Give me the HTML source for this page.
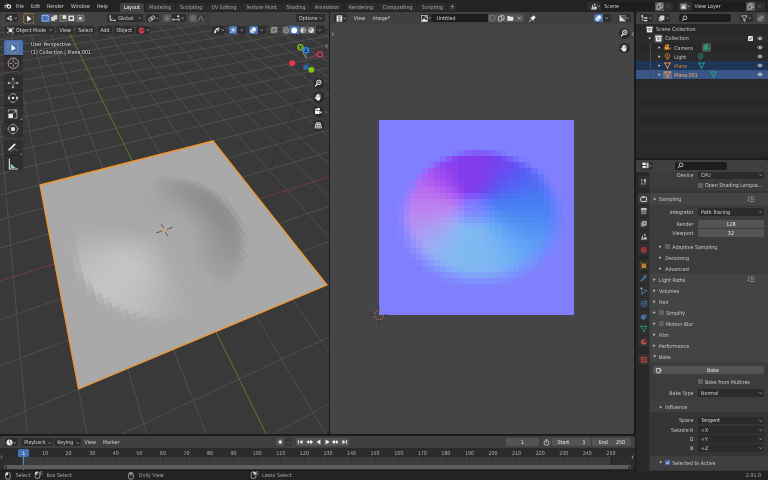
<!DOCTYPE html>
<html><head><meta charset="utf-8"><title>Blender</title>
<style>
html,body{margin:0;padding:0;}
body{width:768px;height:480px;overflow:hidden;background:#1c1c1c;position:relative;font-family:"DejaVu Sans Condensed","DejaVu Sans","Liberation Sans",sans-serif;}
#root{left:0;top:0;width:768px;height:480px;will-change:transform;}
div,span.t,svg{position:absolute;}
div{box-sizing:border-box;}
span.t{line-height:10px;height:10px;white-space:nowrap;}
</style></head><body><div id="root">
<div style="left:0px;top:0px;width:768px;height:12px;background:#232323;"></div>
<div style="left:0;top:12px;width:328.5px;height:422.3px;border-radius:2.5px;overflow:hidden;background:#393939"></div>
<svg style="left:0;top:12px" width="328.5" height="422.3" viewBox="0 12 328.5 422.3"><rect x="0" y="12" width="328.5" height="422.3" fill="#393939"/><path d="M263.3 439.0L333.0 401.9M27.7 439.0L-4.0 79.4M111.3 439.0L333.0 335.1M87.9 439.0L6.6 8.0M-4.0 423.5L333.0 282.5M148.2 439.0L23.5 8.0M-4.0 367.4L333.0 240.0M208.4 439.0L40.3 8.0M-4.0 321.1L333.0 205.0M328.7 439.0L74.0 8.0M-4.0 249.3L333.0 150.7M333.0 358.2L90.9 8.0M-4.0 220.9L333.0 129.2M333.0 292.6L107.7 8.0M-4.0 196.2L333.0 110.5M333.0 241.7L124.5 8.0M-4.0 174.5L333.0 94.1M333.0 201.2L141.3 8.0M-4.0 155.3L333.0 79.5M333.0 168.1L158.1 8.0M-4.0 138.1L333.0 66.6M333.0 140.5L174.9 8.0M-4.0 122.8L333.0 54.9M333.0 117.3L191.7 8.0M-4.0 108.9L333.0 44.5M333.0 97.4L208.5 8.0M-4.0 96.4L333.0 35.0M333.0 80.2L225.3 8.0M-4.0 84.9L333.0 26.3M333.0 65.1L242.0 8.0M-4.0 74.5L333.0 18.4M333.0 51.9L258.8 8.0M-4.0 64.9L333.0 11.1M333.0 40.1L275.5 8.0M-4.0 56.1L309.8 8.0M333.0 29.5L292.2 8.0M-4.0 47.9L266.9 8.0M333.0 20.1L309.0 8.0M-4.0 40.3L223.9 8.0M333.0 11.5L325.7 8.0M-4.0 33.3L180.8 8.0M-4.0 26.7L137.7 8.0M-4.0 20.6L94.5 8.0M-4.0 14.8L51.3 8.0M-4.0 9.4L8.0 8.0" stroke="#575757" stroke-width="0.7" fill="none"/><path d="M-4.0 282.3L333.0 175.7" stroke="#8a3c46" stroke-width="0.7" fill="none"/><path d="M268.6 439.0L57.2 8.0" stroke="#689a2a" stroke-width="0.7" fill="none"/><path d="M310.5 72L269 169.5" stroke="#2a2a2a" stroke-width="0.5"/><polygon points="213.0,141.0 40.0,185.0 78.5,389.0 327.0,285.0" fill="#a9a9a9"/><g shape-rendering="crispEdges"><polygon points="154.6,326.1 161.5,323.4 158.9,316.7 152.1,319.4" fill="#aaaaaa"/><polygon points="161.0,323.6 167.8,321.0 165.1,314.3 158.4,316.9" fill="#acacac"/><polygon points="167.3,321.2 180.2,316.1 177.4,309.6 164.6,314.5" fill="#adadad"/><polygon points="179.7,316.3 186.3,313.7 183.4,307.3 176.9,309.8" fill="#acacac"/><polygon points="185.8,313.9 192.3,311.3 189.4,304.9 182.9,307.4" fill="#aaaaaa"/><polygon points="139.5,324.8 146.4,322.1 144.1,315.5 137.2,318.1" fill="#aaaaaa"/><polygon points="145.9,322.3 152.8,319.7 150.3,313.1 143.6,315.7" fill="#afafaf"/><polygon points="152.3,319.9 159.1,317.2 156.6,310.7 149.8,313.3" fill="#b2b2b2"/><polygon points="158.6,317.4 165.3,314.8 162.7,308.3 156.1,310.9" fill="#b3b3b3"/><polygon points="164.8,315.0 171.5,312.4 168.8,306.0 162.2,308.5" fill="#b2b2b2"/><polygon points="171.0,312.6 177.6,310.1 174.8,303.7 168.3,306.2" fill="#b0b0b0"/><polygon points="177.1,310.3 183.6,307.7 180.8,301.5 174.4,303.9" fill="#adadad"/><polygon points="183.1,307.9 189.6,305.4 186.7,299.2 180.3,301.6" fill="#ababab"/><polygon points="218.2,294.3 224.2,292.0 221.0,286.1 215.0,288.4" fill="#a8a8a8"/><polygon points="223.8,292.2 235.4,287.7 232.0,281.9 220.6,286.3" fill="#a7a7a7"/><polygon points="234.9,287.9 240.8,285.6 237.4,279.9 231.6,282.1" fill="#a8a8a8"/><polygon points="131.0,321.0 137.9,318.4 135.7,311.8 128.8,314.4" fill="#adadad"/><polygon points="137.4,318.6 144.2,315.9 141.9,309.5 135.2,312.0" fill="#b4b4b4"/><polygon points="143.7,316.1 150.5,313.5 148.1,307.1 141.4,309.6" fill="#b8b8b8"/><polygon points="150.0,313.7 156.7,311.2 154.3,304.8 147.6,307.3" fill="#b7b7b7"/><polygon points="156.3,311.4 162.9,308.8 160.4,302.5 153.8,305.0" fill="#b5b5b5"/><polygon points="162.4,309.0 169.0,306.5 166.4,300.3 159.9,302.7" fill="#b3b3b3"/><polygon points="168.5,306.7 175.0,304.2 172.4,298.0 165.9,300.4" fill="#b0b0b0"/><polygon points="174.6,304.4 181.0,301.9 178.3,295.8 171.9,298.2" fill="#aeaeae"/><polygon points="180.5,302.1 186.9,299.7 184.1,293.6 177.8,296.0" fill="#ababab"/><polygon points="215.2,288.9 221.2,286.6 218.1,280.8 212.1,283.1" fill="#a6a6a6"/><polygon points="220.8,286.7 226.8,284.4 223.6,278.8 217.6,281.0" fill="#a4a4a4"/><polygon points="226.3,284.6 232.2,282.4 229.0,276.7 223.1,278.9" fill="#a3a3a3"/><polygon points="231.8,282.5 237.7,280.3 234.4,274.7 228.6,276.9" fill="#a4a4a4"/><polygon points="237.2,280.5 243.0,278.2 239.7,272.7 233.9,274.9" fill="#a7a7a7"/><polygon points="122.6,317.3 129.5,314.7 127.4,308.2 120.5,310.7" fill="#b0b0b0"/><polygon points="129.0,314.9 135.8,312.3 133.6,305.9 126.9,308.4" fill="#b9b9b9"/><polygon points="135.3,312.5 142.1,309.9 139.8,303.6 133.1,306.1" fill="#bcbcbc"/><polygon points="141.6,310.1 148.3,307.6 146.0,301.3 139.4,303.8" fill="#bbbbbb"/><polygon points="147.8,307.8 154.5,305.3 152.1,299.1 145.5,301.5" fill="#b9b9b9"/><polygon points="154.0,305.5 160.6,303.0 158.1,296.8 151.6,299.2" fill="#b7b7b7"/><polygon points="160.1,303.2 166.6,300.7 164.1,294.6 157.6,297.0" fill="#b4b4b4"/><polygon points="166.1,300.9 172.6,298.5 170.0,292.4 163.6,294.8" fill="#b1b1b1"/><polygon points="172.1,298.6 178.5,296.2 175.8,290.3 169.5,292.6" fill="#afafaf"/><polygon points="178.0,296.4 184.3,294.0 181.6,288.1 175.4,290.4" fill="#acacac"/><polygon points="212.3,283.5 218.3,281.3 215.2,275.7 209.3,277.9" fill="#a5a5a5"/><polygon points="217.9,281.4 223.8,279.2 220.7,273.7 214.8,275.8" fill="#a3a3a3"/><polygon points="223.4,279.4 234.6,275.1 231.4,269.7 220.2,273.8" fill="#a0a0a0"/><polygon points="234.2,275.3 239.9,273.1 236.6,267.7 230.9,269.9" fill="#a1a1a1"/><polygon points="239.5,273.3 245.2,271.1 241.9,265.8 236.2,267.9" fill="#a5a5a5"/><polygon points="114.3,313.6 121.2,311.0 119.2,304.7 112.4,307.2" fill="#b1b1b1"/><polygon points="120.7,311.2 127.5,308.7 125.5,302.4 118.7,304.9" fill="#bcbcbc"/><polygon points="127.0,308.9 133.8,306.4 131.7,300.1 125.0,302.6" fill="#bfbfbf"/><polygon points="133.3,306.5 140.0,304.1 137.8,297.9 131.2,300.3" fill="#bebebe"/><polygon points="139.5,304.2 146.2,301.8 143.9,295.7 137.3,298.1" fill="#bcbcbc"/><polygon points="145.7,302.0 152.2,299.5 149.9,293.5 143.4,295.8" fill="#bababa"/><polygon points="151.8,299.7 158.3,297.3 155.9,291.3 149.4,293.6" fill="#b8b8b8"/><polygon points="157.8,297.5 164.2,295.1 161.8,289.1 155.4,291.5" fill="#b5b5b5"/><polygon points="163.8,295.2 170.2,292.9 167.6,287.0 161.3,289.3" fill="#b3b3b3"/><polygon points="169.7,293.1 176.0,290.7 173.4,284.9 167.2,287.2" fill="#afafaf"/><polygon points="175.5,290.9 181.8,288.6 179.1,282.8 173.0,285.0" fill="#acacac"/><polygon points="181.4,288.7 187.6,286.4 184.8,280.7 178.7,283.0" fill="#aaaaaa"/><polygon points="204.0,280.3 210.0,278.1 207.0,272.6 201.1,274.8" fill="#a8a8a8"/><polygon points="209.5,278.3 215.5,276.1 212.5,270.6 206.6,272.8" fill="#a4a4a4"/><polygon points="215.0,276.2 220.9,274.1 217.8,268.7 212.0,270.8" fill="#a1a1a1"/><polygon points="220.5,274.2 226.3,272.1 223.1,266.7 217.4,268.8" fill="#9f9f9f"/><polygon points="225.8,272.2 231.6,270.1 228.4,264.8 222.7,266.9" fill="#9d9d9d"/><polygon points="231.2,270.3 236.9,268.1 233.6,262.9 228.0,264.9" fill="#9c9c9c"/><polygon points="236.4,268.3 242.1,266.2 238.8,261.0 233.2,263.0" fill="#9f9f9f"/><polygon points="241.7,266.4 247.3,264.3 244.0,259.1 238.4,261.1" fill="#a4a4a4"/><polygon points="106.1,310.0 113.0,307.4 111.2,301.2 104.4,303.6" fill="#b0b0b0"/><polygon points="112.5,307.6 119.4,305.1 117.4,298.9 110.7,301.4" fill="#bdbdbd"/><polygon points="118.9,305.3 125.6,302.8 123.6,296.7 116.9,299.1" fill="#c1c1c1"/><polygon points="125.1,303.0 131.8,300.6 129.8,294.5 123.1,296.9" fill="#c0c0c0"/><polygon points="131.3,300.8 138.0,298.3 135.8,292.3 129.3,294.7" fill="#bfbfbf"/><polygon points="137.5,298.5 144.1,296.1 141.8,290.1 135.3,292.5" fill="#bebebe"/><polygon points="143.6,296.3 150.1,293.9 147.8,288.0 141.4,290.3" fill="#bcbcbc"/><polygon points="149.6,294.1 156.0,291.7 153.7,285.9 147.3,288.2" fill="#bababa"/><polygon points="155.6,291.9 162.0,289.6 159.5,283.8 153.2,286.0" fill="#b7b7b7"/><polygon points="161.5,289.7 167.8,287.4 165.3,281.7 159.1,283.9" fill="#b4b4b4"/><polygon points="167.3,287.6 173.6,285.3 171.1,279.6 164.9,281.8" fill="#b0b0b0"/><polygon points="173.1,285.5 179.3,283.2 176.7,277.6 170.6,279.8" fill="#adadad"/><polygon points="178.9,283.4 185.0,281.1 182.4,275.5 176.3,277.7" fill="#aaaaaa"/><polygon points="201.3,275.2 207.2,273.0 204.4,267.6 198.5,269.7" fill="#a7a7a7"/><polygon points="206.8,273.2 212.7,271.0 209.7,265.7 203.9,267.8" fill="#a3a3a3"/><polygon points="212.2,271.2 218.0,269.1 215.1,263.8 209.3,265.8" fill="#a1a1a1"/><polygon points="217.6,269.2 223.4,267.1 220.3,261.9 214.6,263.9" fill="#9e9e9e"/><polygon points="223.0,267.3 228.7,265.2 225.6,260.0 219.9,262.0" fill="#9c9c9c"/><polygon points="228.2,265.3 233.9,263.3 230.7,258.1 225.1,260.1" fill="#9a9a9a"/><polygon points="233.5,263.4 239.1,261.4 235.9,256.3 230.3,258.3" fill="#999999"/><polygon points="238.7,261.5 244.2,259.5 241.0,254.4 235.5,256.4" fill="#9d9d9d"/><polygon points="243.8,259.6 249.3,257.6 246.0,252.6 240.6,254.6" fill="#a4a4a4"/><polygon points="98.1,306.4 105.0,303.9 103.3,297.7 96.4,300.2" fill="#adadad"/><polygon points="104.5,304.1 111.3,301.6 109.5,295.5 102.8,297.9" fill="#bbbbbb"/><polygon points="110.8,301.8 123.8,297.1 121.8,291.2 109.0,295.7" fill="#c2c2c2"/><polygon points="123.3,297.3 129.9,294.9 127.9,289.0 121.3,291.3" fill="#c1c1c1"/><polygon points="129.4,295.1 136.0,292.7 133.9,286.9 127.4,289.2" fill="#c0c0c0"/><polygon points="135.5,292.9 142.0,290.6 139.8,284.7 133.4,287.0" fill="#bfbfbf"/><polygon points="141.5,290.7 148.0,288.4 145.7,282.7 139.4,284.9" fill="#bebebe"/><polygon points="147.5,288.6 153.9,286.3 151.6,280.6 145.3,282.8" fill="#bcbcbc"/><polygon points="153.4,286.5 159.7,284.2 157.4,278.5 151.1,280.7" fill="#b9b9b9"/><polygon points="159.3,284.4 165.5,282.1 163.1,276.5 156.9,278.7" fill="#b6b6b6"/><polygon points="165.1,282.3 171.2,280.0 168.8,274.5 162.6,276.7" fill="#b2b2b2"/><polygon points="170.8,280.2 176.9,278.0 174.4,272.5 168.3,274.6" fill="#aeaeae"/><polygon points="176.5,278.1 182.6,276.0 180.0,270.5 173.9,272.6" fill="#aaaaaa"/><polygon points="198.7,270.1 204.6,268.0 201.7,262.8 195.9,264.8" fill="#a6a6a6"/><polygon points="204.1,268.2 209.9,266.1 207.1,260.9 201.3,262.9" fill="#a3a3a3"/><polygon points="209.5,266.2 215.3,264.2 212.3,259.0 206.6,261.0" fill="#a0a0a0"/><polygon points="214.8,264.3 220.6,262.3 217.6,257.1 211.9,259.1" fill="#9d9d9d"/><polygon points="220.1,262.4 225.8,260.4 222.8,255.3 217.2,257.3" fill="#9b9b9b"/><polygon points="225.4,260.5 231.0,258.5 227.9,253.5 222.3,255.4" fill="#999999"/><polygon points="230.6,258.7 241.2,254.8 238.0,249.9 227.5,253.6" fill="#979797"/><polygon points="240.8,255.0 246.2,253.0 243.0,248.1 237.6,250.0" fill="#9e9e9e"/><polygon points="245.8,253.1 251.2,251.2 248.0,246.3 242.6,248.2" fill="#a6a6a6"/><polygon points="96.6,300.6 103.4,298.2 101.7,292.2 95.0,294.5" fill="#b5b5b5"/><polygon points="102.9,298.4 109.6,296.0 107.9,290.0 101.2,292.3" fill="#c2c2c2"/><polygon points="109.1,296.2 122.0,291.6 120.1,285.7 107.4,290.2" fill="#c3c3c3"/><polygon points="121.5,291.8 134.0,287.3 132.0,281.6 119.6,285.9" fill="#c2c2c2"/><polygon points="133.6,287.5 140.0,285.2 137.9,279.5 131.5,281.7" fill="#c1c1c1"/><polygon points="139.5,285.3 145.9,283.1 143.7,277.4 137.4,279.7" fill="#c0c0c0"/><polygon points="145.4,283.2 151.7,281.0 149.5,275.4 143.3,277.6" fill="#bebebe"/><polygon points="151.3,281.2 157.5,278.9 155.2,273.4 149.0,275.6" fill="#bbbbbb"/><polygon points="157.1,279.1 163.3,276.9 160.9,271.4 154.8,273.6" fill="#b7b7b7"/><polygon points="162.8,277.1 169.0,274.9 166.5,269.5 160.5,271.6" fill="#b3b3b3"/><polygon points="168.5,275.0 174.6,272.9 172.1,267.5 166.1,269.6" fill="#aeaeae"/><polygon points="174.1,273.0 180.2,270.9 177.6,265.6 171.7,267.7" fill="#aaaaaa"/><polygon points="196.1,265.2 202.0,263.1 199.2,258.0 193.4,260.0" fill="#a6a6a6"/><polygon points="201.5,263.3 207.3,261.3 204.5,256.2 198.8,258.2" fill="#a3a3a3"/><polygon points="206.9,261.4 212.6,259.4 209.7,254.3 204.0,256.3" fill="#a0a0a0"/><polygon points="212.1,259.5 217.8,257.5 214.9,252.5 209.3,254.5" fill="#9d9d9d"/><polygon points="217.4,257.7 223.0,255.7 220.0,250.7 214.5,252.7" fill="#9a9a9a"/><polygon points="222.6,255.8 228.1,253.8 225.1,248.9 219.6,250.9" fill="#989898"/><polygon points="227.7,254.0 233.2,252.0 230.2,247.2 224.7,249.1" fill="#969696"/><polygon points="232.8,252.2 238.3,250.2 235.2,245.4 229.7,247.3" fill="#959595"/><polygon points="237.9,250.4 243.3,248.5 240.1,243.7 234.8,245.5" fill="#979797"/><polygon points="242.9,248.6 248.2,246.7 245.0,241.9 239.7,243.8" fill="#a0a0a0"/><polygon points="247.8,246.8 253.1,244.9 249.9,240.2 244.6,242.1" fill="#a8a8a8"/><polygon points="88.8,297.2 95.6,294.8 94.0,288.9 87.3,291.2" fill="#aeaeae"/><polygon points="95.1,295.0 101.8,292.6 100.2,286.7 93.5,289.0" fill="#bebebe"/><polygon points="101.3,292.8 138.0,279.9 136.0,274.4 99.7,286.9" fill="#c3c3c3"/><polygon points="137.6,280.1 143.9,277.9 141.8,272.4 135.5,274.5" fill="#c1c1c1"/><polygon points="143.4,278.0 149.7,275.8 147.5,270.4 141.3,272.5" fill="#bfbfbf"/><polygon points="149.2,276.0 155.4,273.8 153.2,268.4 147.0,270.5" fill="#bcbcbc"/><polygon points="154.9,274.0 161.1,271.8 158.8,266.5 152.7,268.6" fill="#b8b8b8"/><polygon points="160.6,272.0 166.7,269.9 164.3,264.5 158.3,266.6" fill="#b3b3b3"/><polygon points="166.3,270.0 172.3,267.9 169.9,262.6 163.9,264.7" fill="#afafaf"/><polygon points="171.8,268.1 177.8,266.0 175.3,260.8 169.4,262.8" fill="#ababab"/><polygon points="188.3,262.3 194.1,260.3 191.4,255.2 185.7,257.2" fill="#a8a8a8"/><polygon points="193.6,260.4 199.4,258.4 196.7,253.4 191.0,255.3" fill="#a6a6a6"/><polygon points="199.0,258.5 204.7,256.5 201.9,251.6 196.3,253.5" fill="#a3a3a3"/><polygon points="204.3,256.7 209.9,254.7 207.1,249.8 201.5,251.7" fill="#a0a0a0"/><polygon points="209.5,254.8 215.1,252.9 212.2,248.0 206.7,249.9" fill="#9d9d9d"/><polygon points="214.7,253.0 220.2,251.1 217.3,246.2 211.8,248.1" fill="#9a9a9a"/><polygon points="219.8,251.2 225.3,249.3 222.4,244.5 216.9,246.4" fill="#979797"/><polygon points="224.9,249.4 230.4,247.5 227.4,242.8 222.0,244.6" fill="#959595"/><polygon points="230.0,247.7 235.4,245.8 232.3,241.0 227.0,242.9" fill="#949494"/><polygon points="235.0,245.9 240.3,244.0 237.3,239.3 232.0,241.2" fill="#939393"/><polygon points="239.9,244.2 245.3,242.3 242.1,237.7 236.9,239.5" fill="#9a9a9a"/><polygon points="244.9,242.4 250.1,240.6 247.0,236.0 241.8,237.8" fill="#a4a4a4"/><polygon points="87.4,291.6 94.1,289.3 92.6,283.5 85.9,285.8" fill="#b4b4b4"/><polygon points="93.6,289.5 100.3,287.2 98.7,281.4 92.1,283.7" fill="#c2c2c2"/><polygon points="99.8,287.3 112.5,282.9 110.7,277.3 98.2,281.6" fill="#c3c3c3"/><polygon points="112.0,283.1 136.1,274.8 134.1,269.3 110.2,277.5" fill="#c4c4c4"/><polygon points="135.7,274.9 141.9,272.8 139.8,267.4 133.7,269.5" fill="#c2c2c2"/><polygon points="141.5,272.9 147.6,270.8 145.5,265.4 139.4,267.5" fill="#c0c0c0"/><polygon points="147.2,270.9 153.3,268.8 151.1,263.5 145.1,265.6" fill="#bdbdbd"/><polygon points="152.9,269.0 158.9,266.9 156.7,261.6 150.7,263.7" fill="#b8b8b8"/><polygon points="158.5,267.0 164.5,264.9 162.2,259.8 156.2,261.8" fill="#b4b4b4"/><polygon points="164.1,265.1 170.0,263.0 167.7,257.9 161.8,259.9" fill="#afafaf"/><polygon points="169.6,263.2 175.5,261.1 173.1,256.0 167.2,258.0" fill="#ababab"/><polygon points="185.9,257.5 191.6,255.6 189.0,250.6 183.3,252.5" fill="#a8a8a8"/><polygon points="191.2,255.7 196.9,253.7 194.3,248.8 188.6,250.7" fill="#a6a6a6"/><polygon points="196.5,253.9 202.1,251.9 199.4,247.0 193.8,249.0" fill="#a4a4a4"/><polygon points="201.7,252.1 207.3,250.1 204.6,245.3 199.0,247.2" fill="#a1a1a1"/><polygon points="206.9,250.3 212.5,248.3 209.7,243.6 204.2,245.4" fill="#9e9e9e"/><polygon points="212.0,248.5 217.5,246.6 214.7,241.8 209.3,243.7" fill="#9a9a9a"/><polygon points="217.1,246.7 222.6,244.8 219.7,240.1 214.3,242.0" fill="#979797"/><polygon points="222.2,245.0 227.6,243.1 224.7,238.4 219.3,240.3" fill="#949494"/><polygon points="227.2,243.2 237.5,239.7 234.5,235.1 224.3,238.6" fill="#929292"/><polygon points="237.1,239.8 242.4,238.0 239.3,233.4 234.1,235.2" fill="#949494"/><polygon points="242.0,238.1 247.2,236.3 244.1,231.8 238.9,233.6" fill="#9f9f9f"/><polygon points="246.8,236.5 252.0,234.7 248.9,230.2 243.7,231.9" fill="#a8a8a8"/><polygon points="79.8,288.3 86.5,286.0 85.1,280.3 78.4,282.6" fill="#ababab"/><polygon points="86.0,286.2 92.7,283.9 91.2,278.3 84.6,280.5" fill="#bababa"/><polygon points="92.2,284.1 104.8,279.8 103.2,274.2 90.7,278.4" fill="#c2c2c2"/><polygon points="104.4,279.9 110.8,277.7 109.1,272.2 102.7,274.4" fill="#c3c3c3"/><polygon points="110.4,277.9 122.7,273.7 120.8,268.3 108.7,272.4" fill="#c4c4c4"/><polygon points="122.2,273.9 128.5,271.7 126.6,266.4 120.4,268.4" fill="#c5c5c5"/><polygon points="128.0,271.9 134.3,269.7 132.3,264.4 126.1,266.5" fill="#c4c4c4"/><polygon points="133.8,269.9 140.0,267.8 138.0,262.5 131.8,264.6" fill="#c3c3c3"/><polygon points="139.5,267.9 145.7,265.8 143.6,260.6 137.5,262.7" fill="#c0c0c0"/><polygon points="145.2,266.0 151.3,263.9 149.1,258.8 143.1,260.8" fill="#bcbcbc"/><polygon points="150.8,264.1 156.8,262.0 154.6,256.9 148.7,258.9" fill="#b8b8b8"/><polygon points="156.4,262.2 162.4,260.1 160.1,255.1 154.2,257.1" fill="#b4b4b4"/><polygon points="161.9,260.3 167.8,258.3 165.5,253.2 159.7,255.2" fill="#afafaf"/><polygon points="167.4,258.4 173.3,256.4 170.9,251.4 165.1,253.4" fill="#ababab"/><polygon points="183.5,252.9 189.2,251.0 186.7,246.1 181.0,248.0" fill="#a8a8a8"/><polygon points="188.8,251.1 194.5,249.2 191.9,244.4 186.3,246.3" fill="#a7a7a7"/><polygon points="194.0,249.3 199.6,247.4 197.0,242.6 191.5,244.5" fill="#a5a5a5"/><polygon points="199.2,247.5 204.8,245.6 202.1,240.9 196.6,242.8" fill="#a2a2a2"/><polygon points="204.4,245.8 209.9,243.9 207.1,239.2 201.7,241.1" fill="#9f9f9f"/><polygon points="209.5,244.0 214.9,242.2 212.1,237.5 206.7,239.4" fill="#9b9b9b"/><polygon points="214.5,242.3 219.9,240.5 217.1,235.9 211.7,237.7" fill="#979797"/><polygon points="219.5,240.6 224.9,238.8 222.0,234.2 216.7,236.0" fill="#949494"/><polygon points="224.5,238.9 239.5,233.8 236.5,229.3 221.6,234.3" fill="#919191"/><polygon points="239.1,233.9 244.3,232.1 241.3,227.7 236.2,229.5" fill="#9a9a9a"/><polygon points="244.0,232.3 249.1,230.5 246.0,226.1 240.9,227.9" fill="#a6a6a6"/><polygon points="78.5,283.0 85.2,280.7 83.8,275.2 77.2,277.4" fill="#aeaeae"/><polygon points="84.7,280.9 91.3,278.7 89.8,273.2 83.3,275.3" fill="#bdbdbd"/><polygon points="90.8,278.9 103.3,274.6 101.7,269.2 89.4,273.3" fill="#c1c1c1"/><polygon points="102.9,274.8 109.3,272.6 107.6,267.3 101.3,269.4" fill="#c2c2c2"/><polygon points="108.8,272.8 115.1,270.7 113.4,265.3 107.1,267.4" fill="#c3c3c3"/><polygon points="114.7,270.8 132.4,264.8 130.5,259.6 112.9,265.5" fill="#c4c4c4"/><polygon points="132.0,265.0 138.1,262.9 136.1,257.8 130.1,259.8" fill="#c2c2c2"/><polygon points="137.7,263.1 143.7,261.0 141.7,255.9 135.7,257.9" fill="#bfbfbf"/><polygon points="143.3,261.2 149.3,259.1 147.2,254.1 141.2,256.1" fill="#bcbcbc"/><polygon points="148.8,259.3 154.8,257.3 152.6,252.3 146.8,254.2" fill="#b8b8b8"/><polygon points="154.4,257.4 160.3,255.4 158.1,250.5 152.2,252.4" fill="#b3b3b3"/><polygon points="159.8,255.6 165.7,253.6 163.4,248.7 157.6,250.6" fill="#afafaf"/><polygon points="165.3,253.8 171.1,251.8 168.7,246.9 163.0,248.8" fill="#ababab"/><polygon points="181.2,248.4 186.9,246.5 184.4,241.7 178.8,243.6" fill="#a8a8a8"/><polygon points="186.5,246.6 192.1,244.7 189.5,240.0 184.0,241.9" fill="#a7a7a7"/><polygon points="191.6,244.9 197.2,243.0 194.6,238.3 189.1,240.2" fill="#a6a6a6"/><polygon points="196.8,243.1 202.3,241.3 199.7,236.6 194.2,238.5" fill="#a3a3a3"/><polygon points="201.9,241.4 207.3,239.6 204.7,235.0 199.3,236.8" fill="#a0a0a0"/><polygon points="206.9,239.7 212.4,237.9 209.6,233.3 204.3,235.1" fill="#9c9c9c"/><polygon points="212.0,238.0 217.3,236.2 214.6,231.7 209.2,233.5" fill="#989898"/><polygon points="216.9,236.3 222.2,234.5 219.4,230.1 214.2,231.8" fill="#949494"/><polygon points="221.8,234.7 227.1,232.9 224.3,228.5 219.0,230.2" fill="#919191"/><polygon points="226.7,233.0 236.8,229.7 233.8,225.3 223.9,228.6" fill="#8f8f8f"/><polygon points="236.4,229.8 241.5,228.0 238.5,223.7 233.4,225.4" fill="#969696"/><polygon points="241.1,228.2 246.2,226.5 243.2,222.2 238.2,223.8" fill="#a3a3a3"/><polygon points="77.3,277.8 83.9,275.6 82.5,270.1 76.0,272.3" fill="#b0b0b0"/><polygon points="83.4,275.7 89.9,273.6 88.5,268.2 82.1,270.3" fill="#bebebe"/><polygon points="89.5,273.7 95.9,271.6 94.4,266.2 88.0,268.3" fill="#bfbfbf"/><polygon points="95.4,271.7 101.8,269.6 100.3,264.3 93.9,266.4" fill="#c0c0c0"/><polygon points="101.4,269.8 107.7,267.7 106.1,262.4 99.8,264.5" fill="#c1c1c1"/><polygon points="107.2,267.8 113.5,265.7 111.8,260.5 105.6,262.6" fill="#c2c2c2"/><polygon points="113.1,265.9 125.0,261.9 123.2,256.8 111.4,260.7" fill="#c3c3c3"/><polygon points="124.6,262.0 130.7,260.0 128.8,254.9 122.7,256.9" fill="#c2c2c2"/><polygon points="130.2,260.2 136.3,258.1 134.3,253.1 128.3,255.1" fill="#c0c0c0"/><polygon points="135.8,258.3 141.8,256.3 139.8,251.3 133.9,253.3" fill="#bebebe"/><polygon points="141.4,256.4 147.3,254.5 145.3,249.5 139.4,251.5" fill="#bababa"/><polygon points="146.9,254.6 152.8,252.6 150.7,247.8 144.9,249.7" fill="#b7b7b7"/><polygon points="152.4,252.8 158.2,250.8 156.1,246.0 150.3,247.9" fill="#b3b3b3"/><polygon points="157.8,251.0 163.6,249.1 161.4,244.3 155.6,246.1" fill="#afafaf"/><polygon points="163.2,249.2 168.9,247.3 166.6,242.5 160.9,244.4" fill="#ababab"/><polygon points="179.0,243.9 189.7,240.4 187.3,235.8 176.6,239.2" fill="#a8a8a8"/><polygon points="189.3,240.5 194.8,238.7 192.3,234.1 186.8,235.9" fill="#a6a6a6"/><polygon points="194.4,238.8 199.9,237.0 197.3,232.5 191.9,234.2" fill="#a4a4a4"/><polygon points="199.5,237.1 204.9,235.3 202.3,230.8 196.9,232.6" fill="#a0a0a0"/><polygon points="204.5,235.5 209.8,233.7 207.2,229.2 201.9,231.0" fill="#9c9c9c"/><polygon points="209.4,233.8 214.8,232.0 212.1,227.6 206.8,229.3" fill="#989898"/><polygon points="214.4,232.2 219.6,230.4 216.9,226.0 211.7,227.7" fill="#949494"/><polygon points="219.3,230.5 224.5,228.8 221.7,224.5 216.5,226.2" fill="#919191"/><polygon points="224.1,228.9 234.0,225.6 231.2,221.3 221.3,224.6" fill="#8f8f8f"/><polygon points="233.7,225.7 238.8,224.0 235.9,219.8 230.8,221.5" fill="#939393"/><polygon points="238.4,224.2 243.4,222.5 240.5,218.3 235.5,219.9" fill="#a0a0a0"/><polygon points="76.1,272.7 82.6,270.5 81.3,265.2 74.9,267.3" fill="#b2b2b2"/><polygon points="82.2,270.7 88.6,268.6 87.2,263.3 80.8,265.4" fill="#bdbdbd"/><polygon points="88.1,268.7 100.4,264.7 98.9,259.5 86.7,263.4" fill="#bebebe"/><polygon points="99.9,264.8 106.2,262.8 104.6,257.7 98.4,259.7" fill="#bfbfbf"/><polygon points="105.7,262.9 112.0,260.9 110.3,255.8 104.1,257.8" fill="#c0c0c0"/><polygon points="111.5,261.0 123.3,257.2 121.5,252.2 109.8,256.0" fill="#c1c1c1"/><polygon points="122.9,257.3 128.9,255.3 127.1,250.4 121.1,252.3" fill="#c0c0c0"/><polygon points="128.5,255.5 134.5,253.5 132.6,248.6 126.6,250.5" fill="#bebebe"/><polygon points="134.0,253.6 140.0,251.7 138.0,246.8 132.1,248.7" fill="#bbbbbb"/><polygon points="139.5,251.8 145.4,249.9 143.4,245.1 137.6,247.0" fill="#b8b8b8"/><polygon points="145.0,250.0 150.9,248.1 148.8,243.3 143.0,245.2" fill="#b5b5b5"/><polygon points="150.4,248.3 156.2,246.4 154.1,241.6 148.4,243.5" fill="#b1b1b1"/><polygon points="155.8,246.5 161.5,244.6 159.4,239.9 153.7,241.7" fill="#aeaeae"/><polygon points="161.1,244.7 166.8,242.9 164.6,238.2 158.9,240.0" fill="#ababab"/><polygon points="176.8,239.6 187.4,236.1 185.0,231.6 174.5,235.0" fill="#a8a8a8"/><polygon points="187.0,236.2 192.5,234.4 190.0,230.0 184.6,231.7" fill="#a7a7a7"/><polygon points="192.1,234.6 197.5,232.8 195.0,228.4 189.6,230.1" fill="#a5a5a5"/><polygon points="197.1,232.9 202.5,231.2 199.9,226.8 194.6,228.5" fill="#a1a1a1"/><polygon points="202.1,231.3 207.4,229.5 204.8,225.2 199.5,226.9" fill="#9d9d9d"/><polygon points="207.0,229.7 212.3,227.9 209.6,223.6 204.4,225.3" fill="#989898"/><polygon points="211.9,228.1 217.1,226.3 214.4,222.1 209.2,223.7" fill="#949494"/><polygon points="216.7,226.5 221.9,224.8 219.2,220.5 214.0,222.2" fill="#909090"/><polygon points="221.5,224.9 231.4,221.7 228.6,217.5 218.8,220.6" fill="#8e8e8e"/><polygon points="231.0,221.8 236.1,220.1 233.2,216.0 228.2,217.6" fill="#919191"/><polygon points="235.7,220.2 240.7,218.6 237.8,214.5 232.8,216.1" fill="#9e9e9e"/><polygon points="75.0,267.7 81.4,265.6 80.1,260.4 73.7,262.4" fill="#b2b2b2"/><polygon points="80.9,265.7 87.3,263.7 85.9,258.5 79.6,260.5" fill="#bbbbbb"/><polygon points="86.8,263.8 99.0,259.9 97.5,254.8 85.5,258.7" fill="#bcbcbc"/><polygon points="98.5,260.0 110.4,256.2 108.8,251.2 97.0,255.0" fill="#bdbdbd"/><polygon points="110.0,256.3 121.7,252.5 119.9,247.6 108.4,251.3" fill="#bebebe"/><polygon points="121.2,252.7 127.2,250.7 125.4,245.9 119.5,247.8" fill="#bdbdbd"/><polygon points="126.8,250.9 132.7,248.9 130.9,244.1 125.0,246.0" fill="#bbbbbb"/><polygon points="132.3,249.1 138.2,247.2 136.3,242.4 130.4,244.3" fill="#b8b8b8"/><polygon points="137.7,247.3 143.6,245.4 141.6,240.7 135.8,242.5" fill="#b5b5b5"/><polygon points="143.2,245.6 148.9,243.7 146.9,239.0 141.2,240.8" fill="#b2b2b2"/><polygon points="148.5,243.8 154.3,242.0 152.2,237.3 146.5,239.1" fill="#afafaf"/><polygon points="153.8,242.1 159.5,240.2 157.4,235.6 151.8,237.5" fill="#acacac"/><polygon points="159.1,240.4 164.7,238.6 162.6,234.0 157.0,235.8" fill="#aaaaaa"/><polygon points="174.6,235.3 180.1,233.6 177.8,229.1 172.4,230.9" fill="#a8a8a8"/><polygon points="179.7,233.7 190.2,230.3 187.8,225.9 177.4,229.2" fill="#a7a7a7"/><polygon points="189.8,230.4 195.2,228.7 192.7,224.3 187.4,226.0" fill="#a5a5a5"/><polygon points="194.8,228.8 200.1,227.1 197.6,222.8 192.3,224.5" fill="#a1a1a1"/><polygon points="199.7,227.2 205.0,225.5 202.4,221.2 197.2,222.9" fill="#9d9d9d"/><polygon points="204.6,225.6 209.8,223.9 207.2,219.7 202.0,221.4" fill="#989898"/><polygon points="209.4,224.1 214.6,222.4 212.0,218.2 206.8,219.8" fill="#949494"/><polygon points="214.2,222.5 219.4,220.8 216.7,216.7 211.6,218.3" fill="#909090"/><polygon points="219.0,221.0 224.1,219.3 221.4,215.2 216.3,216.8" fill="#8e8e8e"/><polygon points="223.7,219.4 228.8,217.8 226.0,213.7 221.0,215.3" fill="#8d8d8d"/><polygon points="228.4,217.9 233.4,216.3 230.6,212.2 225.6,213.8" fill="#909090"/><polygon points="233.1,216.4 238.0,214.8 235.2,210.7 230.3,212.3" fill="#9d9d9d"/><polygon points="73.8,262.8 80.2,260.8 78.9,255.7 72.6,257.7" fill="#b1b1b1"/><polygon points="79.7,260.9 86.0,258.9 84.7,253.9 78.5,255.8" fill="#b9b9b9"/><polygon points="85.6,259.0 108.9,251.6 107.3,246.7 84.2,254.0" fill="#bababa"/><polygon points="108.5,251.7 114.5,249.8 112.9,245.0 106.9,246.8" fill="#bbbbbb"/><polygon points="114.1,249.9 120.1,248.0 118.4,243.2 112.4,245.1" fill="#bababa"/><polygon points="119.6,248.1 125.6,246.2 123.8,241.5 117.9,243.4" fill="#b9b9b9"/><polygon points="125.1,246.4 131.0,244.5 129.2,239.8 123.4,241.6" fill="#b7b7b7"/><polygon points="130.6,244.6 136.4,242.8 134.5,238.1 128.8,239.9" fill="#b4b4b4"/><polygon points="136.0,242.9 141.8,241.0 139.8,236.4 134.1,238.2" fill="#b2b2b2"/><polygon points="141.3,241.2 147.1,239.3 145.1,234.8 139.4,236.6" fill="#afafaf"/><polygon points="146.6,239.5 152.3,237.7 150.3,233.1 144.7,234.9" fill="#adadad"/><polygon points="151.9,237.8 157.6,236.0 155.5,231.5 149.9,233.2" fill="#ababab"/><polygon points="167.4,232.8 178.0,229.4 175.7,225.1 165.3,228.4" fill="#a8a8a8"/><polygon points="177.6,229.6 188.0,226.2 185.6,222.0 175.3,225.2" fill="#a7a7a7"/><polygon points="187.6,226.4 192.9,224.7 190.5,220.4 185.2,222.1" fill="#a5a5a5"/><polygon points="192.5,224.8 197.8,223.1 195.3,218.9 190.1,220.5" fill="#a1a1a1"/><polygon points="197.4,223.2 202.6,221.5 200.1,217.4 194.9,219.0" fill="#9d9d9d"/><polygon points="202.2,221.7 207.4,220.0 204.9,215.9 199.7,217.5" fill="#989898"/><polygon points="207.0,220.1 212.2,218.5 209.6,214.4 204.5,216.0" fill="#939393"/><polygon points="211.8,218.6 216.9,217.0 214.3,212.9 209.2,214.5" fill="#909090"/><polygon points="216.5,217.1 226.2,214.0 223.5,210.0 213.9,213.0" fill="#8d8d8d"/><polygon points="225.9,214.1 230.8,212.5 228.1,208.5 223.2,210.1" fill="#909090"/><polygon points="230.5,212.6 235.4,211.0 232.6,207.1 227.7,208.6" fill="#9d9d9d"/><polygon points="72.7,258.1 79.0,256.1 77.8,251.1 71.5,253.0" fill="#afafaf"/><polygon points="78.6,256.2 113.0,245.3 111.4,240.6 77.3,251.2" fill="#b7b7b7"/><polygon points="112.6,245.4 118.5,243.6 116.8,238.9 110.9,240.7" fill="#b6b6b6"/><polygon points="118.0,243.7 123.9,241.8 122.2,237.2 116.4,239.0" fill="#b5b5b5"/><polygon points="123.5,242.0 129.3,240.1 127.5,235.5 121.8,237.3" fill="#b3b3b3"/><polygon points="128.9,240.3 134.7,238.4 132.8,233.9 127.1,235.7" fill="#b0b0b0"/><polygon points="134.2,238.6 140.0,236.8 138.1,232.2 132.4,234.0" fill="#aeaeae"/><polygon points="139.6,236.9 145.2,235.1 143.3,230.6 137.7,232.4" fill="#acacac"/><polygon points="144.8,235.2 150.5,233.4 148.5,229.0 142.9,230.7" fill="#aaaaaa"/><polygon points="160.3,230.3 170.9,227.0 168.7,222.7 158.3,225.9" fill="#a8a8a8"/><polygon points="170.5,227.1 180.8,223.8 178.6,219.6 168.3,222.8" fill="#a7a7a7"/><polygon points="180.4,224.0 185.8,222.3 183.4,218.1 178.2,219.7" fill="#a6a6a6"/><polygon points="185.4,222.4 190.6,220.7 188.3,216.6 183.1,218.2" fill="#a4a4a4"/><polygon points="190.3,220.8 195.5,219.2 193.1,215.1 187.9,216.7" fill="#a0a0a0"/><polygon points="195.1,219.3 200.3,217.7 197.8,213.6 192.7,215.2" fill="#9c9c9c"/><polygon points="199.9,217.8 205.0,216.2 202.6,212.1 197.5,213.7" fill="#979797"/><polygon points="204.7,216.3 209.8,214.7 207.2,210.6 202.2,212.2" fill="#939393"/><polygon points="209.4,214.8 214.5,213.2 211.9,209.2 206.9,210.8" fill="#8f8f8f"/><polygon points="214.1,213.3 223.7,210.3 221.1,206.3 211.5,209.3" fill="#8d8d8d"/><polygon points="223.4,210.4 228.3,208.8 225.6,204.9 220.7,206.4" fill="#909090"/><polygon points="227.9,208.9 232.8,207.4 230.1,203.5 225.2,205.0" fill="#9e9e9e"/><polygon points="71.6,253.4 77.9,251.5 76.6,246.6 70.5,248.5" fill="#adadad"/><polygon points="77.4,251.6 83.6,249.7 82.3,244.8 76.2,246.7" fill="#b4b4b4"/><polygon points="83.1,249.8 89.3,247.9 87.9,243.1 81.9,245.0" fill="#b5b5b5"/><polygon points="88.8,248.0 106.0,242.6 104.5,238.0 87.5,243.2" fill="#b4b4b4"/><polygon points="105.6,242.8 111.5,240.9 109.9,236.3 104.1,238.1" fill="#b3b3b3"/><polygon points="111.1,241.1 116.9,239.2 115.3,234.7 109.5,236.4" fill="#b2b2b2"/><polygon points="116.5,239.4 122.3,237.5 120.6,233.0 114.9,234.8" fill="#b0b0b0"/><polygon points="121.9,237.7 127.7,235.9 125.9,231.4 120.2,233.1" fill="#afafaf"/><polygon points="127.3,236.0 133.0,234.2 131.2,229.8 125.5,231.5" fill="#adadad"/><polygon points="132.6,234.3 138.2,232.6 136.4,228.1 130.8,229.9" fill="#aaaaaa"/><polygon points="148.2,229.5 163.9,224.6 161.8,220.3 146.3,225.1" fill="#a8a8a8"/><polygon points="163.5,224.7 178.7,219.9 176.5,215.8 161.4,220.4" fill="#a7a7a7"/><polygon points="178.3,220.0 183.6,218.4 181.3,214.3 176.1,215.9" fill="#a6a6a6"/><polygon points="183.2,218.5 188.5,216.9 186.1,212.8 181.0,214.4" fill="#a3a3a3"/><polygon points="188.1,217.0 193.3,215.4 190.9,211.3 185.8,212.9" fill="#9f9f9f"/><polygon points="192.9,215.5 198.0,213.9 195.6,209.9 190.5,211.4" fill="#9b9b9b"/><polygon points="197.6,214.0 202.7,212.4 200.3,208.4 195.2,210.0" fill="#979797"/><polygon points="202.4,212.5 207.4,210.9 204.9,207.0 199.9,208.5" fill="#929292"/><polygon points="207.1,211.0 212.1,209.5 209.6,205.6 204.6,207.1" fill="#8f8f8f"/><polygon points="211.7,209.6 221.3,206.6 218.7,202.7 209.2,205.7" fill="#8d8d8d"/><polygon points="220.9,206.7 225.8,205.2 223.2,201.4 218.3,202.9" fill="#929292"/><polygon points="225.4,205.3 230.3,203.8 227.6,200.0 222.8,201.5" fill="#a0a0a0"/><polygon points="70.6,248.9 76.7,246.9 75.5,242.2 69.4,244.1" fill="#ababab"/><polygon points="76.3,247.1 82.4,245.2 81.2,240.5 75.1,242.3" fill="#b1b1b1"/><polygon points="82.0,245.3 93.6,241.7 92.2,237.1 80.7,240.6" fill="#b2b2b2"/><polygon points="93.2,241.9 99.1,240.0 97.7,235.4 91.8,237.2" fill="#b1b1b1"/><polygon points="98.7,240.2 104.6,238.3 103.1,233.8 97.3,235.6" fill="#b0b0b0"/><polygon points="104.2,238.5 110.0,236.7 108.5,232.1 102.7,233.9" fill="#afafaf"/><polygon points="109.6,236.8 115.4,235.0 113.8,230.5 108.1,232.3" fill="#aeaeae"/><polygon points="115.0,235.1 120.8,233.3 119.1,228.9 113.4,230.6" fill="#adadad"/><polygon points="120.3,233.5 126.1,231.7 124.4,227.3 118.7,229.0" fill="#ababab"/><polygon points="130.9,230.2 156.9,222.2 154.9,218.0 129.1,225.8" fill="#a8a8a8"/><polygon points="156.5,222.3 171.8,217.6 169.7,213.5 154.5,218.1" fill="#a7a7a7"/><polygon points="171.4,217.7 176.7,216.1 174.5,212.0 169.3,213.6" fill="#a6a6a6"/><polygon points="176.3,216.2 181.5,214.6 179.3,210.5 174.1,212.1" fill="#a4a4a4"/><polygon points="181.1,214.7 186.3,213.1 184.0,209.1 178.9,210.7" fill="#a2a2a2"/><polygon points="185.9,213.2 191.1,211.6 188.8,207.6 183.7,209.2" fill="#9e9e9e"/><polygon points="190.7,211.7 195.8,210.2 193.4,206.2 188.4,207.8" fill="#9a9a9a"/><polygon points="195.4,210.3 200.5,208.7 198.1,204.8 193.1,206.3" fill="#969696"/><polygon points="200.1,208.8 205.1,207.3 202.7,203.4 197.7,204.9" fill="#929292"/><polygon points="204.8,207.4 209.7,205.8 207.3,202.0 202.3,203.5" fill="#8f8f8f"/><polygon points="209.4,206.0 218.9,203.0 216.3,199.2 206.9,202.1" fill="#8e8e8e"/><polygon points="218.5,203.1 223.4,201.6 220.8,197.9 216.0,199.4" fill="#949494"/><polygon points="223.0,201.7 227.8,200.3 225.2,196.5 220.4,198.0" fill="#a3a3a3"/><polygon points="69.5,244.4 75.6,242.5 74.5,237.9 68.4,239.7" fill="#aaaaaa"/><polygon points="75.2,242.7 81.2,240.8 80.0,236.2 74.0,238.0" fill="#aeaeae"/><polygon points="80.8,241.0 86.8,239.1 85.5,234.5 79.6,236.3" fill="#b0b0b0"/><polygon points="86.4,239.3 92.3,237.4 91.0,232.9 85.1,234.7" fill="#afafaf"/><polygon points="91.9,237.6 97.8,235.8 96.4,231.3 90.6,233.0" fill="#aeaeae"/><polygon points="97.4,235.9 103.2,234.1 101.8,229.6 96.0,231.4" fill="#adadad"/><polygon points="102.8,234.2 108.6,232.5 107.1,228.0 101.4,229.8" fill="#acacac"/><polygon points="108.2,232.6 113.9,230.8 112.4,226.4 106.7,228.2" fill="#ababab"/><polygon points="124.1,227.7 145.0,221.3 143.2,217.2 122.4,223.4" fill="#a8a8a8"/><polygon points="144.6,221.5 164.9,215.3 162.9,211.2 142.8,217.3" fill="#a7a7a7"/><polygon points="164.6,215.4 169.8,213.8 167.7,209.8 162.5,211.3" fill="#a6a6a6"/><polygon points="169.4,213.9 174.7,212.3 172.5,208.3 167.3,209.9" fill="#a5a5a5"/><polygon points="174.3,212.4 179.5,210.8 177.3,206.9 172.1,208.4" fill="#a3a3a3"/><polygon points="179.1,210.9 184.2,209.4 182.0,205.5 176.9,207.0" fill="#a0a0a0"/><polygon points="183.8,209.5 188.9,207.9 186.7,204.0 181.6,205.6" fill="#9c9c9c"/><polygon points="188.6,208.1 193.6,206.5 191.3,202.6 186.3,204.2" fill="#999999"/><polygon points="193.2,206.6 198.3,205.1 195.9,201.3 190.9,202.8" fill="#959595"/><polygon points="197.9,205.2 202.9,203.7 200.5,199.9 195.6,201.4" fill="#919191"/><polygon points="202.5,203.8 207.5,202.3 205.0,198.5 200.1,200.0" fill="#8f8f8f"/><polygon points="207.1,202.4 212.0,200.9 209.5,197.2 204.7,198.6" fill="#8e8e8e"/><polygon points="211.6,201.0 216.5,199.5 214.0,195.8 209.2,197.3" fill="#8f8f8f"/><polygon points="216.1,199.6 221.0,198.2 218.4,194.5 213.6,195.9" fill="#999999"/><polygon points="220.6,198.3 225.4,196.8 222.8,193.1 218.1,194.6" fill="#a6a6a6"/><polygon points="74.1,238.4 80.1,236.5 78.9,232.0 73.0,233.8" fill="#ababab"/><polygon points="79.7,236.7 85.6,234.9 84.4,230.4 78.5,232.2" fill="#adadad"/><polygon points="85.2,235.0 91.1,233.2 89.8,228.8 83.9,230.5" fill="#acacac"/><polygon points="90.7,233.4 96.5,231.6 95.1,227.2 89.3,228.9" fill="#ababab"/><polygon points="96.1,231.7 101.9,230.0 100.5,225.6 94.7,227.3" fill="#aaaaaa"/><polygon points="112.1,226.9 138.3,219.0 136.5,214.9 110.6,222.6" fill="#a8a8a8"/><polygon points="137.9,219.1 158.2,213.0 156.2,209.0 136.1,215.0" fill="#a7a7a7"/><polygon points="157.8,213.1 163.0,211.5 161.0,207.5 155.8,209.1" fill="#a6a6a6"/><polygon points="162.7,211.6 167.9,210.1 165.8,206.1 160.6,207.7" fill="#a5a5a5"/><polygon points="167.5,210.2 172.7,208.6 170.6,204.7 165.4,206.2" fill="#a4a4a4"/><polygon points="172.3,208.7 177.4,207.2 175.3,203.3 170.2,204.8" fill="#a1a1a1"/><polygon points="177.1,207.3 182.2,205.7 180.0,201.9 174.9,203.4" fill="#9e9e9e"/><polygon points="181.8,205.9 186.8,204.3 184.6,200.5 179.6,202.0" fill="#9b9b9b"/><polygon points="186.5,204.4 191.5,202.9 189.2,199.1 184.2,200.6" fill="#979797"/><polygon points="191.1,203.0 196.1,201.5 193.8,197.8 188.9,199.3" fill="#949494"/><polygon points="195.7,201.6 200.7,200.2 198.3,196.4 193.4,197.9" fill="#919191"/><polygon points="200.3,200.3 209.7,197.4 207.3,193.8 198.0,196.5" fill="#8f8f8f"/><polygon points="209.4,197.5 214.2,196.1 211.7,192.4 206.9,193.9" fill="#929292"/><polygon points="213.8,196.2 218.6,194.7 216.1,191.1 211.4,192.5" fill="#9e9e9e"/><polygon points="218.3,194.8 223.0,193.4 220.5,189.8 215.8,191.2" fill="#a8a8a8"/><polygon points="73.1,234.1 79.0,232.4 77.8,227.9 71.9,229.7" fill="#aaaaaa"/><polygon points="78.6,232.5 84.5,230.7 83.2,226.3 77.4,228.1" fill="#ababab"/><polygon points="84.0,230.9 89.9,229.1 88.6,224.8 82.8,226.5" fill="#aaaaaa"/><polygon points="105.4,224.5 131.6,216.7 129.9,212.6 104.0,220.2" fill="#a8a8a8"/><polygon points="131.2,216.8 151.5,210.7 149.6,206.8 129.5,212.7" fill="#a7a7a7"/><polygon points="151.1,210.8 161.2,207.8 159.2,203.9 149.2,206.9" fill="#a6a6a6"/><polygon points="160.8,208.0 166.0,206.4 164.0,202.5 158.8,204.1" fill="#a4a4a4"/><polygon points="165.6,206.5 170.7,205.0 168.7,201.2 163.6,202.7" fill="#a2a2a2"/><polygon points="170.4,205.1 175.4,203.6 173.4,199.8 168.3,201.3" fill="#a0a0a0"/><polygon points="175.1,203.7 180.1,202.2 178.0,198.4 173.0,199.9" fill="#9d9d9d"/><polygon points="179.8,202.3 184.8,200.8 182.6,197.1 177.6,198.5" fill="#9a9a9a"/><polygon points="184.4,200.9 189.4,199.4 187.2,195.7 182.2,197.2" fill="#969696"/><polygon points="189.0,199.5 194.0,198.1 191.7,194.4 186.8,195.8" fill="#939393"/><polygon points="193.6,198.2 198.5,196.7 196.2,193.0 191.3,194.5" fill="#919191"/><polygon points="198.1,196.8 207.5,194.0 205.1,190.4 195.8,193.2" fill="#909090"/><polygon points="207.1,194.1 211.9,192.7 209.5,189.1 204.8,190.5" fill="#979797"/><polygon points="211.6,192.8 216.3,191.4 213.9,187.8 209.2,189.2" fill="#a4a4a4"/><polygon points="98.9,222.1 125.0,214.4 123.4,210.3 97.5,217.9" fill="#a8a8a8"/><polygon points="124.6,214.5 144.9,208.5 143.1,204.6 123.0,210.4" fill="#a7a7a7"/><polygon points="144.5,208.6 159.4,204.2 157.4,200.4 142.7,204.7" fill="#a6a6a6"/><polygon points="159.0,204.3 164.1,202.8 162.1,199.0 157.0,200.5" fill="#a4a4a4"/><polygon points="163.7,202.9 168.8,201.4 166.8,197.7 161.8,199.2" fill="#a1a1a1"/><polygon points="168.4,201.5 173.5,200.1 171.4,196.3 166.4,197.8" fill="#9f9f9f"/><polygon points="173.1,200.2 178.2,198.7 176.1,195.0 171.1,196.4" fill="#9c9c9c"/><polygon points="177.8,198.8 182.8,197.3 180.6,193.7 175.7,195.1" fill="#999999"/><polygon points="182.4,197.4 187.3,196.0 185.2,192.3 180.3,193.8" fill="#969696"/><polygon points="187.0,196.1 191.9,194.6 189.7,191.0 184.8,192.4" fill="#939393"/><polygon points="191.5,194.7 196.4,193.3 194.1,189.7 189.3,191.1" fill="#929292"/><polygon points="196.0,193.4 200.8,192.0 198.6,188.4 193.8,189.8" fill="#919191"/><polygon points="200.5,192.1 205.3,190.7 203.0,187.2 198.2,188.5" fill="#949494"/><polygon points="204.9,190.8 209.7,189.4 207.3,185.9 202.6,187.3" fill="#9e9e9e"/><polygon points="209.3,189.5 214.1,188.1 211.7,184.6 207.0,186.0" fill="#a8a8a8"/><polygon points="97.6,218.2 123.5,210.6 121.9,206.7 96.3,214.1" fill="#a8a8a8"/><polygon points="123.1,210.7 143.2,204.9 141.4,201.1 121.5,206.8" fill="#a7a7a7"/><polygon points="142.8,205.0 157.6,200.7 155.7,197.0 141.0,201.2" fill="#a6a6a6"/><polygon points="157.2,200.8 162.3,199.3 160.3,195.6 155.3,197.1" fill="#a3a3a3"/><polygon points="161.9,199.4 167.0,198.0 165.0,194.3 160.0,195.7" fill="#a1a1a1"/><polygon points="166.6,198.1 171.6,196.6 169.6,192.9 164.6,194.4" fill="#9e9e9e"/><polygon points="171.2,196.7 176.2,195.3 174.2,191.6 169.2,193.1" fill="#9b9b9b"/><polygon points="175.8,195.4 180.8,193.9 178.7,190.3 173.8,191.7" fill="#989898"/><polygon points="180.4,194.0 185.3,192.6 183.2,189.0 178.3,190.4" fill="#969696"/><polygon points="185.0,192.7 189.8,191.3 187.6,187.7 182.8,189.1" fill="#949494"/><polygon points="189.5,191.4 194.3,190.0 192.1,186.5 187.3,187.8" fill="#939393"/><polygon points="193.9,190.1 198.7,188.7 196.5,185.2 191.7,186.6" fill="#949494"/><polygon points="198.4,188.8 203.1,187.4 200.8,183.9 196.1,185.3" fill="#9b9b9b"/><polygon points="202.8,187.5 207.5,186.1 205.2,182.7 200.5,184.0" fill="#a5a5a5"/><polygon points="96.4,214.4 122.0,207.0 120.5,203.1 95.0,210.3" fill="#a8a8a8"/><polygon points="121.6,207.1 141.6,201.3 139.8,197.6 120.1,203.2" fill="#a7a7a7"/><polygon points="141.2,201.5 155.8,197.2 153.9,193.6 139.5,197.7" fill="#a6a6a6"/><polygon points="155.4,197.3 160.5,195.9 158.6,192.2 153.6,193.7" fill="#a4a4a4"/><polygon points="160.1,196.0 165.1,194.5 163.2,190.9 158.2,192.3" fill="#a0a0a0"/><polygon points="164.8,194.7 169.7,193.2 167.8,189.6 162.8,191.0" fill="#9e9e9e"/><polygon points="169.4,193.3 174.3,191.9 172.3,188.3 167.4,189.7" fill="#9b9b9b"/><polygon points="173.9,192.0 178.8,190.6 176.8,187.1 171.9,188.4" fill="#989898"/><polygon points="178.5,190.7 183.3,189.3 181.2,185.8 176.4,187.2" fill="#979797"/><polygon points="183.0,189.4 192.2,186.7 190.1,183.3 180.9,185.9" fill="#959595"/><polygon points="191.9,186.8 196.6,185.5 194.4,182.0 189.7,183.4" fill="#9a9a9a"/><polygon points="196.3,185.6 201.0,184.2 198.8,180.8 194.1,182.1" fill="#a3a3a3"/><polygon points="100.2,209.2 120.6,203.4 119.1,199.6 98.9,205.3" fill="#a8a8a8"/><polygon points="120.2,203.5 144.7,196.5 143.0,192.9 118.7,199.7" fill="#a7a7a7"/><polygon points="144.3,196.6 154.1,193.8 152.3,190.2 142.6,193.0" fill="#a6a6a6"/><polygon points="153.7,193.9 158.7,192.5 156.9,188.9 151.9,190.3" fill="#a4a4a4"/><polygon points="158.4,192.6 163.3,191.2 161.4,187.7 156.5,189.0" fill="#a1a1a1"/><polygon points="163.0,191.3 167.9,189.9 166.0,186.4 161.1,187.8" fill="#9e9e9e"/><polygon points="167.5,190.0 172.4,188.6 170.4,185.1 165.6,186.5" fill="#9c9c9c"/><polygon points="172.1,188.7 176.9,187.3 174.9,183.8 170.1,185.2" fill="#9a9a9a"/><polygon points="176.6,187.4 181.4,186.0 179.3,182.6 174.6,183.9" fill="#989898"/><polygon points="181.0,186.1 185.8,184.8 183.7,181.4 179.0,182.7" fill="#979797"/><polygon points="185.5,184.9 190.2,183.5 188.1,180.1 183.4,181.5" fill="#9b9b9b"/><polygon points="189.9,183.6 194.6,182.3 192.4,178.9 187.8,180.2" fill="#a2a2a2"/><polygon points="194.3,182.4 198.9,181.0 196.7,177.7 192.1,179.0" fill="#a8a8a8"/><polygon points="99.0,205.6 124.0,198.5 122.5,194.8 97.7,201.7" fill="#a8a8a8"/><polygon points="123.7,198.6 152.4,190.5 150.6,187.0 122.1,194.9" fill="#a7a7a7"/><polygon points="152.0,190.6 157.0,189.2 155.2,185.7 150.2,187.1" fill="#a5a5a5"/><polygon points="156.6,189.3 161.6,187.9 159.7,184.4 154.8,185.8" fill="#a2a2a2"/><polygon points="161.2,188.0 166.1,186.6 164.2,183.2 159.3,184.5" fill="#9f9f9f"/><polygon points="165.7,186.7 170.6,185.4 168.7,181.9 163.8,183.3" fill="#9d9d9d"/><polygon points="170.2,185.5 179.5,182.9 177.5,179.5 168.3,182.0" fill="#9b9b9b"/><polygon points="179.1,183.0 183.9,181.6 181.8,178.3 177.1,179.6" fill="#9e9e9e"/><polygon points="183.5,181.7 188.3,180.4 186.2,177.0 181.5,178.4" fill="#a3a3a3"/><polygon points="187.9,180.5 192.6,179.2 190.5,175.8 185.8,177.1" fill="#a8a8a8"/><polygon points="102.8,200.6 132.1,192.4 130.5,188.8 101.4,196.9" fill="#a8a8a8"/><polygon points="131.8,192.5 150.7,187.2 149.0,183.8 130.2,188.9" fill="#a7a7a7"/><polygon points="150.4,187.3 155.3,186.0 153.5,182.5 148.6,183.9" fill="#a6a6a6"/><polygon points="154.9,186.1 159.8,184.7 158.0,181.3 153.1,182.6" fill="#a3a3a3"/><polygon points="159.5,184.8 164.3,183.4 162.5,180.0 157.6,181.4" fill="#a0a0a0"/><polygon points="164.0,183.5 173.2,180.9 171.3,177.6 162.1,180.1" fill="#9f9f9f"/><polygon points="172.9,181.0 177.6,179.7 175.6,176.4 170.9,177.7" fill="#a1a1a1"/><polygon points="177.3,179.8 182.0,178.5 180.0,175.2 175.3,176.5" fill="#a5a5a5"/><polygon points="111.3,194.5 149.1,184.0 147.4,180.6 109.9,190.8" fill="#a8a8a8"/><polygon points="148.7,184.1 153.6,182.8 151.9,179.4 147.0,180.7" fill="#a7a7a7"/><polygon points="153.3,182.9 158.1,181.5 156.3,178.2 151.5,179.5" fill="#a4a4a4"/><polygon points="157.8,181.6 167.0,179.1 165.1,175.8 156.0,178.3" fill="#a3a3a3"/><polygon points="166.7,179.2 171.4,177.9 169.5,174.6 164.8,175.9" fill="#a5a5a5"/><polygon points="171.1,177.9 175.8,176.6 173.8,173.4 169.2,174.7" fill="#a8a8a8"/><polygon points="119.5,188.5 152.0,179.6 150.3,176.3 118.0,185.0" fill="#a8a8a8"/><polygon points="151.6,179.7 160.9,177.2 159.1,173.9 149.9,176.4" fill="#a7a7a7"/><polygon points="160.5,177.3 165.3,176.0 163.4,172.8 158.7,174.0" fill="#a8a8a8"/></g><polygon points="213.0,141.0 40.0,185.0 78.5,389.0 327.0,285.0" fill="none" stroke="#f3962c" stroke-width="1.3" stroke-linejoin="round"/></svg>
<div style="left:330.2px;top:12px;width:304.3px;height:422.3px;background:#454545;border-radius:2.5px;"></div>
<div style="left:330.2px;top:12px;width:304.3px;height:11.7px;background:#404040;border-radius:2.5px 2.5px 0 0;"></div>
<svg style="left:0;top:0" width="768" height="480" shape-rendering="crispEdges"><rect x="379.2" y="119.6" width="194.9" height="194.9" fill="#8080ff"/><rect x="452.29" y="150.05" width="6.24" height="6.24" fill="#8079ff"/><rect x="458.38" y="150.05" width="6.24" height="6.24" fill="#806efe"/><rect x="464.47" y="150.05" width="6.24" height="6.24" fill="#8064fc"/><rect x="470.56" y="150.05" width="6.24" height="6.24" fill="#805dfa"/><rect x="476.65" y="150.05" width="6.24" height="6.24" fill="#805bfa"/><rect x="482.74" y="150.05" width="6.24" height="6.24" fill="#7f5efa"/><rect x="488.83" y="150.05" width="6.24" height="6.24" fill="#7e65fc"/><rect x="494.92" y="150.05" width="6.24" height="6.24" fill="#7d6efe"/><rect x="501.01" y="150.05" width="6.24" height="6.24" fill="#7e78ff"/><rect x="507.10" y="150.05" width="6.24" height="6.24" fill="#807fff"/><rect x="434.02" y="156.14" width="6.24" height="6.24" fill="#817eff"/><rect x="440.11" y="156.14" width="6.24" height="6.24" fill="#846efe"/><rect x="446.20" y="156.14" width="6.24" height="6.24" fill="#8658f8"/><rect x="452.29" y="156.14" width="6.24" height="6.24" fill="#8546f1"/><rect x="458.38" y="156.14" width="6.24" height="6.24" fill="#823cec"/><rect x="464.47" y="156.14" width="12.33" height="6.24" fill="#803beb"/><rect x="476.65" y="156.14" width="6.24" height="6.24" fill="#7f3ceb"/><rect x="482.74" y="156.14" width="6.24" height="6.24" fill="#7d3dec"/><rect x="488.83" y="156.14" width="6.24" height="6.24" fill="#7a40ed"/><rect x="494.92" y="156.14" width="6.24" height="6.24" fill="#7544f0"/><rect x="501.01" y="156.14" width="6.24" height="6.24" fill="#734ff4"/><rect x="507.10" y="156.14" width="6.24" height="6.24" fill="#735efa"/><rect x="513.19" y="156.14" width="6.24" height="6.24" fill="#776ffd"/><rect x="519.28" y="156.14" width="6.24" height="6.24" fill="#7d7bff"/><rect x="427.93" y="162.23" width="6.24" height="6.24" fill="#8774fe"/><rect x="434.02" y="162.23" width="6.24" height="6.24" fill="#905cf9"/><rect x="440.11" y="162.23" width="6.24" height="6.24" fill="#9248f0"/><rect x="446.20" y="162.23" width="6.24" height="6.24" fill="#8d41ee"/><rect x="452.29" y="162.23" width="6.24" height="6.24" fill="#873eec"/><rect x="458.38" y="162.23" width="6.24" height="6.24" fill="#833ceb"/><rect x="464.47" y="162.23" width="12.33" height="6.24" fill="#803beb"/><rect x="476.65" y="162.23" width="6.24" height="6.24" fill="#7f3ceb"/><rect x="482.74" y="162.23" width="6.24" height="6.24" fill="#7c3eed"/><rect x="488.83" y="162.23" width="6.24" height="6.24" fill="#7841ee"/><rect x="494.92" y="162.23" width="6.24" height="6.24" fill="#7245ef"/><rect x="501.01" y="162.23" width="6.24" height="6.24" fill="#6d49f1"/><rect x="507.10" y="162.23" width="6.24" height="6.24" fill="#674df2"/><rect x="513.19" y="162.23" width="6.24" height="6.24" fill="#6555f4"/><rect x="519.28" y="162.23" width="6.24" height="6.24" fill="#6a64fa"/><rect x="525.38" y="162.23" width="6.24" height="6.24" fill="#7574fe"/><rect x="531.47" y="162.23" width="6.24" height="6.24" fill="#7e7eff"/><rect x="415.74" y="168.32" width="6.24" height="6.24" fill="#817fff"/><rect x="421.83" y="168.32" width="6.24" height="6.24" fill="#8f70fd"/><rect x="427.93" y="168.32" width="6.24" height="6.24" fill="#9d5af6"/><rect x="434.02" y="168.32" width="6.24" height="6.24" fill="#9e4df0"/><rect x="440.11" y="168.32" width="6.24" height="6.24" fill="#9848f0"/><rect x="446.20" y="168.32" width="6.24" height="6.24" fill="#9144ee"/><rect x="452.29" y="168.32" width="6.24" height="6.24" fill="#8a40ed"/><rect x="458.38" y="168.32" width="6.24" height="6.24" fill="#843dec"/><rect x="464.47" y="168.32" width="6.24" height="6.24" fill="#813beb"/><rect x="470.56" y="168.32" width="6.24" height="6.24" fill="#803beb"/><rect x="476.65" y="168.32" width="6.24" height="6.24" fill="#7f3ceb"/><rect x="482.74" y="168.32" width="6.24" height="6.24" fill="#7b3fed"/><rect x="488.83" y="168.32" width="6.24" height="6.24" fill="#7543ef"/><rect x="494.92" y="168.32" width="6.24" height="6.24" fill="#6e48f0"/><rect x="501.01" y="168.32" width="6.24" height="6.24" fill="#684df2"/><rect x="507.10" y="168.32" width="6.24" height="6.24" fill="#6352f2"/><rect x="513.19" y="168.32" width="6.24" height="6.24" fill="#5e56f3"/><rect x="519.28" y="168.32" width="6.24" height="6.24" fill="#5b5af3"/><rect x="525.38" y="168.32" width="6.24" height="6.24" fill="#5f64f8"/><rect x="531.47" y="168.32" width="6.24" height="6.24" fill="#6d72fd"/><rect x="537.56" y="168.32" width="6.24" height="6.24" fill="#7b7dff"/><rect x="409.65" y="174.42" width="6.24" height="6.24" fill="#817fff"/><rect x="415.74" y="174.42" width="6.24" height="6.24" fill="#9373fd"/><rect x="421.83" y="174.42" width="6.24" height="6.24" fill="#a761f5"/><rect x="427.93" y="174.42" width="6.24" height="6.24" fill="#a958f1"/><rect x="434.02" y="174.42" width="6.24" height="6.24" fill="#a453f1"/><rect x="440.11" y="174.42" width="6.24" height="6.24" fill="#9e4df0"/><rect x="446.20" y="174.42" width="6.24" height="6.24" fill="#9647ef"/><rect x="452.29" y="174.42" width="6.24" height="6.24" fill="#8e42ee"/><rect x="458.38" y="174.42" width="6.24" height="6.24" fill="#863eec"/><rect x="464.47" y="174.42" width="6.24" height="6.24" fill="#813beb"/><rect x="470.56" y="174.42" width="6.24" height="6.24" fill="#803beb"/><rect x="476.65" y="174.42" width="6.24" height="6.24" fill="#7e3dec"/><rect x="482.74" y="174.42" width="6.24" height="6.24" fill="#7841ee"/><rect x="488.83" y="174.42" width="6.24" height="6.24" fill="#7046f0"/><rect x="494.92" y="174.42" width="6.24" height="6.24" fill="#694cf1"/><rect x="501.01" y="174.42" width="6.24" height="6.24" fill="#6252f3"/><rect x="507.10" y="174.42" width="6.24" height="6.24" fill="#5d57f3"/><rect x="513.19" y="174.42" width="6.24" height="6.24" fill="#595cf3"/><rect x="519.28" y="174.42" width="6.24" height="6.24" fill="#5660f4"/><rect x="525.38" y="174.42" width="6.24" height="6.24" fill="#5464f4"/><rect x="531.47" y="174.42" width="6.24" height="6.24" fill="#596bf7"/><rect x="537.56" y="174.42" width="6.24" height="6.24" fill="#6a75fd"/><rect x="543.65" y="174.42" width="6.24" height="6.24" fill="#7b7eff"/><rect x="409.65" y="180.51" width="6.24" height="6.24" fill="#9179fe"/><rect x="415.74" y="180.51" width="6.24" height="6.24" fill="#aa6cf6"/><rect x="421.83" y="180.51" width="6.24" height="6.24" fill="#b264f1"/><rect x="427.93" y="180.51" width="6.24" height="6.24" fill="#af60f1"/><rect x="434.02" y="180.51" width="6.24" height="6.24" fill="#ab5bf1"/><rect x="440.11" y="180.51" width="6.24" height="6.24" fill="#a655f1"/><rect x="446.20" y="180.51" width="6.24" height="6.24" fill="#9e4df1"/><rect x="452.29" y="180.51" width="6.24" height="6.24" fill="#9446ef"/><rect x="458.38" y="180.51" width="6.24" height="6.24" fill="#8a3fed"/><rect x="464.47" y="180.51" width="6.24" height="6.24" fill="#823ceb"/><rect x="470.56" y="180.51" width="6.24" height="6.24" fill="#803beb"/><rect x="476.65" y="180.51" width="6.24" height="6.24" fill="#7c3eec"/><rect x="482.74" y="180.51" width="6.24" height="6.24" fill="#7444ef"/><rect x="488.83" y="180.51" width="6.24" height="6.24" fill="#6a4bf1"/><rect x="494.92" y="180.51" width="6.24" height="6.24" fill="#6253f3"/><rect x="501.01" y="180.51" width="6.24" height="6.24" fill="#5b59f3"/><rect x="507.10" y="180.51" width="6.24" height="6.24" fill="#575ff4"/><rect x="513.19" y="180.51" width="6.24" height="6.24" fill="#5463f4"/><rect x="519.28" y="180.51" width="6.24" height="6.24" fill="#5167f3"/><rect x="525.38" y="180.51" width="6.24" height="6.24" fill="#506af3"/><rect x="531.47" y="180.51" width="6.24" height="6.24" fill="#4f6cf3"/><rect x="537.56" y="180.51" width="6.24" height="6.24" fill="#5872f8"/><rect x="543.65" y="180.51" width="6.24" height="6.24" fill="#6c7afd"/><rect x="549.74" y="180.51" width="6.24" height="6.24" fill="#7d7fff"/><rect x="403.56" y="186.60" width="6.24" height="6.24" fill="#897eff"/><rect x="409.65" y="186.60" width="6.24" height="6.24" fill="#a476f9"/><rect x="415.74" y="186.60" width="6.24" height="6.24" fill="#b76ff1"/><rect x="421.83" y="186.60" width="6.24" height="6.24" fill="#b76cf1"/><rect x="427.93" y="186.60" width="6.24" height="6.24" fill="#b569f1"/><rect x="434.02" y="186.60" width="6.24" height="6.24" fill="#b264f1"/><rect x="440.11" y="186.60" width="6.24" height="6.24" fill="#ae5ff1"/><rect x="446.20" y="186.60" width="6.24" height="6.24" fill="#a857f1"/><rect x="452.29" y="186.60" width="6.24" height="6.24" fill="#9f4ef1"/><rect x="458.38" y="186.60" width="6.24" height="6.24" fill="#9144ee"/><rect x="464.47" y="186.60" width="6.24" height="6.24" fill="#843dec"/><rect x="470.56" y="186.60" width="6.24" height="6.24" fill="#803dec"/><rect x="476.65" y="186.60" width="6.24" height="6.24" fill="#7941ee"/><rect x="482.74" y="186.60" width="6.24" height="6.24" fill="#6c49f1"/><rect x="488.83" y="186.60" width="6.24" height="6.24" fill="#6154f3"/><rect x="494.92" y="186.60" width="6.24" height="6.24" fill="#595cf3"/><rect x="501.01" y="186.60" width="6.24" height="6.24" fill="#5463f4"/><rect x="507.10" y="186.60" width="6.24" height="6.24" fill="#5168f3"/><rect x="513.19" y="186.60" width="6.24" height="6.24" fill="#4f6bf3"/><rect x="519.28" y="186.60" width="6.24" height="6.24" fill="#4e6ef3"/><rect x="525.38" y="186.60" width="6.24" height="6.24" fill="#4d70f3"/><rect x="531.47" y="186.60" width="6.24" height="6.24" fill="#4c72f3"/><rect x="537.56" y="186.60" width="6.24" height="6.24" fill="#4d74f4"/><rect x="543.65" y="186.60" width="6.24" height="6.24" fill="#5d79fa"/><rect x="549.74" y="186.60" width="6.24" height="6.24" fill="#737dfe"/><rect x="397.47" y="192.69" width="6.24" height="6.24" fill="#8180ff"/><rect x="403.56" y="192.69" width="6.24" height="6.24" fill="#967dfd"/><rect x="409.65" y="192.69" width="6.24" height="6.24" fill="#b278f4"/><rect x="415.74" y="192.69" width="6.24" height="6.24" fill="#bb75f0"/><rect x="421.83" y="192.69" width="6.24" height="6.24" fill="#ba74f0"/><rect x="427.93" y="192.69" width="6.24" height="6.24" fill="#ba72f0"/><rect x="434.02" y="192.69" width="6.24" height="6.24" fill="#b86ff1"/><rect x="440.11" y="192.69" width="6.24" height="6.24" fill="#b66bf1"/><rect x="446.20" y="192.69" width="6.24" height="6.24" fill="#b365f1"/><rect x="452.29" y="192.69" width="6.24" height="6.24" fill="#ac5cf2"/><rect x="458.38" y="192.69" width="6.24" height="6.24" fill="#9b55f4"/><rect x="464.47" y="192.69" width="6.24" height="6.24" fill="#8753f7"/><rect x="470.56" y="192.69" width="6.24" height="6.24" fill="#8057f8"/><rect x="476.65" y="192.69" width="6.24" height="6.24" fill="#765af9"/><rect x="482.74" y="192.69" width="6.24" height="6.24" fill="#655ef7"/><rect x="488.83" y="192.69" width="6.24" height="6.24" fill="#5763f5"/><rect x="494.92" y="192.69" width="6.24" height="6.24" fill="#5069f3"/><rect x="501.01" y="192.69" width="6.24" height="6.24" fill="#4e6ef3"/><rect x="507.10" y="192.69" width="6.24" height="6.24" fill="#4c71f3"/><rect x="513.19" y="192.69" width="6.24" height="6.24" fill="#4b74f3"/><rect x="519.28" y="192.69" width="6.24" height="6.24" fill="#4b75f3"/><rect x="525.38" y="192.69" width="6.24" height="6.24" fill="#4a77f3"/><rect x="531.47" y="192.69" width="6.24" height="6.24" fill="#4a78f3"/><rect x="537.56" y="192.69" width="6.24" height="6.24" fill="#4a79f3"/><rect x="543.65" y="192.69" width="6.24" height="6.24" fill="#537af7"/><rect x="549.74" y="192.69" width="6.24" height="6.24" fill="#687dfd"/><rect x="555.83" y="192.69" width="6.24" height="6.24" fill="#7b80ff"/><rect x="397.47" y="198.78" width="6.24" height="6.24" fill="#8680ff"/><rect x="403.56" y="198.78" width="6.24" height="6.24" fill="#a17efb"/><rect x="409.65" y="198.78" width="6.24" height="6.24" fill="#b97df1"/><rect x="415.74" y="198.78" width="6.24" height="6.24" fill="#bc7cf0"/><rect x="421.83" y="198.78" width="12.33" height="6.24" fill="#bc7bf0"/><rect x="434.02" y="198.78" width="6.24" height="6.24" fill="#bc7af0"/><rect x="440.11" y="198.78" width="6.24" height="6.24" fill="#bc78f0"/><rect x="446.20" y="198.78" width="6.24" height="6.24" fill="#bb76f0"/><rect x="452.29" y="198.78" width="6.24" height="6.24" fill="#b273f4"/><rect x="458.38" y="198.78" width="6.24" height="6.24" fill="#9e73fb"/><rect x="464.47" y="198.78" width="6.24" height="6.24" fill="#8973fe"/><rect x="470.56" y="198.78" width="6.24" height="6.24" fill="#8076ff"/><rect x="476.65" y="198.78" width="6.24" height="6.24" fill="#7577fe"/><rect x="482.74" y="198.78" width="6.24" height="6.24" fill="#6677fc"/><rect x="488.83" y="198.78" width="6.24" height="6.24" fill="#5677f8"/><rect x="494.92" y="198.78" width="6.24" height="6.24" fill="#4c78f3"/><rect x="501.01" y="198.78" width="6.24" height="6.24" fill="#4a79f3"/><rect x="507.10" y="198.78" width="6.24" height="6.24" fill="#4a7bf3"/><rect x="513.19" y="198.78" width="6.24" height="6.24" fill="#497bf3"/><rect x="519.28" y="198.78" width="6.24" height="6.24" fill="#497cf3"/><rect x="525.38" y="198.78" width="18.42" height="6.24" fill="#497df3"/><rect x="543.65" y="198.78" width="6.24" height="6.24" fill="#4d7ef4"/><rect x="549.74" y="198.78" width="6.24" height="6.24" fill="#607ffb"/><rect x="555.83" y="198.78" width="6.24" height="6.24" fill="#7680ff"/><rect x="397.47" y="204.87" width="6.24" height="6.24" fill="#8b80ff"/><rect x="403.56" y="204.87" width="6.24" height="6.24" fill="#a781f9"/><rect x="409.65" y="204.87" width="6.24" height="6.24" fill="#bb81f0"/><rect x="415.74" y="204.87" width="12.33" height="6.24" fill="#bc81f0"/><rect x="427.93" y="204.87" width="18.42" height="6.24" fill="#bc82f0"/><rect x="446.20" y="204.87" width="6.24" height="6.24" fill="#bb83f1"/><rect x="452.29" y="204.87" width="6.24" height="6.24" fill="#ae83f6"/><rect x="458.38" y="204.87" width="6.24" height="6.24" fill="#9983fd"/><rect x="464.47" y="204.87" width="6.24" height="6.24" fill="#8682ff"/><rect x="470.56" y="204.87" width="6.24" height="6.24" fill="#8081ff"/><rect x="476.65" y="204.87" width="6.24" height="6.24" fill="#7981ff"/><rect x="482.74" y="204.87" width="6.24" height="6.24" fill="#6b82fd"/><rect x="488.83" y="204.87" width="6.24" height="6.24" fill="#5b82f9"/><rect x="494.92" y="204.87" width="6.24" height="6.24" fill="#4e82f5"/><rect x="501.01" y="204.87" width="12.33" height="6.24" fill="#4a82f3"/><rect x="513.19" y="204.87" width="30.60" height="6.24" fill="#4a81f3"/><rect x="543.65" y="204.87" width="6.24" height="6.24" fill="#4c81f4"/><rect x="549.74" y="204.87" width="6.24" height="6.24" fill="#5c80fa"/><rect x="555.83" y="204.87" width="6.24" height="6.24" fill="#7180fe"/><rect x="561.92" y="204.87" width="6.24" height="6.24" fill="#7f80ff"/><rect x="397.47" y="210.96" width="6.24" height="6.24" fill="#8d81fe"/><rect x="403.56" y="210.96" width="6.24" height="6.24" fill="#a884f8"/><rect x="409.65" y="210.96" width="6.24" height="6.24" fill="#ba86f1"/><rect x="415.74" y="210.96" width="6.24" height="6.24" fill="#ba87f1"/><rect x="421.83" y="210.96" width="6.24" height="6.24" fill="#b988f1"/><rect x="427.93" y="210.96" width="6.24" height="6.24" fill="#b989f1"/><rect x="434.02" y="210.96" width="6.24" height="6.24" fill="#b88bf2"/><rect x="440.11" y="210.96" width="6.24" height="6.24" fill="#b68ef2"/><rect x="446.20" y="210.96" width="6.24" height="6.24" fill="#b391f3"/><rect x="452.29" y="210.96" width="6.24" height="6.24" fill="#a693f7"/><rect x="458.38" y="210.96" width="6.24" height="6.24" fill="#9392fc"/><rect x="464.47" y="210.96" width="6.24" height="6.24" fill="#848efe"/><rect x="470.56" y="210.96" width="6.24" height="6.24" fill="#808bff"/><rect x="476.65" y="210.96" width="6.24" height="6.24" fill="#7a8cfe"/><rect x="482.74" y="210.96" width="6.24" height="6.24" fill="#6e8efd"/><rect x="488.83" y="210.96" width="6.24" height="6.24" fill="#5f8ffa"/><rect x="494.92" y="210.96" width="6.24" height="6.24" fill="#538ef6"/><rect x="501.01" y="210.96" width="6.24" height="6.24" fill="#4e8cf4"/><rect x="507.10" y="210.96" width="6.24" height="6.24" fill="#4d8af4"/><rect x="513.19" y="210.96" width="6.24" height="6.24" fill="#4c88f4"/><rect x="519.28" y="210.96" width="6.24" height="6.24" fill="#4c87f4"/><rect x="525.38" y="210.96" width="12.33" height="6.24" fill="#4b86f3"/><rect x="537.56" y="210.96" width="6.24" height="6.24" fill="#4b85f3"/><rect x="543.65" y="210.96" width="6.24" height="6.24" fill="#4c84f4"/><rect x="549.74" y="210.96" width="6.24" height="6.24" fill="#5b83f9"/><rect x="555.83" y="210.96" width="6.24" height="6.24" fill="#6f81fe"/><rect x="561.92" y="210.96" width="6.24" height="6.24" fill="#7e80ff"/><rect x="397.47" y="217.05" width="6.24" height="6.24" fill="#8d82fe"/><rect x="403.56" y="217.05" width="6.24" height="6.24" fill="#a587f9"/><rect x="409.65" y="217.05" width="6.24" height="6.24" fill="#b68cf2"/><rect x="415.74" y="217.05" width="6.24" height="6.24" fill="#b68df2"/><rect x="421.83" y="217.05" width="6.24" height="6.24" fill="#b58ff2"/><rect x="427.93" y="217.05" width="6.24" height="6.24" fill="#b492f3"/><rect x="434.02" y="217.05" width="6.24" height="6.24" fill="#b195f3"/><rect x="440.11" y="217.05" width="6.24" height="6.24" fill="#ae99f4"/><rect x="446.20" y="217.05" width="6.24" height="6.24" fill="#a99ff4"/><rect x="452.29" y="217.05" width="6.24" height="6.24" fill="#9ea4f6"/><rect x="458.38" y="217.05" width="6.24" height="6.24" fill="#8fa4f9"/><rect x="464.47" y="217.05" width="6.24" height="6.24" fill="#83a0fb"/><rect x="470.56" y="217.05" width="6.24" height="6.24" fill="#809dfc"/><rect x="476.65" y="217.05" width="6.24" height="6.24" fill="#7b9dfc"/><rect x="482.74" y="217.05" width="6.24" height="6.24" fill="#719efa"/><rect x="488.83" y="217.05" width="6.24" height="6.24" fill="#649df8"/><rect x="494.92" y="217.05" width="6.24" height="6.24" fill="#599bf6"/><rect x="501.01" y="217.05" width="6.24" height="6.24" fill="#5596f5"/><rect x="507.10" y="217.05" width="6.24" height="6.24" fill="#5292f5"/><rect x="513.19" y="217.05" width="6.24" height="6.24" fill="#5090f5"/><rect x="519.28" y="217.05" width="6.24" height="6.24" fill="#4f8df4"/><rect x="525.38" y="217.05" width="6.24" height="6.24" fill="#4e8cf4"/><rect x="531.47" y="217.05" width="6.24" height="6.24" fill="#4d8bf4"/><rect x="537.56" y="217.05" width="6.24" height="6.24" fill="#4d8af4"/><rect x="543.65" y="217.05" width="6.24" height="6.24" fill="#4f88f5"/><rect x="549.74" y="217.05" width="6.24" height="6.24" fill="#5d85fa"/><rect x="555.83" y="217.05" width="6.24" height="6.24" fill="#7082fe"/><rect x="561.92" y="217.05" width="6.24" height="6.24" fill="#7e80ff"/><rect x="397.47" y="223.14" width="6.24" height="6.24" fill="#8a83ff"/><rect x="403.56" y="223.14" width="6.24" height="6.24" fill="#a08afb"/><rect x="409.65" y="223.14" width="6.24" height="6.24" fill="#b091f4"/><rect x="415.74" y="223.14" width="6.24" height="6.24" fill="#b294f3"/><rect x="421.83" y="223.14" width="6.24" height="6.24" fill="#b096f3"/><rect x="427.93" y="223.14" width="6.24" height="6.24" fill="#ae9af4"/><rect x="434.02" y="223.14" width="6.24" height="6.24" fill="#aa9ef4"/><rect x="440.11" y="223.14" width="6.24" height="6.24" fill="#a5a3f4"/><rect x="446.20" y="223.14" width="6.24" height="6.24" fill="#9ea9f4"/><rect x="452.29" y="223.14" width="6.24" height="6.24" fill="#95aff4"/><rect x="458.38" y="223.14" width="6.24" height="6.24" fill="#8ab2f4"/><rect x="464.47" y="223.14" width="6.24" height="6.24" fill="#82b1f5"/><rect x="470.56" y="223.14" width="6.24" height="6.24" fill="#80aff6"/><rect x="476.65" y="223.14" width="6.24" height="6.24" fill="#7daef6"/><rect x="482.74" y="223.14" width="6.24" height="6.24" fill="#74adf6"/><rect x="488.83" y="223.14" width="6.24" height="6.24" fill="#6aaaf6"/><rect x="494.92" y="223.14" width="6.24" height="6.24" fill="#62a4f6"/><rect x="501.01" y="223.14" width="6.24" height="6.24" fill="#5c9ff6"/><rect x="507.10" y="223.14" width="6.24" height="6.24" fill="#589af6"/><rect x="513.19" y="223.14" width="6.24" height="6.24" fill="#5597f5"/><rect x="519.28" y="223.14" width="6.24" height="6.24" fill="#5394f5"/><rect x="525.38" y="223.14" width="6.24" height="6.24" fill="#5292f5"/><rect x="531.47" y="223.14" width="6.24" height="6.24" fill="#5190f5"/><rect x="537.56" y="223.14" width="6.24" height="6.24" fill="#508ef5"/><rect x="543.65" y="223.14" width="6.24" height="6.24" fill="#538cf6"/><rect x="549.74" y="223.14" width="6.24" height="6.24" fill="#6187fb"/><rect x="555.83" y="223.14" width="6.24" height="6.24" fill="#7283fe"/><rect x="561.92" y="223.14" width="6.24" height="6.24" fill="#7f80ff"/><rect x="397.47" y="229.23" width="6.24" height="6.24" fill="#8682ff"/><rect x="403.56" y="229.23" width="6.24" height="6.24" fill="#988afc"/><rect x="409.65" y="229.23" width="6.24" height="6.24" fill="#a894f7"/><rect x="415.74" y="229.23" width="6.24" height="6.24" fill="#ad9af4"/><rect x="421.83" y="229.23" width="6.24" height="6.24" fill="#ab9df4"/><rect x="427.93" y="229.23" width="6.24" height="6.24" fill="#a7a1f4"/><rect x="434.02" y="229.23" width="6.24" height="6.24" fill="#a3a5f4"/><rect x="440.11" y="229.23" width="6.24" height="6.24" fill="#9daaf4"/><rect x="446.20" y="229.23" width="6.24" height="6.24" fill="#96aff4"/><rect x="452.29" y="229.23" width="6.24" height="6.24" fill="#8eb3f3"/><rect x="458.38" y="229.23" width="6.24" height="6.24" fill="#86b7f2"/><rect x="464.47" y="229.23" width="6.24" height="6.24" fill="#81b9f1"/><rect x="470.56" y="229.23" width="6.24" height="6.24" fill="#80b9f2"/><rect x="476.65" y="229.23" width="6.24" height="6.24" fill="#7eb7f2"/><rect x="482.74" y="229.23" width="6.24" height="6.24" fill="#78b4f3"/><rect x="488.83" y="229.23" width="6.24" height="6.24" fill="#70b0f5"/><rect x="494.92" y="229.23" width="6.24" height="6.24" fill="#69abf5"/><rect x="501.01" y="229.23" width="6.24" height="6.24" fill="#63a6f6"/><rect x="507.10" y="229.23" width="6.24" height="6.24" fill="#5ea1f6"/><rect x="513.19" y="229.23" width="6.24" height="6.24" fill="#5b9df6"/><rect x="519.28" y="229.23" width="6.24" height="6.24" fill="#589af6"/><rect x="525.38" y="229.23" width="6.24" height="6.24" fill="#5697f6"/><rect x="531.47" y="229.23" width="6.24" height="6.24" fill="#5495f5"/><rect x="537.56" y="229.23" width="6.24" height="6.24" fill="#5393f5"/><rect x="543.65" y="229.23" width="6.24" height="6.24" fill="#598ef8"/><rect x="549.74" y="229.23" width="6.24" height="6.24" fill="#6788fc"/><rect x="555.83" y="229.23" width="6.24" height="6.24" fill="#7683ff"/><rect x="397.47" y="235.32" width="6.24" height="6.24" fill="#8281ff"/><rect x="403.56" y="235.32" width="6.24" height="6.24" fill="#8f89fe"/><rect x="409.65" y="235.32" width="6.24" height="6.24" fill="#9e94fa"/><rect x="415.74" y="235.32" width="6.24" height="6.24" fill="#a79ef5"/><rect x="421.83" y="235.32" width="6.24" height="6.24" fill="#a5a3f4"/><rect x="427.93" y="235.32" width="6.24" height="6.24" fill="#a1a6f4"/><rect x="434.02" y="235.32" width="6.24" height="6.24" fill="#9caaf4"/><rect x="440.11" y="235.32" width="6.24" height="6.24" fill="#97aef4"/><rect x="446.20" y="235.32" width="6.24" height="6.24" fill="#90b2f4"/><rect x="452.29" y="235.32" width="6.24" height="6.24" fill="#8ab6f3"/><rect x="458.38" y="235.32" width="6.24" height="6.24" fill="#84b8f2"/><rect x="464.47" y="235.32" width="6.24" height="6.24" fill="#81b9f1"/><rect x="470.56" y="235.32" width="6.24" height="6.24" fill="#80b9f1"/><rect x="476.65" y="235.32" width="6.24" height="6.24" fill="#7fb8f2"/><rect x="482.74" y="235.32" width="6.24" height="6.24" fill="#7bb6f3"/><rect x="488.83" y="235.32" width="6.24" height="6.24" fill="#75b3f4"/><rect x="494.92" y="235.32" width="6.24" height="6.24" fill="#6faff5"/><rect x="501.01" y="235.32" width="6.24" height="6.24" fill="#69aaf5"/><rect x="507.10" y="235.32" width="6.24" height="6.24" fill="#64a6f6"/><rect x="513.19" y="235.32" width="6.24" height="6.24" fill="#60a3f6"/><rect x="519.28" y="235.32" width="6.24" height="6.24" fill="#5d9ff6"/><rect x="525.38" y="235.32" width="6.24" height="6.24" fill="#5a9cf6"/><rect x="531.47" y="235.32" width="6.24" height="6.24" fill="#589af6"/><rect x="537.56" y="235.32" width="6.24" height="6.24" fill="#5996f7"/><rect x="543.65" y="235.32" width="6.24" height="6.24" fill="#618ffa"/><rect x="549.74" y="235.32" width="6.24" height="6.24" fill="#6e88fe"/><rect x="555.83" y="235.32" width="6.24" height="6.24" fill="#7b82ff"/><rect x="403.56" y="241.41" width="6.24" height="6.24" fill="#8886ff"/><rect x="409.65" y="241.41" width="6.24" height="6.24" fill="#9491fc"/><rect x="415.74" y="241.41" width="6.24" height="6.24" fill="#9d9df8"/><rect x="421.83" y="241.41" width="6.24" height="6.24" fill="#a0a7f5"/><rect x="427.93" y="241.41" width="6.24" height="6.24" fill="#9cabf4"/><rect x="434.02" y="241.41" width="6.24" height="6.24" fill="#97aef4"/><rect x="440.11" y="241.41" width="6.24" height="6.24" fill="#92b1f4"/><rect x="446.20" y="241.41" width="6.24" height="6.24" fill="#8cb4f3"/><rect x="452.29" y="241.41" width="6.24" height="6.24" fill="#87b7f2"/><rect x="458.38" y="241.41" width="6.24" height="6.24" fill="#83b9f2"/><rect x="464.47" y="241.41" width="12.33" height="6.24" fill="#80b9f1"/><rect x="476.65" y="241.41" width="6.24" height="6.24" fill="#7fb8f2"/><rect x="482.74" y="241.41" width="6.24" height="6.24" fill="#7cb7f3"/><rect x="488.83" y="241.41" width="6.24" height="6.24" fill="#78b4f3"/><rect x="494.92" y="241.41" width="6.24" height="6.24" fill="#73b1f4"/><rect x="501.01" y="241.41" width="6.24" height="6.24" fill="#6eaef5"/><rect x="507.10" y="241.41" width="6.24" height="6.24" fill="#69aaf5"/><rect x="513.19" y="241.41" width="6.24" height="6.24" fill="#65a7f6"/><rect x="519.28" y="241.41" width="6.24" height="6.24" fill="#61a4f6"/><rect x="525.38" y="241.41" width="6.24" height="6.24" fill="#5ea1f6"/><rect x="531.47" y="241.41" width="6.24" height="6.24" fill="#5d9df6"/><rect x="537.56" y="241.41" width="6.24" height="6.24" fill="#6196f9"/><rect x="543.65" y="241.41" width="6.24" height="6.24" fill="#6a8efc"/><rect x="549.74" y="241.41" width="6.24" height="6.24" fill="#7686fe"/><rect x="555.83" y="241.41" width="6.24" height="6.24" fill="#7e81ff"/><rect x="403.56" y="247.50" width="6.24" height="6.24" fill="#8282ff"/><rect x="409.65" y="247.50" width="6.24" height="6.24" fill="#8a8bfe"/><rect x="415.74" y="247.50" width="6.24" height="6.24" fill="#9297fb"/><rect x="421.83" y="247.50" width="6.24" height="6.24" fill="#97a4f8"/><rect x="427.93" y="247.50" width="6.24" height="6.24" fill="#97adf5"/><rect x="434.02" y="247.50" width="6.24" height="6.24" fill="#93b1f4"/><rect x="440.11" y="247.50" width="6.24" height="6.24" fill="#8eb3f3"/><rect x="446.20" y="247.50" width="6.24" height="6.24" fill="#89b6f3"/><rect x="452.29" y="247.50" width="6.24" height="6.24" fill="#85b8f2"/><rect x="458.38" y="247.50" width="6.24" height="6.24" fill="#82b9f2"/><rect x="464.47" y="247.50" width="12.33" height="6.24" fill="#80b9f1"/><rect x="476.65" y="247.50" width="6.24" height="6.24" fill="#7fb9f2"/><rect x="482.74" y="247.50" width="6.24" height="6.24" fill="#7db7f2"/><rect x="488.83" y="247.50" width="6.24" height="6.24" fill="#7ab5f3"/><rect x="494.92" y="247.50" width="6.24" height="6.24" fill="#76b3f4"/><rect x="501.01" y="247.50" width="6.24" height="6.24" fill="#71b0f5"/><rect x="507.10" y="247.50" width="6.24" height="6.24" fill="#6dadf5"/><rect x="513.19" y="247.50" width="6.24" height="6.24" fill="#69aaf5"/><rect x="519.28" y="247.50" width="6.24" height="6.24" fill="#65a7f6"/><rect x="525.38" y="247.50" width="6.24" height="6.24" fill="#63a3f6"/><rect x="531.47" y="247.50" width="6.24" height="6.24" fill="#659cf9"/><rect x="537.56" y="247.50" width="6.24" height="6.24" fill="#6b93fc"/><rect x="543.65" y="247.50" width="6.24" height="6.24" fill="#738afe"/><rect x="549.74" y="247.50" width="6.24" height="6.24" fill="#7c83ff"/><rect x="409.65" y="253.59" width="6.24" height="6.24" fill="#8384ff"/><rect x="415.74" y="253.59" width="6.24" height="6.24" fill="#898efe"/><rect x="421.83" y="253.59" width="6.24" height="6.24" fill="#8e9bfb"/><rect x="427.93" y="253.59" width="6.24" height="6.24" fill="#90a7f8"/><rect x="434.02" y="253.59" width="6.24" height="6.24" fill="#8fb0f5"/><rect x="440.11" y="253.59" width="6.24" height="6.24" fill="#8bb5f3"/><rect x="446.20" y="253.59" width="6.24" height="6.24" fill="#87b7f2"/><rect x="452.29" y="253.59" width="6.24" height="6.24" fill="#84b8f2"/><rect x="458.38" y="253.59" width="6.24" height="6.24" fill="#82b9f1"/><rect x="464.47" y="253.59" width="12.33" height="6.24" fill="#80b9f1"/><rect x="476.65" y="253.59" width="6.24" height="6.24" fill="#80b9f2"/><rect x="482.74" y="253.59" width="6.24" height="6.24" fill="#7eb8f2"/><rect x="488.83" y="253.59" width="6.24" height="6.24" fill="#7bb6f3"/><rect x="494.92" y="253.59" width="6.24" height="6.24" fill="#78b4f3"/><rect x="501.01" y="253.59" width="6.24" height="6.24" fill="#74b2f4"/><rect x="507.10" y="253.59" width="6.24" height="6.24" fill="#70b0f5"/><rect x="513.19" y="253.59" width="6.24" height="6.24" fill="#6cadf5"/><rect x="519.28" y="253.59" width="6.24" height="6.24" fill="#6aa8f7"/><rect x="525.38" y="253.59" width="6.24" height="6.24" fill="#6ba0f9"/><rect x="531.47" y="253.59" width="6.24" height="6.24" fill="#6e97fc"/><rect x="537.56" y="253.59" width="6.24" height="6.24" fill="#748dfe"/><rect x="543.65" y="253.59" width="6.24" height="6.24" fill="#7b85ff"/><rect x="549.74" y="253.59" width="6.24" height="6.24" fill="#7f80ff"/><rect x="415.74" y="259.68" width="6.24" height="6.24" fill="#8385ff"/><rect x="421.83" y="259.68" width="6.24" height="6.24" fill="#868ffe"/><rect x="427.93" y="259.68" width="6.24" height="6.24" fill="#899afc"/><rect x="434.02" y="259.68" width="6.24" height="6.24" fill="#89a6f9"/><rect x="440.11" y="259.68" width="6.24" height="6.24" fill="#88aff6"/><rect x="446.20" y="259.68" width="6.24" height="6.24" fill="#86b5f3"/><rect x="452.29" y="259.68" width="6.24" height="6.24" fill="#83b8f2"/><rect x="458.38" y="259.68" width="6.24" height="6.24" fill="#81b9f1"/><rect x="464.47" y="259.68" width="12.33" height="6.24" fill="#80b9f1"/><rect x="476.65" y="259.68" width="6.24" height="6.24" fill="#80b9f2"/><rect x="482.74" y="259.68" width="6.24" height="6.24" fill="#7eb8f2"/><rect x="488.83" y="259.68" width="6.24" height="6.24" fill="#7cb7f3"/><rect x="494.92" y="259.68" width="6.24" height="6.24" fill="#79b5f3"/><rect x="501.01" y="259.68" width="6.24" height="6.24" fill="#76b3f4"/><rect x="507.10" y="259.68" width="6.24" height="6.24" fill="#73aff5"/><rect x="513.19" y="259.68" width="6.24" height="6.24" fill="#72a8f8"/><rect x="519.28" y="259.68" width="6.24" height="6.24" fill="#71a0fa"/><rect x="525.38" y="259.68" width="6.24" height="6.24" fill="#7397fc"/><rect x="531.47" y="259.68" width="6.24" height="6.24" fill="#778efe"/><rect x="537.56" y="259.68" width="6.24" height="6.24" fill="#7b86ff"/><rect x="543.65" y="259.68" width="6.24" height="6.24" fill="#7f81ff"/><rect x="421.83" y="265.77" width="6.24" height="6.24" fill="#8184ff"/><rect x="427.93" y="265.77" width="6.24" height="6.24" fill="#838cfe"/><rect x="434.02" y="265.77" width="6.24" height="6.24" fill="#8496fd"/><rect x="440.11" y="265.77" width="6.24" height="6.24" fill="#849ffb"/><rect x="446.20" y="265.77" width="6.24" height="6.24" fill="#83a7f9"/><rect x="452.29" y="265.77" width="6.24" height="6.24" fill="#82aef7"/><rect x="458.38" y="265.77" width="6.24" height="6.24" fill="#81b2f5"/><rect x="464.47" y="265.77" width="6.24" height="6.24" fill="#80b4f4"/><rect x="470.56" y="265.77" width="12.33" height="6.24" fill="#80b5f3"/><rect x="482.74" y="265.77" width="6.24" height="6.24" fill="#7fb4f4"/><rect x="488.83" y="265.77" width="6.24" height="6.24" fill="#7db2f5"/><rect x="494.92" y="265.77" width="6.24" height="6.24" fill="#7baff6"/><rect x="501.01" y="265.77" width="6.24" height="6.24" fill="#79aaf8"/><rect x="507.10" y="265.77" width="6.24" height="6.24" fill="#78a4fa"/><rect x="513.19" y="265.77" width="6.24" height="6.24" fill="#789dfb"/><rect x="519.28" y="265.77" width="6.24" height="6.24" fill="#7894fd"/><rect x="525.38" y="265.77" width="6.24" height="6.24" fill="#7a8cfe"/><rect x="531.47" y="265.77" width="6.24" height="6.24" fill="#7d85ff"/><rect x="537.56" y="265.77" width="6.24" height="6.24" fill="#8081ff"/><rect x="427.93" y="271.87" width="6.24" height="6.24" fill="#8082ff"/><rect x="434.02" y="271.87" width="6.24" height="6.24" fill="#8187ff"/><rect x="440.11" y="271.87" width="6.24" height="6.24" fill="#828efe"/><rect x="446.20" y="271.87" width="6.24" height="6.24" fill="#8195fd"/><rect x="452.29" y="271.87" width="6.24" height="6.24" fill="#819bfc"/><rect x="458.38" y="271.87" width="6.24" height="6.24" fill="#80a0fb"/><rect x="464.47" y="271.87" width="6.24" height="6.24" fill="#80a4fa"/><rect x="470.56" y="271.87" width="12.33" height="6.24" fill="#80a6f9"/><rect x="482.74" y="271.87" width="6.24" height="6.24" fill="#7fa5f9"/><rect x="488.83" y="271.87" width="6.24" height="6.24" fill="#7ea3fa"/><rect x="494.92" y="271.87" width="6.24" height="6.24" fill="#7d9ffb"/><rect x="501.01" y="271.87" width="6.24" height="6.24" fill="#7d9afc"/><rect x="507.10" y="271.87" width="6.24" height="6.24" fill="#7c94fd"/><rect x="513.19" y="271.87" width="6.24" height="6.24" fill="#7d8efe"/><rect x="519.28" y="271.87" width="6.24" height="6.24" fill="#7e88ff"/><rect x="525.38" y="271.87" width="6.24" height="6.24" fill="#7f83ff"/><rect x="440.11" y="277.96" width="6.24" height="6.24" fill="#8082ff"/><rect x="446.20" y="277.96" width="6.24" height="6.24" fill="#8085ff"/><rect x="452.29" y="277.96" width="6.24" height="6.24" fill="#808aff"/><rect x="458.38" y="277.96" width="6.24" height="6.24" fill="#808dfe"/><rect x="464.47" y="277.96" width="6.24" height="6.24" fill="#8090fe"/><rect x="470.56" y="277.96" width="6.24" height="6.24" fill="#8092fe"/><rect x="476.65" y="277.96" width="6.24" height="6.24" fill="#8093fe"/><rect x="482.74" y="277.96" width="6.24" height="6.24" fill="#8092fe"/><rect x="488.83" y="277.96" width="6.24" height="6.24" fill="#7f90fe"/><rect x="494.92" y="277.96" width="6.24" height="6.24" fill="#7f8efe"/><rect x="501.01" y="277.96" width="6.24" height="6.24" fill="#7f8aff"/><rect x="507.10" y="277.96" width="6.24" height="6.24" fill="#7f86ff"/><rect x="513.19" y="277.96" width="6.24" height="6.24" fill="#7f83ff"/><rect x="458.38" y="284.05" width="6.24" height="6.24" fill="#8081ff"/><rect x="464.47" y="284.05" width="6.24" height="6.24" fill="#8082ff"/><rect x="470.56" y="284.05" width="6.24" height="6.24" fill="#8083ff"/><rect x="476.65" y="284.05" width="6.24" height="6.24" fill="#8084ff"/><rect x="482.74" y="284.05" width="12.33" height="6.24" fill="#8083ff"/><rect x="494.92" y="284.05" width="6.24" height="6.24" fill="#8081ff"/></svg>
<div style="left:0px;top:436px;width:634.5px;height:34px;background:#2b2b2b;border-radius:2.5px;"></div>
<div style="left:0px;top:436px;width:634.5px;height:12px;background:#404040;border-radius:2.5px 2.5px 0 0;"></div>
<div style="left:636.1px;top:12px;width:131.9px;height:146px;background:#282828;border-radius:2.5px;"></div>
<div style="left:636.1px;top:12px;width:131.9px;height:11.7px;background:#404040;border-radius:2.5px 2.5px 0 0;"></div>
<div style="left:636.1px;top:159.5px;width:131.9px;height:310.5px;background:#353535;border-radius:2.5px;"></div>
<div style="left:636.1px;top:159.5px;width:131.9px;height:12px;background:#404040;border-radius:2.5px 2.5px 0 0;"></div>
<div style="left:636.1px;top:171.5px;width:13px;height:298.5px;background:#2b2b2b;border-radius:0 0 0 2.5px;"></div>
<div style="left:0px;top:471px;width:768px;height:9px;background:#232323;"></div>
<svg style="left:4.2px;top:2.8px" width="8.2" height="6.6" viewBox="0 0 8.2 6.6" ><circle cx="5" cy="3.5" r="1.7" fill="none" stroke="#e2e2e2" stroke-width="1.15"/><path d="M0.5 4.9L3.1 2.9M0.8 2.5H4.6M2.7 0.8L4.7 2.3" stroke="#e2e2e2" stroke-width="0.8" fill="none" stroke-linecap="round"/></svg>
<span class="t" style="top:1.3px;color:#cfcfcf;font-size:5.3px;left:16px;">File</span>
<span class="t" style="top:1.3px;color:#cfcfcf;font-size:5.3px;left:31px;">Edit</span>
<span class="t" style="top:1.3px;color:#cfcfcf;font-size:5.3px;left:47px;">Render</span>
<span class="t" style="top:1.3px;color:#cfcfcf;font-size:5.3px;left:71px;">Window</span>
<span class="t" style="top:1.3px;color:#cfcfcf;font-size:5.3px;left:97px;">Help</span>
<div style="left:119.8px;top:2.6px;width:24.2px;height:9.9px;background:#424242;border-radius:1.8px 1.8px 0 0;"></div>
<span class="t" style="top:2px;color:#ffffff;font-size:5.3px;left:81.9px;width:100px;text-align:center;">Layout</span>
<div style="left:145.4px;top:2.6px;width:29.6px;height:8.9px;background:#2c2c2c;border-radius:1.8px 1.8px 0 0;"></div>
<span class="t" style="top:2px;color:#a9a9a9;font-size:5.3px;left:110.2px;width:100px;text-align:center;">Modeling</span>
<div style="left:176.2px;top:2.6px;width:29.8px;height:8.9px;background:#2c2c2c;border-radius:1.8px 1.8px 0 0;"></div>
<span class="t" style="top:2px;color:#a9a9a9;font-size:5.3px;left:141.1px;width:100px;text-align:center;">Sculpting</span>
<div style="left:207.4px;top:2.6px;width:33.2px;height:8.9px;background:#2c2c2c;border-radius:1.8px 1.8px 0 0;"></div>
<span class="t" style="top:2px;color:#a9a9a9;font-size:5.3px;left:174px;width:100px;text-align:center;">UV Editing</span>
<div style="left:242px;top:2.6px;width:38.8px;height:8.9px;background:#2c2c2c;border-radius:1.8px 1.8px 0 0;"></div>
<span class="t" style="top:2px;color:#a9a9a9;font-size:5.3px;left:211.4px;width:100px;text-align:center;">Texture Paint</span>
<div style="left:282px;top:2.6px;width:27.8px;height:8.9px;background:#2c2c2c;border-radius:1.8px 1.8px 0 0;"></div>
<span class="t" style="top:2px;color:#a9a9a9;font-size:5.3px;left:245.9px;width:100px;text-align:center;">Shading</span>
<div style="left:311px;top:2.6px;width:32px;height:8.9px;background:#2c2c2c;border-radius:1.8px 1.8px 0 0;"></div>
<span class="t" style="top:2px;color:#a9a9a9;font-size:5.3px;left:277px;width:100px;text-align:center;">Animation</span>
<div style="left:344.6px;top:2.6px;width:32.4px;height:8.9px;background:#2c2c2c;border-radius:1.8px 1.8px 0 0;"></div>
<span class="t" style="top:2px;color:#a9a9a9;font-size:5.3px;left:310.8px;width:100px;text-align:center;">Rendering</span>
<div style="left:378.4px;top:2.6px;width:38.2px;height:8.9px;background:#2c2c2c;border-radius:1.8px 1.8px 0 0;"></div>
<span class="t" style="top:2px;color:#a9a9a9;font-size:5.3px;left:347.5px;width:100px;text-align:center;">Compositing</span>
<div style="left:418px;top:2.6px;width:28.6px;height:8.9px;background:#2c2c2c;border-radius:1.8px 1.8px 0 0;"></div>
<span class="t" style="top:2px;color:#a9a9a9;font-size:5.3px;left:382.3px;width:100px;text-align:center;">Scripting</span>
<div style="left:448.4px;top:2.6px;width:8px;height:8.9px;background:#2c2c2c;border-radius:1.8px 1.8px 0 0;"></div>
<span class="t" style="top:1.8px;color:#a9a9a9;font-size:7px;left:402.4px;width:100px;text-align:center;">+</span>
<div style="left:587.3px;top:1.6px;width:86.2px;height:9px;background:#2e2e2e;border-radius:1.8px;"></div>
<div style="left:601.3px;top:1.6px;width:53.7px;height:9px;background:#1d1d1d;"></div>
<span class="t" style="top:1.3px;color:#d0d0d0;font-size:5.3px;left:604.3px;">Scene</span>
<div style="left:655px;top:1.6px;width:9.3px;height:9px;background:#545454;"></div>
<svg style="left:656.3px;top:2.8px" width="7" height="7" viewBox="0 0 7 7" ><path d="M1 1.8H4.2V6.2H1Z" fill="none" stroke="#ddd" stroke-width="0.7"/><path d="M2.6 0.6H5.2L6.2 1.6V4.8H4.6" fill="none" stroke="#ddd" stroke-width="0.7"/></svg>
<svg style="left:666.2px;top:3.8px" width="5" height="5" viewBox="0 0 5 5" ><path d="M0.8 0.8L4.2 4.2M4.2 0.8L0.8 4.2" stroke="#5c5c5c" stroke-width="0.8"/></svg>

<svg style="left:596.6px;top:5.2px" width="3.4" height="2.4" viewBox="0 0 3.4 2.4" ><path d="M0.5 0.6L1.7 1.68L2.9 0.6" stroke="#bdbdbd" stroke-width="0.8" fill="none"/></svg>
<div style="left:677.6px;top:1.6px;width:87px;height:9px;background:#2e2e2e;border-radius:1.8px;"></div>
<div style="left:691.6px;top:1.6px;width:54.5px;height:9px;background:#1d1d1d;"></div>
<span class="t" style="top:1.3px;color:#d0d0d0;font-size:5.3px;left:694.6px;">View Layer</span>
<div style="left:746.1px;top:1.6px;width:9.3px;height:9px;background:#545454;"></div>
<svg style="left:747.4px;top:2.8px" width="7" height="7" viewBox="0 0 7 7" ><path d="M1 1.8H4.2V6.2H1Z" fill="none" stroke="#ddd" stroke-width="0.7"/><path d="M2.6 0.6H5.2L6.2 1.6V4.8H4.6" fill="none" stroke="#ddd" stroke-width="0.7"/></svg>
<svg style="left:757.3px;top:3.8px" width="5" height="5" viewBox="0 0 5 5" ><path d="M0.8 0.8L4.2 4.2M4.2 0.8L0.8 4.2" stroke="#5c5c5c" stroke-width="0.8"/></svg>

<svg style="left:686.9px;top:5.2px" width="3.4" height="2.4" viewBox="0 0 3.4 2.4" ><path d="M0.5 0.6L1.7 1.68L2.9 0.6" stroke="#bdbdbd" stroke-width="0.8" fill="none"/></svg>
<svg style="left:589.5px;top:2.6px" width="7.5" height="7.5" viewBox="0 0 7.5 7.5" ><path d="M1.2 6.4L2.6 1.2L4 6.4Z" fill="#cfcfcf"/><circle cx="5.2" cy="5" r="1.7" fill="#cfcfcf"/><circle cx="4.6" cy="1.6" r="0.9" fill="#cfcfcf"/></svg>
<svg style="left:680px;top:2.8px" width="7.5" height="7.5" viewBox="0 0 7.5 7.5" ><rect x="0.4" y="0.6" width="6.4" height="6" rx="1" fill="#8a8a8a"/><path d="M1.4 5.6L3.6 1.8L5.8 5.6Z" fill="#e8e8e8"/></svg>
<div style="left:0px;top:12px;width:328.5px;height:12.6px;background:rgba(66,66,66,0.97);border-radius:2.5px 2.5px 0 0;"></div>
<div style="left:4.5px;top:13.9px;width:13.8px;height:8.5px;background:#2d2d2d;border-radius:1.8px;"></div>
<svg style="left:6.3px;top:14.7px" width="7" height="7" viewBox="0 0 7 7" ><path d="M0.6 3.4H4M2.3 1.7V5.1M3.4 4.6H6.4M4.9 3.2V6.2" stroke="#cfcfcf" stroke-width="0.9"/><circle cx="4.6" cy="1.6" r="1.2" fill="#cfcfcf"/></svg>
<svg style="left:13.6px;top:17.2px" width="3.4" height="2.4" viewBox="0 0 3.4 2.4" ><path d="M0.5 0.6L1.7 1.68L2.9 0.6" stroke="#bbb" stroke-width="0.8" fill="none"/></svg>
<svg style="left:22.8px;top:12.8px" width="11.6" height="11.6" viewBox="0 0 11.6 11.6" ><rect x="0.7" y="0.7" width="10.2" height="10.2" rx="1.2" fill="none" stroke="#e09a48" stroke-width="0.8" stroke-dasharray="1.6 1"/><path d="M4.1 2.6V8.4L8.5 5.9Z" fill="#f2f2f2"/></svg>
<div style="left:41.2px;top:13.9px;width:8.5px;height:8.5px;background:#4772b3;border-radius:1.8px 0 0 1.8px;"></div>
<div style="left:49.9px;top:13.9px;width:8.5px;height:8.5px;background:#545454;"></div>
<div style="left:58.6px;top:13.9px;width:8.5px;height:8.5px;background:#545454;"></div>
<div style="left:67.3px;top:13.9px;width:8.5px;height:8.5px;background:#545454;"></div>
<div style="left:76px;top:13.9px;width:8.5px;height:8.5px;background:#545454;border-radius:0 1.8px 1.8px 0;"></div>
<svg style="left:41.2px;top:13.9px" width="8.5" height="8.5" viewBox="0 0 8.5 8.5" ><rect x="1.3" y="1.5" width="5.9" height="5.6" fill="none" stroke="#e9eef7" stroke-width="0.7" stroke-dasharray="1 0.6"/></svg>
<svg style="left:49.9px;top:13.9px" width="8.5" height="8.5" viewBox="0 0 8.5 8.5" ><rect x="1.2" y="2.8" width="4" height="4" fill="#ddd"/><rect x="3.3" y="1.3" width="4" height="4" fill="#cfcfcf"/></svg>
<svg style="left:58.6px;top:13.9px" width="8.5" height="8.5" viewBox="0 0 8.5 8.5" ><rect x="1.2" y="1.4" width="5.8" height="5.8" fill="none" stroke="#ccc" stroke-width="0.6" stroke-dasharray="1 0.7"/><rect x="3.6" y="1.3" width="3.6" height="3.6" fill="#e0e0e0"/></svg>
<svg style="left:67.3px;top:13.9px" width="8.5" height="8.5" viewBox="0 0 8.5 8.5" ><rect x="1.5" y="1.6" width="5.6" height="5.4" fill="#e0e0e0"/><rect x="3" y="3" width="2.6" height="2.4" fill="#444"/></svg>
<svg style="left:76px;top:13.9px" width="8.5" height="8.5" viewBox="0 0 8.5 8.5" ><rect x="1.3" y="1.5" width="5.9" height="5.6" fill="none" stroke="#ccc" stroke-width="0.6" stroke-dasharray="1 0.7"/><rect x="2.8" y="2.9" width="3" height="2.8" fill="#d8d8d8"/></svg>
<div style="left:107px;top:13.9px;width:35.6px;height:8.5px;background:#2d2d2d;border-radius:1.8px;"></div>
<svg style="left:109px;top:14.9px" width="7" height="7" viewBox="0 0 7 7" ><path d="M1.2 0.6V5.4H6.2" stroke="#d8d8d8" stroke-width="0.8" fill="none"/><path d="M1.2 5.4L3.6 3" stroke="#d8d8d8" stroke-width="0.7"/><circle cx="1.2" cy="1" r="0.8" fill="#d8d8d8"/><circle cx="5.9" cy="5.4" r="0.8" fill="#d8d8d8"/></svg>
<span class="t" style="top:13.3px;color:#d4d4d4;font-size:5.3px;left:118.3px;">Global</span>
<svg style="left:137.9px;top:17.3px" width="3.4" height="2.4" viewBox="0 0 3.4 2.4" ><path d="M0.5 0.6L1.7 1.68L2.9 0.6" stroke="#bbb" stroke-width="0.8" fill="none"/></svg>
<div style="left:146.2px;top:13.9px;width:13.2px;height:8.5px;background:#2d2d2d;border-radius:1.8px;"></div>
<svg style="left:147.6px;top:14.9px" width="7.4" height="7" viewBox="0 0 7.4 7" ><ellipse cx="2.5" cy="4.2" rx="1.5" ry="2.1" transform="rotate(35 2.5 4.2)" fill="none" stroke="#d8d8d8" stroke-width="0.8"/><ellipse cx="4.8" cy="2.8" rx="1.5" ry="2.1" transform="rotate(35 4.8 2.8)" fill="none" stroke="#d8d8d8" stroke-width="0.8"/></svg>
<svg style="left:155.1px;top:17.3px" width="3.4" height="2.4" viewBox="0 0 3.4 2.4" ><path d="M0.5 0.6L1.7 1.68L2.9 0.6" stroke="#bbb" stroke-width="0.8" fill="none"/></svg>
<div style="left:163.2px;top:13.9px;width:8.3px;height:8.5px;background:#545454;border-radius:1.8px 0 0 1.8px;"></div>
<svg style="left:163.2px;top:13.9px" width="8.3" height="8.5" viewBox="0 0 8.3 8.5" ><path d="M2 2.2L6.2 6.4M6.2 2.2L2 6.4M4.1 1.6V7M1.4 4.3H6.8" stroke="#808080" stroke-width="0.7"/></svg>
<div style="left:171.5px;top:13.9px;width:14.2px;height:8.5px;background:#2d2d2d;border-radius:0 1.8px 1.8px 0;"></div>
<svg style="left:172.3px;top:14.5px" width="8" height="7.6" viewBox="0 0 8 7.6" ><path d="M1 4.6H7M1 3.2V6M7 3.2V6" stroke="#d8d8d8" stroke-width="0.8" fill="none"/><rect x="5.4" y="0.4" width="1.8" height="1.8" fill="#f2f2f2"/></svg>
<svg style="left:180.9px;top:17.3px" width="3.4" height="2.4" viewBox="0 0 3.4 2.4" ><path d="M0.5 0.6L1.7 1.68L2.9 0.6" stroke="#bbb" stroke-width="0.8" fill="none"/></svg>
<div style="left:189.2px;top:13.9px;width:7.6px;height:8.5px;background:#545454;border-radius:1.8px 0 0 1.8px;"></div>
<svg style="left:189.2px;top:13.9px" width="7.6" height="8.5" viewBox="0 0 7.6 8.5" ><circle cx="3.8" cy="4.3" r="2.3" fill="none" stroke="#8a8a8a" stroke-width="0.7"/><circle cx="3.8" cy="4.3" r="0.9" fill="#8a8a8a"/></svg>
<div style="left:196.8px;top:13.9px;width:12.8px;height:8.5px;background:#3a3a3a;border-radius:0 1.8px 1.8px 0;"></div>
<svg style="left:197.4px;top:14.7px" width="8" height="7" viewBox="0 0 8 7" ><path d="M0.6 6.2C2.6 6.2 2.8 0.8 3.8 0.8C4.8 0.8 5 6.2 7 6.2" stroke="#8f8f8f" stroke-width="0.8" fill="none"/></svg>
<svg style="left:205.4px;top:17.4px" width="3.2" height="2.2" viewBox="0 0 3.2 2.2" ><path d="M0.5 0.55L1.6 1.54L2.7 0.55" stroke="#6a6a6a" stroke-width="0.8" fill="none"/></svg>
<div style="left:296px;top:13.9px;width:28.6px;height:8.5px;background:#2d2d2d;border-radius:1.8px;"></div>
<span class="t" style="top:13.3px;color:#d4d4d4;font-size:5.3px;left:299px;">Options</span>
<svg style="left:319.3px;top:17.3px" width="3.4" height="2.4" viewBox="0 0 3.4 2.4" ><path d="M0.5 0.6L1.7 1.68L2.9 0.6" stroke="#bbb" stroke-width="0.8" fill="none"/></svg>
<div style="left:5px;top:25.8px;width:48.6px;height:8.5px;background:#2d2d2d;border-radius:1.8px;"></div>
<svg style="left:6.6px;top:26.8px" width="7" height="7" viewBox="0 0 7 7" ><rect x="1.6" y="1.4" width="3.8" height="3.8" fill="#e0e0e0"/><path d="M0.5 2V0.6H2M5 0.6H6.5V2M6.5 4.8V6.2H5M2 6.2H0.5V4.8" stroke="#bdbdbd" stroke-width="0.7" fill="none"/></svg>
<span class="t" style="top:25.2px;color:#d4d4d4;font-size:5.3px;left:16px;">Object Mode</span>
<svg style="left:48.9px;top:29.2px" width="3.4" height="2.4" viewBox="0 0 3.4 2.4" ><path d="M0.5 0.6L1.7 1.68L2.9 0.6" stroke="#bbb" stroke-width="0.8" fill="none"/></svg>
<div style="left:57px;top:25.8px;width:16.4px;height:8.5px;background:rgba(40,40,40,0.72);border-radius:1.8px;"></div>
<span class="t" style="top:25.2px;color:#d4d4d4;font-size:5.3px;left:15.2px;width:100px;text-align:center;">View</span>
<div style="left:76px;top:25.8px;width:19.2px;height:8.5px;background:rgba(40,40,40,0.72);border-radius:1.8px;"></div>
<span class="t" style="top:25.2px;color:#d4d4d4;font-size:5.3px;left:35.6px;width:100px;text-align:center;">Select</span>
<div style="left:98px;top:25.8px;width:14px;height:8.5px;background:rgba(40,40,40,0.72);border-radius:1.8px;"></div>
<span class="t" style="top:25.2px;color:#d4d4d4;font-size:5.3px;left:55px;width:100px;text-align:center;">Add</span>
<div style="left:114.4px;top:25.8px;width:19.6px;height:8.5px;background:rgba(40,40,40,0.72);border-radius:1.8px;"></div>
<span class="t" style="top:25.2px;color:#d4d4d4;font-size:5.3px;left:74.2px;width:100px;text-align:center;">Object</span>
<div style="left:136.4px;top:25.8px;width:13.6px;height:8.5px;background:rgba(40,40,40,0.8);border-radius:1.8px;"></div>
<svg style="left:137.6px;top:26.7px" width="7" height="7" viewBox="0 0 7 7" ><circle cx="3.5" cy="3.5" r="2.9" fill="#d9404e"/><path d="M0.8 4.2C2.2 2.2 4.4 1.6 6.2 2.4M1.4 5.4C3 3.6 4.8 3.2 6.4 4" stroke="#7a2630" stroke-width="0.8" fill="none"/></svg>
<svg style="left:145.5px;top:29.2px" width="3.4" height="2.4" viewBox="0 0 3.4 2.4" ><path d="M0.5 0.6L1.7 1.68L2.9 0.6" stroke="#bbb" stroke-width="0.8" fill="none"/></svg>
<div style="left:212.4px;top:25.8px;width:12.8px;height:8.5px;background:rgba(40,40,40,0.8);border-radius:1.8px;"></div>
<svg style="left:213.4px;top:26.6px" width="7" height="7" viewBox="0 0 7 7" ><path d="M0.8 5.6L2.2 2.6L3.6 4L2.4 6.4Z" fill="#e6e6e6"/><circle cx="3.8" cy="2" r="1.1" fill="#e6e6e6"/><circle cx="5.6" cy="1.4" r="0.9" fill="#dcdcdc"/><circle cx="5.2" cy="3.4" r="0.8" fill="#dcdcdc"/></svg>
<svg style="left:220.5px;top:29.2px" width="3.4" height="2.4" viewBox="0 0 3.4 2.4" ><path d="M0.5 0.6L1.7 1.68L2.9 0.6" stroke="#bbb" stroke-width="0.8" fill="none"/></svg>
<div style="left:228.8px;top:25.8px;width:8.4px;height:8.5px;background:#4772b3;border-radius:1.8px 0 0 1.8px;"></div>
<svg style="left:228.8px;top:25.8px" width="8.4" height="8.5" viewBox="0 0 8.4 8.5" ><path d="M1.6 6.8L6.6 1.8M3.2 1.6C4.6 3 5 4.6 4.6 6.8M1.8 3.6C3.4 3.4 5.4 4 6.8 5.2" stroke="#eef2fa" stroke-width="0.8" fill="none"/></svg>
<div style="left:237.2px;top:25.8px;width:8.4px;height:8.5px;background:#2d2d2d;border-radius:0 1.8px 1.8px 0;"></div>
<svg style="left:239.7px;top:29.2px" width="3.4" height="2.4" viewBox="0 0 3.4 2.4" ><path d="M0.5 0.6L1.7 1.68L2.9 0.6" stroke="#bbb" stroke-width="0.8" fill="none"/></svg>
<div style="left:249.4px;top:25.8px;width:8.4px;height:8.5px;background:#4772b3;border-radius:1.8px 0 0 1.8px;"></div>
<svg style="left:249.4px;top:25.8px" width="8.4" height="8.5" viewBox="0 0 8.4 8.5" ><circle cx="3.6" cy="4.8" r="2.3" fill="#e8eef8"/><circle cx="5" cy="3.4" r="2.3" fill="#f6f8fc" stroke="#4772b3" stroke-width="0.5"/></svg>
<div style="left:257.8px;top:25.8px;width:8.2px;height:8.5px;background:#2d2d2d;border-radius:0 1.8px 1.8px 0;"></div>
<svg style="left:260.3px;top:29.2px" width="3.4" height="2.4" viewBox="0 0 3.4 2.4" ><path d="M0.5 0.6L1.7 1.68L2.9 0.6" stroke="#bbb" stroke-width="0.8" fill="none"/></svg>
<div style="left:270px;top:25.8px;width:8px;height:8.5px;background:#545454;border-radius:1.8px;"></div>
<svg style="left:270px;top:25.8px" width="8" height="8.5" viewBox="0 0 8 8.5" ><rect x="1.4" y="2.6" width="4" height="4" fill="none" stroke="#a4a4a4" stroke-width="0.7"/><rect x="2.8" y="1.4" width="4" height="4" fill="none" stroke="#a4a4a4" stroke-width="0.7"/></svg>
<div style="left:281.7px;top:25.8px;width:8.5px;height:8.5px;background:#545454;border-radius:1.8px 0 0 1.8px;"></div>
<div style="left:290.1px;top:25.8px;width:8.5px;height:8.5px;background:#4772b3;"></div>
<div style="left:298.6px;top:25.8px;width:8.5px;height:8.5px;background:#545454;"></div>
<div style="left:307.1px;top:25.8px;width:8.5px;height:8.5px;background:#545454;"></div>
<svg style="left:281.7px;top:25.8px" width="8.5" height="8.5" viewBox="0 0 8.5 8.5" ><circle cx="4.25" cy="4.3" r="2.7" fill="none" stroke="#ababab" stroke-width="0.7"/><ellipse cx="4.25" cy="4.3" rx="1.1" ry="2.7" fill="none" stroke="#ababab" stroke-width="0.5"/><path d="M1.6 4.3H6.9" stroke="#ababab" stroke-width="0.5"/></svg>
<svg style="left:290.1px;top:25.8px" width="8.5" height="8.5" viewBox="0 0 8.5 8.5" ><circle cx="4.25" cy="4.3" r="2.9" fill="#ffffff"/></svg>
<svg style="left:298.6px;top:25.8px" width="8.5" height="8.5" viewBox="0 0 8.5 8.5" ><circle cx="4.25" cy="4.3" r="2.8" fill="#d8d8d8"/><path d="M4.25 1.5A2.8 2.8 0 0 1 4.25 7.1Z" fill="#777"/><path d="M4.25 4.3H7" stroke="#d8d8d8" stroke-width="0.6"/></svg>
<svg style="left:307.1px;top:25.8px" width="8.5" height="8.5" viewBox="0 0 8.5 8.5" ><circle cx="4.25" cy="4.3" r="2.8" fill="#cfcfcf"/><circle cx="3.4" cy="3.4" r="1.3" fill="#8a8a8a"/></svg>
<div style="left:315.6px;top:25.8px;width:9px;height:8.5px;background:#2d2d2d;border-radius:0 1.8px 1.8px 0;"></div>
<svg style="left:318.3px;top:29.2px" width="3.4" height="2.4" viewBox="0 0 3.4 2.4" ><path d="M0.5 0.6L1.7 1.68L2.9 0.6" stroke="#bbb" stroke-width="0.8" fill="none"/></svg>
<span class="t" style="top:38.6px;color:#ececec;font-size:5.3px;left:31px;text-shadow:0 0 1.5px #000,0.4px 0.4px 0.6px #000;">User Perspective</span>
<span class="t" style="top:46.8px;color:#ececec;font-size:5.3px;left:31px;text-shadow:0 0 1.5px #000,0.4px 0.4px 0.6px #000;">(1) Collection | Plane.001</span>
<svg style="left:325px;top:44px" width="3.4" height="4.4" viewBox="0 0 3.4 4.4" ><path d="M2.6 0.6L0.8 2.2L2.6 3.8" stroke="#b5b5b5" stroke-width="0.8" fill="none"/></svg>
<div style="left:4px;top:40px;width:18.6px;height:15.6px;background:#4772b3;border-radius:2.2px 2.2px 0 0;"></div>
<div style="left:4px;top:55.6px;width:18.6px;height:15.6px;background:rgba(47,47,47,0.92);border-radius:0 0 2.2px 2.2px;"></div>
<div style="left:4px;top:74.4px;width:18.6px;height:15.6px;background:rgba(47,47,47,0.92);border-radius:2.2px 2.2px 0 0;"></div>
<div style="left:4px;top:90px;width:18.6px;height:15.6px;background:rgba(47,47,47,0.92);"></div>
<div style="left:4px;top:105.6px;width:18.6px;height:15.6px;background:rgba(47,47,47,0.92);"></div>
<div style="left:4px;top:121.2px;width:18.6px;height:15.6px;background:rgba(47,47,47,0.92);border-radius:0 0 2.2px 2.2px;"></div>
<div style="left:4px;top:140px;width:18.6px;height:15.6px;background:rgba(47,47,47,0.92);border-radius:2.2px 2.2px 0 0;"></div>
<div style="left:4px;top:155.6px;width:18.6px;height:15.6px;background:rgba(47,47,47,0.92);border-radius:0 0 2.2px 2.2px;"></div>
<div style="left:4px;top:55.3px;width:18.6px;height:0.6px;background:#242424;"></div>
<div style="left:4px;top:89.7px;width:18.6px;height:0.6px;background:#242424;"></div>
<div style="left:4px;top:105.3px;width:18.6px;height:0.6px;background:#242424;"></div>
<div style="left:4px;top:120.9px;width:18.6px;height:0.6px;background:#242424;"></div>
<div style="left:4px;top:155.3px;width:18.6px;height:0.6px;background:#242424;"></div>
<svg style="left:7px;top:41.6px" width="12.6" height="12" viewBox="0 0 12.6 12" ><rect x="0.9" y="0.9" width="10.2" height="10" rx="1" fill="none" stroke="#e8a04a" stroke-width="0.8" stroke-dasharray="1.5 1"/><path d="M4.4 2.6V9L8.8 6.2Z" fill="#f4f4f4"/></svg>
<svg style="left:6.8px;top:57.2px" width="12.6" height="12.6" viewBox="0 0 12.6 12.6" ><circle cx="6.3" cy="6.3" r="5.2" fill="none" stroke="#ececec" stroke-width="0.6"/><circle cx="6.3" cy="6.3" r="5.2" fill="none" stroke="#d94a4a" stroke-width="0.6" stroke-dasharray="2 2"/><path d="M6.3 2.4V5.2M6.3 7.4V10.2M2.4 6.3H5.2M7.4 6.3H10.2" stroke="#dcdcdc" stroke-width="0.6"/></svg>
<svg style="left:7.3px;top:76.6px" width="12" height="12" viewBox="0 0 12 12" ><path d="M6 1.6V5M6 7V10.4M1.6 6H5M7 6H10.4" stroke="#e0e0e0" stroke-width="0.7" stroke-dasharray="1.2 0.5"/><path d="M6 0.4L7.2 2.2H4.8ZM6 11.6L7.2 9.8H4.8ZM0.4 6L2.2 4.8V7.2ZM11.6 6L9.8 4.8V7.2Z" fill="#ececec"/></svg>
<svg style="left:7.3px;top:92.2px" width="12" height="12" viewBox="0 0 12 12" ><circle cx="6" cy="6" r="4.3" fill="none" stroke="#e0e0e0" stroke-width="0.65" stroke-dasharray="5.4 1.35" stroke-dashoffset="2.7"/><path d="M0.6 6L2.8 4.8V7.2ZM11.4 6L9.2 4.8V7.2Z" fill="#ececec"/><circle cx="6" cy="6" r="1.2" fill="#ececec"/></svg>
<svg style="left:7.3px;top:107.6px" width="12" height="12" viewBox="0 0 12 12" ><rect x="1.4" y="5.6" width="4.6" height="4.6" fill="#e6e6e6"/><path d="M1.4 4.2V1.8H9.8V10.2H7.4" stroke="#dcdcdc" stroke-width="0.6" fill="none"/><path d="M6.2 5.4L8.6 3M6.8 2.8H8.8V4.8" stroke="#dcdcdc" stroke-width="0.6" fill="none"/></svg>
<svg style="left:7.3px;top:123.4px" width="12" height="12" viewBox="0 0 12 12" ><circle cx="6" cy="6" r="4.4" fill="none" stroke="#e6e6e6" stroke-width="0.7" stroke-dasharray="1.6 0.8"/><rect x="4.2" y="4.2" width="3.6" height="3.6" fill="#ececec"/><path d="M6 0.4V1.6M6 10.4V11.6M0.4 6H1.6M10.4 6H11.6" stroke="#e6e6e6" stroke-width="0.7"/></svg>
<svg style="left:6.8px;top:142.4px" width="13" height="12" viewBox="0 0 13 12" ><path d="M0.9 8.6L1.7 7L7.6 1.3L8.8 2.5L2.9 8.2Z" fill="#ececec"/><path d="M3.4 9.8C5 9.6 5.2 6.6 7.2 6.6C8.8 6.6 8.6 8.4 10.6 8.6" stroke="#7cc0b4" stroke-width="0.6" fill="none"/></svg>
<svg style="left:7.3px;top:157.6px" width="12" height="12" viewBox="0 0 12 12" ><path d="M2.4 0.8V11H11" stroke="#e6e6e6" stroke-width="1.2" fill="none"/><path d="M3.6 10V5.6L8.8 10Z" fill="#7fd6a4"/><path d="M2 2.4H3M2 4.4H3M2 6.4H3M2 8.4H3M4.6 10.4V11.4M6.6 10.4V11.4M8.6 10.4V11.4" stroke="#555" stroke-width="0.4"/></svg>
<svg style="left:20.2px;top:52.6px" width="2" height="2" viewBox="0 0 2 2" ><path d="M2 0V2H0Z" fill="#8c8c8c"/></svg>
<svg style="left:20.2px;top:118.4px" width="2" height="2" viewBox="0 0 2 2" ><path d="M2 0V2H0Z" fill="#8c8c8c"/></svg>
<svg style="left:20.2px;top:152.6px" width="2" height="2" viewBox="0 0 2 2" ><path d="M2 0V2H0Z" fill="#8c8c8c"/></svg>
<svg style="left:280px;top:40px" width="50" height="36" viewBox="280 40 50 36" ><path d="M306.2 58.6L319.8 54.3" stroke="#b8424f" stroke-width="0.9"/><path d="M306.2 58.6L300.4 47.3" stroke="#7aa52a" stroke-width="0.9"/><path d="M306.2 58.6L306 50.2" stroke="#3f8fe0" stroke-width="0.9"/><circle cx="292.3" cy="63.1" r="2.9" fill="#f0364f"/><circle cx="306" cy="67.3" r="2.9" fill="#2f66a6"/><circle cx="311.3" cy="69.8" r="2.9" fill="#86c71a"/><circle cx="319.8" cy="54.3" r="3.2" fill="#b8424f"/><circle cx="300.4" cy="47.3" r="3.2" fill="#7aa52a"/><circle cx="306" cy="50.2" r="3.2" fill="#2c8ef5"/><g font-family="DejaVu Sans,Liberation Sans,sans-serif" font-size="4.6" font-weight="bold" text-anchor="middle" fill="#111"><text x="319.8" y="56">X</text><text x="300.4" y="49">Y</text><text x="306" y="51.9">Z</text></g></svg>
<div style="left:313.1px;top:78.1px;width:10.6px;height:10.6px;background:rgba(40,40,40,0.86);border-radius:5.3px;"></div>
<div style="left:313.1px;top:92.4px;width:10.6px;height:10.6px;background:rgba(40,40,40,0.86);border-radius:5.3px;"></div>
<div style="left:313.1px;top:106.3px;width:10.6px;height:10.6px;background:rgba(40,40,40,0.86);border-radius:5.3px;"></div>
<div style="left:313.1px;top:120.1px;width:10.6px;height:10.6px;background:rgba(40,40,40,0.86);border-radius:5.3px;"></div>
<svg style="left:314.2px;top:79.2px" width="8.4" height="8.4" viewBox="0 0 8.4 8.4" ><circle cx="4.9" cy="3.3" r="2.2" fill="none" stroke="#f2f2f2" stroke-width="1"/><path d="M3.3 5L1 7.4" stroke="#f2f2f2" stroke-width="1.2"/><path d="M3.9 3.3H5.9M4.9 2.3V4.3" stroke="#f2f2f2" stroke-width="0.6"/></svg>
<svg style="left:314.2px;top:93.4px" width="8.4" height="8.4" viewBox="0 0 8.4 8.4" ><path d="M2.3 4.6V2.6M3.5 4.2V1.4M4.7 4.2V1.2M5.9 4.4V2" stroke="#f2f2f2" stroke-width="0.95" stroke-linecap="round"/><path d="M1.9 4.2H6.4V5.6L5.4 7.6H3.2L1.9 5.8Z" fill="#f2f2f2"/><path d="M2 5.6L0.9 4.4" stroke="#f2f2f2" stroke-width="0.9" stroke-linecap="round"/></svg>
<svg style="left:314.2px;top:107.4px" width="8.4" height="8.4" viewBox="0 0 8.4 8.4" ><rect x="1" y="3.7" width="4.6" height="3.2" rx="0.5" fill="#f2f2f2"/><path d="M5.6 5.3L7.6 4V6.7Z" fill="#f2f2f2"/><circle cx="2.2" cy="2.5" r="1.1" fill="#f2f2f2"/><circle cx="4.6" cy="2.2" r="1.4" fill="#f2f2f2"/></svg>
<svg style="left:314.2px;top:121.2px" width="8.4" height="8.4" viewBox="0 0 8.4 8.4" ><path d="M2.2 1.8H6.2L7.6 7H0.8Z" fill="none" stroke="#f2f2f2" stroke-width="0.75"/><path d="M3.5 1.8L3.1 7M4.9 1.8L5.3 7M1.6 3.4H6.8M1.2 5.2H7.2" stroke="#f2f2f2" stroke-width="0.65"/></svg>
<svg style="left:154px;top:219.5px" width="21" height="20" viewBox="0 0 21 20" ><g transform="translate(10.4 10.1)"><path d="M-8.1 2.8L-2.6 0.9M2.6 -0.9L8.1 -2.6M-3.1 -6.2L-1 -2M1 2L3.4 6.3" stroke="#1c1c1c" stroke-width="0.6"/><ellipse rx="4.3" ry="3.7" fill="none" stroke="#e8e8e8" stroke-width="0.45" stroke-dasharray="1.1 1.1" opacity="0.8"/><ellipse rx="4.3" ry="3.7" fill="none" stroke="#d2453a" stroke-width="0.45" stroke-dasharray="1.1 1.1" stroke-dashoffset="1.1" opacity="0.8"/><circle r="1.1" fill="#f0922a"/></g></svg>
<div style="left:334.4px;top:13.9px;width:12.8px;height:8.3px;background:#2d2d2d;border-radius:1.8px;"></div>
<svg style="left:335.6px;top:14.6px" width="7" height="7" viewBox="0 0 7 7" ><rect x="0.6" y="0.4" width="5.6" height="6.2" fill="#e8e8e8"/><path d="M2 1.6H5M2 3.4H5M2 5.2H5" stroke="#444" stroke-width="0.6"/><path d="M3.4 0.4V6.6" stroke="#666" stroke-width="0.5"/></svg>
<svg style="left:342.7px;top:17.2px" width="3.4" height="2.4" viewBox="0 0 3.4 2.4" ><path d="M0.5 0.6L1.7 1.68L2.9 0.6" stroke="#bbb" stroke-width="0.8" fill="none"/></svg>
<span class="t" style="top:13.2px;color:#d4d4d4;font-size:5.3px;left:353.8px;">View</span>
<span class="t" style="top:13.2px;color:#d4d4d4;font-size:5.3px;left:372.8px;">Image*</span>
<div style="left:419.8px;top:13.9px;width:12.6px;height:8.3px;background:#2d2d2d;border-radius:1.8px 0 0 1.8px;"></div>
<svg style="left:420.8px;top:14.7px" width="7" height="7" viewBox="0 0 7 7" ><rect x="0.4" y="0.4" width="6.2" height="6.2" fill="none" stroke="#d8d8d8" stroke-width="0.7"/><path d="M0.8 6.2L3 3L4.4 5L5.2 4.2L6.4 6.2Z" fill="#f0f0f0"/><rect x="3.6" y="0.8" width="2.6" height="2.2" fill="#8a8a8a"/></svg>
<svg style="left:428.2px;top:17.3px" width="3.2" height="2.2" viewBox="0 0 3.2 2.2" ><path d="M0.5 0.55L1.6 1.54L2.7 0.55" stroke="#bbb" stroke-width="0.8" fill="none"/></svg>
<div style="left:432.4px;top:13.9px;width:55.6px;height:8.3px;background:#1d1d1d;"></div>
<span class="t" style="top:13.2px;color:#d9d9d9;font-size:5.3px;left:436.6px;">Untitled</span>
<div style="left:488.4px;top:13.9px;width:8.7px;height:8.3px;background:#545454;"></div>
<div style="left:497.4px;top:13.9px;width:8.7px;height:8.3px;background:#545454;"></div>
<div style="left:506.3px;top:13.9px;width:8.7px;height:8.3px;background:#545454;"></div>
<div style="left:515.2px;top:13.9px;width:8.7px;height:8.3px;background:#545454;border-radius:0 1.8px 1.8px 0;"></div>
<svg style="left:488.4px;top:13.9px" width="8.7" height="8.3" viewBox="0 0 8.7 8.3" ><path d="M4.35 1.4L6.8 2.2V4.4C6.8 5.8 5.6 6.8 4.35 7.2C3.1 6.8 1.9 5.8 1.9 4.4V2.2Z" fill="none" stroke="#888" stroke-width="0.7"/></svg>
<svg style="left:497.4px;top:13.9px" width="8.7" height="8.3" viewBox="0 0 8.7 8.3" ><path d="M1.6 2.6H4.8V7H1.6Z" fill="none" stroke="#e0e0e0" stroke-width="0.7"/><path d="M3.2 1.3H6L7 2.3V5.6H5.2" fill="none" stroke="#e0e0e0" stroke-width="0.7"/></svg>
<svg style="left:506.3px;top:13.9px" width="8.7" height="8.3" viewBox="0 0 8.7 8.3" ><path d="M1.4 2H3.6L4.2 2.8H7.3V6.8H1.4Z" fill="#e6e6e6"/></svg>
<svg style="left:515.2px;top:13.9px" width="8.7" height="8.3" viewBox="0 0 8.7 8.3" ><path d="M2.6 2.5L6.1 6M6.1 2.5L2.6 6" stroke="#bdbdbd" stroke-width="0.8"/></svg>
<svg style="left:527.6px;top:13.9px" width="9" height="8.3" viewBox="0 0 9 8.3" ><path d="M5.4 1.2L7.8 3.6L6.8 4.2L5.6 5.8L5.4 7L2 3.6L3.2 3.4L4.8 2.2Z" fill="#f0f0f0"/><path d="M3.6 5.4L1.2 7.6" stroke="#f0f0f0" stroke-width="0.8"/></svg>
<div style="left:594px;top:13.9px;width:8.6px;height:8.3px;background:#4772b3;border-radius:1.8px 0 0 1.8px;"></div>
<svg style="left:594px;top:13.9px" width="8.6" height="8.3" viewBox="0 0 8.6 8.3" ><circle cx="3.7" cy="4.8" r="2.3" fill="#e8eef8"/><circle cx="5.1" cy="3.4" r="2.3" fill="#f6f8fc" stroke="#4772b3" stroke-width="0.5"/></svg>
<div style="left:602.6px;top:13.9px;width:8.4px;height:8.3px;background:#2d2d2d;border-radius:0 1.8px 1.8px 0;"></div>
<svg style="left:605.1px;top:17.2px" width="3.4" height="2.4" viewBox="0 0 3.4 2.4" ><path d="M0.5 0.6L1.7 1.68L2.9 0.6" stroke="#bbb" stroke-width="0.8" fill="none"/></svg>
<div style="left:617.8px;top:13.9px;width:12.8px;height:8.3px;background:#2d2d2d;border-radius:1.8px;"></div>
<svg style="left:619px;top:14.7px" width="7" height="7" viewBox="0 0 7 7" ><rect x="0.4" y="0.4" width="6" height="6" fill="#d8d8d8"/><path d="M0.4 0.4L6.4 6.4V0.4Z" fill="#555"/><path d="M0.4 0.4L6.4 6.4" stroke="#eee" stroke-width="0.6"/></svg>
<svg style="left:625.9px;top:17.2px" width="3.4" height="2.4" viewBox="0 0 3.4 2.4" ><path d="M0.5 0.6L1.7 1.68L2.9 0.6" stroke="#bbb" stroke-width="0.8" fill="none"/></svg>
<div style="left:619.2px;top:28.2px;width:10.6px;height:10.6px;background:rgba(40,40,40,0.86);border-radius:5.3px;"></div>
<div style="left:619.2px;top:42.5px;width:10.6px;height:10.6px;background:rgba(40,40,40,0.86);border-radius:5.3px;"></div>
<svg style="left:620.3px;top:29.3px" width="8.4" height="8.4" viewBox="0 0 8.4 8.4" ><circle cx="4.9" cy="3.3" r="2.2" fill="none" stroke="#f2f2f2" stroke-width="1"/><path d="M3.3 5L1 7.4" stroke="#f2f2f2" stroke-width="1.2"/><path d="M3.9 3.3H5.9M4.9 2.3V4.3" stroke="#f2f2f2" stroke-width="0.6"/></svg>
<svg style="left:620.3px;top:43.5px" width="8.4" height="8.4" viewBox="0 0 8.4 8.4" ><path d="M2.3 4.6V2.6M3.5 4.2V1.4M4.7 4.2V1.2M5.9 4.4V2" stroke="#f2f2f2" stroke-width="0.95" stroke-linecap="round"/><path d="M1.9 4.2H6.4V5.6L5.4 7.6H3.2L1.9 5.8Z" fill="#f2f2f2"/><path d="M2 5.6L0.9 4.4" stroke="#f2f2f2" stroke-width="0.9" stroke-linecap="round"/></svg>
<svg style="left:630.6px;top:31.6px" width="3.4" height="4.4" viewBox="0 0 3.4 4.4" ><path d="M2.6 0.6L0.8 2.2L2.6 3.8" stroke="#b5b5b5" stroke-width="0.8" fill="none"/></svg>
<svg style="left:330.6px;top:31.6px" width="3.4" height="4.4" viewBox="0 0 3.4 4.4" ><path d="M0.8 0.6L2.6 2.2L0.8 3.8" stroke="#b5b5b5" stroke-width="0.8" fill="none"/></svg>
<svg style="left:369.2px;top:304.5px" width="20" height="20" viewBox="0 0 20 20" ><g transform="translate(10 10)"><path d="M0 -9V-3M0 3V9M-9 0H-3M3 0H9" stroke="#242424" stroke-width="0.6"/><circle r="4.6" fill="none" stroke="#e0e0e0" stroke-width="0.55" stroke-dasharray="1.2 1.2"/><circle r="4.6" fill="none" stroke="#c8332c" stroke-width="0.55" stroke-dasharray="1.2 1.2" stroke-dashoffset="1.2"/></g></svg>
<div style="left:4.5px;top:438.3px;width:13.4px;height:8px;background:#2d2d2d;border-radius:1.8px;"></div>
<svg style="left:6px;top:438.9px" width="7" height="7" viewBox="0 0 7 7" ><circle cx="3.5" cy="3.5" r="3" fill="#e6e6e6"/><path d="M3.5 3.5V1.2M3.5 3.5L5 4.6" stroke="#333" stroke-width="0.7"/></svg>
<svg style="left:13.4px;top:441.6px" width="3.2" height="2.2" viewBox="0 0 3.2 2.2" ><path d="M0.5 0.55L1.6 1.54L2.7 0.55" stroke="#bbb" stroke-width="0.8" fill="none"/></svg>
<div style="left:21px;top:438.3px;width:31.6px;height:8px;background:#2d2d2d;border-radius:1.8px;"></div>
<span class="t" style="top:437.4px;color:#d4d4d4;font-size:5.3px;left:24.2px;">Playback</span>
<svg style="left:48px;top:441.6px" width="3.2" height="2.2" viewBox="0 0 3.2 2.2" ><path d="M0.5 0.55L1.6 1.54L2.7 0.55" stroke="#bbb" stroke-width="0.8" fill="none"/></svg>
<div style="left:54px;top:438.3px;width:26.8px;height:8px;background:#2d2d2d;border-radius:1.8px;"></div>
<span class="t" style="top:437.4px;color:#d4d4d4;font-size:5.3px;left:57.2px;">Keying</span>
<svg style="left:76.2px;top:441.6px" width="3.2" height="2.2" viewBox="0 0 3.2 2.2" ><path d="M0.5 0.55L1.6 1.54L2.7 0.55" stroke="#bbb" stroke-width="0.8" fill="none"/></svg>
<span class="t" style="top:437.4px;color:#d4d4d4;font-size:5.3px;left:84.6px;">View</span>
<span class="t" style="top:437.4px;color:#d4d4d4;font-size:5.3px;left:103px;">Marker</span>
<div style="left:275.8px;top:438.3px;width:8.6px;height:8px;background:#545454;border-radius:1.8px 0 0 1.8px;"></div>
<svg style="left:275.8px;top:438.3px" width="8.6" height="8" viewBox="0 0 8.6 8" ><circle cx="4.3" cy="4" r="1.7" fill="#e8e8e8"/></svg>
<div style="left:284.4px;top:438.3px;width:7.8px;height:8px;background:#383838;border-radius:0 1.8px 1.8px 0;"></div>
<svg style="left:286.7px;top:441.6px" width="3.2" height="2.2" viewBox="0 0 3.2 2.2" ><path d="M0.5 0.55L1.6 1.54L2.7 0.55" stroke="#666" stroke-width="0.8" fill="none"/></svg>
<div style="left:295.8px;top:438.3px;width:8.9px;height:8px;background:#545454;border-radius:1.8px 0 0 1.8px;"></div>
<svg style="left:295.8px;top:438.3px" width="8.9" height="8" viewBox="0 0 8.9 8" ><path d="M2.4 2V6" stroke="#eee" stroke-width="0.9"/><path d="M6.6 2V6L3.2 4Z" fill="#eee"/></svg>
<div style="left:304.7px;top:438.3px;width:8.9px;height:8px;background:#545454;"></div>
<svg style="left:304.7px;top:438.3px" width="8.9" height="8" viewBox="0 0 8.9 8" ><path d="M4 2V6L1.4 4Z" fill="#eee"/><path d="M6 2L8 4L6 6L4 4Z" fill="#eee"/></svg>
<div style="left:313.6px;top:438.3px;width:8.9px;height:8px;background:#545454;"></div>
<svg style="left:313.6px;top:438.3px" width="8.9" height="8" viewBox="0 0 8.9 8" ><path d="M6.4 1.6V6.4L2.4 4Z" fill="#eee"/></svg>
<div style="left:322.5px;top:438.3px;width:8.9px;height:8px;background:#545454;"></div>
<svg style="left:322.5px;top:438.3px" width="8.9" height="8" viewBox="0 0 8.9 8" ><path d="M2.6 1.6V6.4L6.6 4Z" fill="#eee"/></svg>
<div style="left:331.4px;top:438.3px;width:8.9px;height:8px;background:#545454;"></div>
<svg style="left:331.4px;top:438.3px" width="8.9" height="8" viewBox="0 0 8.9 8" ><path d="M5 2V6L7.6 4Z" fill="#eee"/><path d="M3 2L5 4L3 6L1 4Z" fill="#eee"/></svg>
<div style="left:340.3px;top:438.3px;width:8.9px;height:8px;background:#545454;border-radius:0 1.8px 1.8px 0;"></div>
<svg style="left:340.3px;top:438.3px" width="8.9" height="8" viewBox="0 0 8.9 8" ><path d="M6.6 2V6" stroke="#eee" stroke-width="0.9"/><path d="M2.4 2V6L5.8 4Z" fill="#eee"/></svg>
<div style="left:505.8px;top:438.3px;width:33.4px;height:8px;background:#545454;border-radius:1.8px;"></div>
<span class="t" style="top:437.4px;color:#e6e6e6;font-size:5.3px;left:472.5px;width:100px;text-align:center;">1</span>
<div style="left:542.2px;top:438.3px;width:9.6px;height:8px;background:#474747;border-radius:1.8px 0 0 1.8px;"></div>
<svg style="left:543.4px;top:438.8px" width="7" height="7" viewBox="0 0 7 7" ><circle cx="3.5" cy="3.9" r="2.5" fill="none" stroke="#d8d8d8" stroke-width="0.7"/><path d="M3.5 3.9V2.4M2.6 0.6H4.4" stroke="#d8d8d8" stroke-width="0.7"/></svg>
<div style="left:551.8px;top:438.3px;width:39.6px;height:8px;background:#545454;"></div>
<span class="t" style="top:437.4px;color:#e6e6e6;font-size:5.3px;left:557.6px;">Start</span>
<span class="t" style="top:437.4px;color:#e6e6e6;font-size:5.3px;right:182.4px;">1</span>
<div style="left:592px;top:438.3px;width:38.6px;height:8px;background:#545454;border-radius:0 1.8px 1.8px 0;"></div>
<span class="t" style="top:437.4px;color:#e6e6e6;font-size:5.3px;left:598.8px;">End</span>
<span class="t" style="top:437.4px;color:#e6e6e6;font-size:5.3px;right:143px;">250</span>
<div style="left:0px;top:457.4px;width:634px;height:12.6px;background:#2d2d2d;border-radius:0 0 2.5px 2.5px;"></div>
<div style="left:21.42px;top:457.4px;width:589.5px;height:8px;background:#3d3d3d;"></div>
<svg style="left:0;top:0" width="634" height="480"><rect x="21.17" y="457.4" width="0.5" height="8" fill="#2c2c2c"/><rect x="32.96" y="457.4" width="0.5" height="8" fill="#363636"/><rect x="44.75" y="457.4" width="0.5" height="8" fill="#2c2c2c"/><rect x="56.54" y="457.4" width="0.5" height="8" fill="#363636"/><rect x="68.33" y="457.4" width="0.5" height="8" fill="#2c2c2c"/><rect x="80.12" y="457.4" width="0.5" height="8" fill="#363636"/><rect x="91.91" y="457.4" width="0.5" height="8" fill="#2c2c2c"/><rect x="103.70" y="457.4" width="0.5" height="8" fill="#363636"/><rect x="115.49" y="457.4" width="0.5" height="8" fill="#2c2c2c"/><rect x="127.28" y="457.4" width="0.5" height="8" fill="#363636"/><rect x="139.07" y="457.4" width="0.5" height="8" fill="#2c2c2c"/><rect x="150.86" y="457.4" width="0.5" height="8" fill="#363636"/><rect x="162.65" y="457.4" width="0.5" height="8" fill="#2c2c2c"/><rect x="174.44" y="457.4" width="0.5" height="8" fill="#363636"/><rect x="186.23" y="457.4" width="0.5" height="8" fill="#2c2c2c"/><rect x="198.02" y="457.4" width="0.5" height="8" fill="#363636"/><rect x="209.81" y="457.4" width="0.5" height="8" fill="#2c2c2c"/><rect x="221.60" y="457.4" width="0.5" height="8" fill="#363636"/><rect x="233.39" y="457.4" width="0.5" height="8" fill="#2c2c2c"/><rect x="245.18" y="457.4" width="0.5" height="8" fill="#363636"/><rect x="256.97" y="457.4" width="0.5" height="8" fill="#2c2c2c"/><rect x="268.76" y="457.4" width="0.5" height="8" fill="#363636"/><rect x="280.55" y="457.4" width="0.5" height="8" fill="#2c2c2c"/><rect x="292.34" y="457.4" width="0.5" height="8" fill="#363636"/><rect x="304.13" y="457.4" width="0.5" height="8" fill="#2c2c2c"/><rect x="315.92" y="457.4" width="0.5" height="8" fill="#363636"/><rect x="327.71" y="457.4" width="0.5" height="8" fill="#2c2c2c"/><rect x="339.50" y="457.4" width="0.5" height="8" fill="#363636"/><rect x="351.29" y="457.4" width="0.5" height="8" fill="#2c2c2c"/><rect x="363.08" y="457.4" width="0.5" height="8" fill="#363636"/><rect x="374.87" y="457.4" width="0.5" height="8" fill="#2c2c2c"/><rect x="386.66" y="457.4" width="0.5" height="8" fill="#363636"/><rect x="398.45" y="457.4" width="0.5" height="8" fill="#2c2c2c"/><rect x="410.24" y="457.4" width="0.5" height="8" fill="#363636"/><rect x="422.03" y="457.4" width="0.5" height="8" fill="#2c2c2c"/><rect x="433.82" y="457.4" width="0.5" height="8" fill="#363636"/><rect x="445.61" y="457.4" width="0.5" height="8" fill="#2c2c2c"/><rect x="457.40" y="457.4" width="0.5" height="8" fill="#363636"/><rect x="469.19" y="457.4" width="0.5" height="8" fill="#2c2c2c"/><rect x="480.98" y="457.4" width="0.5" height="8" fill="#363636"/><rect x="492.77" y="457.4" width="0.5" height="8" fill="#2c2c2c"/><rect x="504.56" y="457.4" width="0.5" height="8" fill="#363636"/><rect x="516.35" y="457.4" width="0.5" height="8" fill="#2c2c2c"/><rect x="528.14" y="457.4" width="0.5" height="8" fill="#363636"/><rect x="539.93" y="457.4" width="0.5" height="8" fill="#2c2c2c"/><rect x="551.72" y="457.4" width="0.5" height="8" fill="#363636"/><rect x="563.51" y="457.4" width="0.5" height="8" fill="#2c2c2c"/><rect x="575.30" y="457.4" width="0.5" height="8" fill="#363636"/><rect x="587.09" y="457.4" width="0.5" height="8" fill="#2c2c2c"/><rect x="598.88" y="457.4" width="0.5" height="8" fill="#363636"/><rect x="610.67" y="457.4" width="0.5" height="8" fill="#2c2c2c"/><rect x="622.46" y="457.4" width="0.5" height="8" fill="#363636"/></svg>
<span class="t" style="top:448.3px;color:#b0b0b0;font-size:5.3px;left:-5px;width:100px;text-align:center;">10</span>
<span class="t" style="top:448.3px;color:#b0b0b0;font-size:5.3px;left:18.58px;width:100px;text-align:center;">20</span>
<span class="t" style="top:448.3px;color:#b0b0b0;font-size:5.3px;left:42.16px;width:100px;text-align:center;">30</span>
<span class="t" style="top:448.3px;color:#b0b0b0;font-size:5.3px;left:65.74px;width:100px;text-align:center;">40</span>
<span class="t" style="top:448.3px;color:#b0b0b0;font-size:5.3px;left:89.32px;width:100px;text-align:center;">50</span>
<span class="t" style="top:448.3px;color:#b0b0b0;font-size:5.3px;left:112.9px;width:100px;text-align:center;">60</span>
<span class="t" style="top:448.3px;color:#b0b0b0;font-size:5.3px;left:136.48px;width:100px;text-align:center;">70</span>
<span class="t" style="top:448.3px;color:#b0b0b0;font-size:5.3px;left:160.06px;width:100px;text-align:center;">80</span>
<span class="t" style="top:448.3px;color:#b0b0b0;font-size:5.3px;left:183.64px;width:100px;text-align:center;">90</span>
<span class="t" style="top:448.3px;color:#b0b0b0;font-size:5.3px;left:207.22px;width:100px;text-align:center;">100</span>
<span class="t" style="top:448.3px;color:#b0b0b0;font-size:5.3px;left:230.8px;width:100px;text-align:center;">110</span>
<span class="t" style="top:448.3px;color:#b0b0b0;font-size:5.3px;left:254.38px;width:100px;text-align:center;">120</span>
<span class="t" style="top:448.3px;color:#b0b0b0;font-size:5.3px;left:277.96px;width:100px;text-align:center;">130</span>
<span class="t" style="top:448.3px;color:#b0b0b0;font-size:5.3px;left:301.54px;width:100px;text-align:center;">140</span>
<span class="t" style="top:448.3px;color:#b0b0b0;font-size:5.3px;left:325.12px;width:100px;text-align:center;">150</span>
<span class="t" style="top:448.3px;color:#b0b0b0;font-size:5.3px;left:348.7px;width:100px;text-align:center;">160</span>
<span class="t" style="top:448.3px;color:#b0b0b0;font-size:5.3px;left:372.28px;width:100px;text-align:center;">170</span>
<span class="t" style="top:448.3px;color:#b0b0b0;font-size:5.3px;left:395.86px;width:100px;text-align:center;">180</span>
<span class="t" style="top:448.3px;color:#b0b0b0;font-size:5.3px;left:419.44px;width:100px;text-align:center;">190</span>
<span class="t" style="top:448.3px;color:#b0b0b0;font-size:5.3px;left:443.02px;width:100px;text-align:center;">200</span>
<span class="t" style="top:448.3px;color:#b0b0b0;font-size:5.3px;left:466.6px;width:100px;text-align:center;">210</span>
<span class="t" style="top:448.3px;color:#b0b0b0;font-size:5.3px;left:490.18px;width:100px;text-align:center;">220</span>
<span class="t" style="top:448.3px;color:#b0b0b0;font-size:5.3px;left:513.76px;width:100px;text-align:center;">230</span>
<span class="t" style="top:448.3px;color:#b0b0b0;font-size:5.3px;left:537.34px;width:100px;text-align:center;">240</span>
<span class="t" style="top:448.3px;color:#b0b0b0;font-size:5.3px;left:560.92px;width:100px;text-align:center;">250</span>
<div style="left:23.428px;top:456px;width:0.7px;height:14px;background:#4f86d8;"></div>
<div style="left:610.62px;top:457.4px;width:0.6px;height:8px;background:#1e1e1e;"></div>
<div style="left:4px;top:465.4px;width:627px;height:3.8px;background:#5e5e5e;border-radius:1.9px;"></div>
<div style="left:4.6px;top:465.9px;width:2.8px;height:2.8px;background:#2f2f2f;border-radius:1.4px;"></div>
<div style="left:627.6px;top:465.9px;width:2.8px;height:2.8px;background:#2f2f2f;border-radius:1.4px;"></div>
<div style="left:18.4px;top:449.3px;width:11px;height:7.8px;background:#4772b3;border-radius:1.6px;"></div>
<span class="t" style="top:448.3px;color:#ffffff;font-size:5.3px;left:-26.222px;width:100px;text-align:center;">1</span>
<svg style="left:0.2px;top:455px" width="3" height="4" viewBox="0 0 3 4" ><path d="M0.6 0.6L2.2 2L0.6 3.4" stroke="#aaa" stroke-width="0.7" fill="none"/></svg>
<svg style="left:630.6px;top:455px" width="3.4" height="4.4" viewBox="0 0 3.4 4.4" ><path d="M2.6 0.6L0.8 2.2L2.6 3.8" stroke="#b5b5b5" stroke-width="0.8" fill="none"/></svg>
<div style="left:636.1px;top:33.73px;width:131.9px;height:9.13px;background:#2b2b2b;"></div>
<div style="left:636.1px;top:51.99px;width:131.9px;height:9.13px;background:#2b2b2b;"></div>
<div style="left:636.1px;top:70.25px;width:131.9px;height:9.13px;background:#2b2b2b;"></div>
<div style="left:636.1px;top:88.51px;width:131.9px;height:9.13px;background:#2b2b2b;"></div>
<div style="left:636.1px;top:106.77px;width:131.9px;height:9.13px;background:#2b2b2b;"></div>
<div style="left:636.1px;top:125.03px;width:131.9px;height:9.13px;background:#2b2b2b;"></div>
<div style="left:636.1px;top:143.29px;width:131.9px;height:9.13px;background:#2b2b2b;"></div>
<div style="left:636.1px;top:61.12px;width:131.9px;height:9.13px;background:#1f3556;"></div>
<div style="left:636.1px;top:70.25px;width:131.9px;height:9.13px;background:#3a5588;"></div>
<div style="left:640.2px;top:13.9px;width:12.8px;height:8.3px;background:#2d2d2d;border-radius:1.8px;"></div>
<svg style="left:641.4px;top:14.6px" width="7" height="7" viewBox="0 0 7 7" ><path d="M1.2 0.6V5.6M1.2 3H2.8M1.2 5.6H2.8" stroke="#d8d8d8" stroke-width="0.6" fill="none"/><rect x="0.4" y="0.2" width="1.8" height="1.6" fill="#e6e6e6"/><rect x="3.2" y="2.3" width="3.2" height="1.3" fill="#e6e6e6"/><rect x="3.2" y="4.9" width="3.2" height="1.3" fill="#e6e6e6"/></svg>
<svg style="left:648.6px;top:17.3px" width="3.2" height="2.2" viewBox="0 0 3.2 2.2" ><path d="M0.5 0.55L1.6 1.54L2.7 0.55" stroke="#bbb" stroke-width="0.8" fill="none"/></svg>
<div style="left:657.4px;top:13.9px;width:12.8px;height:8.3px;background:#2d2d2d;border-radius:1.8px;"></div>
<svg style="left:658.4px;top:14.6px" width="7" height="7" viewBox="0 0 7 7" ><rect x="0.6" y="1.8" width="4.4" height="4.4" rx="0.6" fill="#9a9a9a"/><rect x="2" y="0.6" width="4.4" height="4.4" rx="0.6" fill="#d0d0d0"/></svg>
<svg style="left:665.6px;top:17.3px" width="3.2" height="2.2" viewBox="0 0 3.2 2.2" ><path d="M0.5 0.55L1.6 1.54L2.7 0.55" stroke="#bbb" stroke-width="0.8" fill="none"/></svg>
<div style="left:679.2px;top:13.9px;width:51.4px;height:8.3px;background:#1d1d1d;border-radius:1.8px;"></div>
<svg style="left:680.6px;top:14.8px" width="7" height="7" viewBox="0 0 7 7" ><circle cx="4" cy="2.8" r="1.9" fill="none" stroke="#e0e0e0" stroke-width="0.8"/><path d="M2.6 4.2L0.8 6.2" stroke="#e0e0e0" stroke-width="0.9"/></svg>
<div style="left:739.6px;top:13.9px;width:13px;height:8.3px;background:#2d2d2d;border-radius:1.8px;"></div>
<svg style="left:740.8px;top:14.7px" width="7" height="7" viewBox="0 0 7 7" ><path d="M0.6 0.8H6.2L4 3.6V6.4L2.8 5.6V3.6Z" fill="none" stroke="#e0e0e0" stroke-width="0.7"/></svg>
<svg style="left:748.4px;top:17.3px" width="3.2" height="2.2" viewBox="0 0 3.2 2.2" ><path d="M0.5 0.55L1.6 1.54L2.7 0.55" stroke="#bbb" stroke-width="0.8" fill="none"/></svg>
<div style="left:756.8px;top:13.9px;width:7.8px;height:8.3px;background:#545454;border-radius:1.8px;"></div>
<svg style="left:757.2px;top:14.6px" width="7" height="7" viewBox="0 0 7 7" ><rect x="0.8" y="2.2" width="4" height="4" fill="#7c7c7c"/><circle cx="5" cy="2" r="1.5" fill="#8c8c8c"/></svg>
<svg style="left:646.2px;top:25.665px" width="7" height="7" viewBox="0 0 7 7" ><rect x="0.3" y="0.6" width="6.4" height="2" fill="#ececec"/><path d="M0.8 3V6.4H6.2V3Z" fill="#ececec"/><rect x="2.4" y="3.6" width="2.2" height="0.9" fill="#333"/></svg>
<span class="t" style="top:24.265px;color:#c4c4c4;font-size:5.3px;left:656px;">Scene Collection</span>
<svg style="left:648px;top:36.995px" width="3.4" height="3" viewBox="0 0 3.4 3" ><path d="M0.2 0.4L1.7 2.6L3.2 0.4Z" fill="#c8c8c8"/></svg>
<div style="left:654px;top:33.995px;width:9px;height:8.8px;background:#4a4a4a;border-radius:1.5px;"></div>
<svg style="left:655px;top:34.795px" width="7" height="7" viewBox="0 0 7 7" ><rect x="0.3" y="0.6" width="6.4" height="2" fill="#ececec"/><path d="M0.8 3V6.4H6.2V3Z" fill="#ececec"/><rect x="2.4" y="3.6" width="2.2" height="0.9" fill="#333"/></svg>
<span class="t" style="top:33.395px;color:#c4c4c4;font-size:5.3px;left:665.2px;">Collection</span>
<div style="left:649.5px;top:42.86px;width:0.4px;height:36.52px;background:#4a4a4a;"></div>
<svg style="left:658.4px;top:45.825px" width="3" height="3.2" viewBox="0 0 3 3.2" ><path d="M0.4 0.2L2.6 1.6L0.4 3Z" fill="#c8c8c8"/></svg>
<svg style="left:664.2px;top:43.925px" width="7" height="7" viewBox="0 0 7 7" ><rect x="0.6" y="2.8" width="4.2" height="3" rx="0.5" fill="#e8923a"/><path d="M4.8 4.3L6.6 3.2V5.6Z" fill="#e8923a"/><circle cx="1.8" cy="1.7" r="1" fill="#e8923a"/><circle cx="3.9" cy="1.5" r="1.2" fill="#e8923a"/></svg>
<span class="t" style="top:42.525px;color:#c4c4c4;font-size:5.3px;left:674.2px;">Camera</span>
<div style="left:701.8px;top:43.225px;width:9.2px;height:8.4px;background:#4f4f4f;border-radius:1.6px;"></div>
<svg style="left:702.8px;top:43.925px" width="7" height="7" viewBox="0 0 7 7" ><rect x="0.6" y="2.8" width="4.2" height="3" rx="0.5" fill="#1fa58a"/><path d="M4.8 4.3L6.6 3.2V5.6Z" fill="#1fa58a"/><circle cx="1.8" cy="1.7" r="1" fill="#1fa58a"/><circle cx="3.9" cy="1.5" r="1.2" fill="#1fa58a"/></svg>
<svg style="left:658.4px;top:54.955px" width="3" height="3.2" viewBox="0 0 3 3.2" ><path d="M0.4 0.2L2.6 1.6L0.4 3Z" fill="#c8c8c8"/></svg>
<svg style="left:664.2px;top:53.055px" width="7" height="7" viewBox="0 0 7 7" ><circle cx="3.5" cy="2.8" r="2.2" fill="none" stroke="#e8923a" stroke-width="0.8"/><path d="M2.7 5.4H4.3V6.6H2.7Z" fill="#e8923a"/><path d="M3.5 2V3.6" stroke="#e8923a" stroke-width="0.6"/></svg>
<span class="t" style="top:51.655px;color:#c4c4c4;font-size:5.3px;left:674.2px;">Light</span>
<svg style="left:696.6px;top:53.055px" width="7" height="7" viewBox="0 0 7 7" ><circle cx="3.5" cy="2.8" r="2.2" fill="none" stroke="#1fa58a" stroke-width="0.8"/><path d="M2.7 5.4H4.3V6.6H2.7Z" fill="#1fa58a"/><path d="M3.5 2V3.6" stroke="#1fa58a" stroke-width="0.6"/></svg>
<svg style="left:658.4px;top:64.085px" width="3" height="3.2" viewBox="0 0 3 3.2" ><path d="M0.4 0.2L2.6 1.6L0.4 3Z" fill="#c8c8c8"/></svg>
<svg style="left:664.2px;top:62.185px" width="7" height="7" viewBox="0 0 7 7" ><path d="M0.8 1L6.2 1L3.5 6.2Z" fill="none" stroke="#e8923a" stroke-width="0.9" stroke-linejoin="round"/><circle cx="0.9" cy="1" r="0.8" fill="#e8923a"/><circle cx="6.1" cy="1" r="0.8" fill="#e8923a"/><circle cx="3.5" cy="6.1" r="0.8" fill="#e8923a"/></svg>
<span class="t" style="top:60.785px;color:#d9852e;font-size:5.3px;left:674.2px;">Plane</span>
<svg style="left:698.4px;top:62.185px" width="7" height="7" viewBox="0 0 7 7" ><path d="M0.8 1L6.2 1L3.5 6.2Z" fill="none" stroke="#1fa58a" stroke-width="0.9" stroke-linejoin="round"/><circle cx="0.9" cy="1" r="0.8" fill="#1fa58a"/><circle cx="6.1" cy="1" r="0.8" fill="#1fa58a"/><circle cx="3.5" cy="6.1" r="0.8" fill="#1fa58a"/></svg>
<svg style="left:658.4px;top:73.215px" width="3" height="3.2" viewBox="0 0 3 3.2" ><path d="M0.4 0.2L2.6 1.6L0.4 3Z" fill="#c8c8c8"/></svg>
<div style="left:663.2px;top:70.515px;width:9px;height:8.6px;background:#5f6f92;border-radius:1.5px;"></div>
<svg style="left:664.2px;top:71.315px" width="7" height="7" viewBox="0 0 7 7" ><path d="M0.8 1L6.2 1L3.5 6.2Z" fill="none" stroke="#e8923a" stroke-width="0.9" stroke-linejoin="round"/><circle cx="0.9" cy="1" r="0.8" fill="#e8923a"/><circle cx="6.1" cy="1" r="0.8" fill="#e8923a"/><circle cx="3.5" cy="6.1" r="0.8" fill="#e8923a"/></svg>
<span class="t" style="top:69.915px;color:#f0b060;font-size:5.3px;left:674.2px;">Plane.001</span>
<svg style="left:709.6px;top:71.315px" width="7" height="7" viewBox="0 0 7 7" ><path d="M0.8 1L6.2 1L3.5 6.2Z" fill="none" stroke="#1fa58a" stroke-width="0.9" stroke-linejoin="round"/><circle cx="0.9" cy="1" r="0.8" fill="#1fa58a"/><circle cx="6.1" cy="1" r="0.8" fill="#1fa58a"/><circle cx="3.5" cy="6.1" r="0.8" fill="#1fa58a"/></svg>
<div style="left:748.3px;top:35.695px;width:5px;height:5px;background:#e6e6e6;border-radius:0.8px;"></div>
<svg style="left:748.3px;top:35.695px" width="5" height="5" viewBox="0 0 5 5" ><path d="M1 2.6L2.1 3.7L4 1.4" stroke="#222" stroke-width="0.8" fill="none"/></svg>
<svg style="left:757.2px;top:35.895px" width="6" height="4.8" viewBox="0 0 6 4.8" ><path d="M0.4 2.4C1.6 0.6 4.4 0.6 5.6 2.4C4.4 4.2 1.6 4.2 0.4 2.4Z" fill="none" stroke="#d8d8d8" stroke-width="0.7"/><circle cx="3" cy="2.4" r="1" fill="#d8d8d8"/></svg>
<svg style="left:757.2px;top:45.025px" width="6" height="4.8" viewBox="0 0 6 4.8" ><path d="M0.4 2.4C1.6 0.6 4.4 0.6 5.6 2.4C4.4 4.2 1.6 4.2 0.4 2.4Z" fill="none" stroke="#d8d8d8" stroke-width="0.7"/><circle cx="3" cy="2.4" r="1" fill="#d8d8d8"/></svg>
<svg style="left:757.2px;top:54.155px" width="6" height="4.8" viewBox="0 0 6 4.8" ><path d="M0.4 2.4C1.6 0.6 4.4 0.6 5.6 2.4C4.4 4.2 1.6 4.2 0.4 2.4Z" fill="none" stroke="#d8d8d8" stroke-width="0.7"/><circle cx="3" cy="2.4" r="1" fill="#d8d8d8"/></svg>
<svg style="left:757.2px;top:63.285px" width="6" height="4.8" viewBox="0 0 6 4.8" ><path d="M0.4 2.4C1.6 0.6 4.4 0.6 5.6 2.4C4.4 4.2 1.6 4.2 0.4 2.4Z" fill="none" stroke="#d8d8d8" stroke-width="0.7"/><circle cx="3" cy="2.4" r="1" fill="#d8d8d8"/></svg>
<svg style="left:757.2px;top:72.415px" width="6" height="4.8" viewBox="0 0 6 4.8" ><path d="M0.4 2.4C1.6 0.6 4.4 0.6 5.6 2.4C4.4 4.2 1.6 4.2 0.4 2.4Z" fill="none" stroke="#d8d8d8" stroke-width="0.7"/><circle cx="3" cy="2.4" r="1" fill="#d8d8d8"/></svg>
<div style="left:649.4px;top:171.5px;width:118.6px;height:299px;background:#363636;border-radius:0 0 2.5px 0;"></div>
<div style="left:640.6px;top:161.6px;width:12.8px;height:8px;background:#2d2d2d;border-radius:1.8px;"></div>
<svg style="left:641.8px;top:162.2px" width="7" height="7" viewBox="0 0 7 7" ><rect x="0.4" y="0.6" width="3.4" height="2.4" fill="#e6e6e6"/><rect x="0.4" y="3.8" width="3.4" height="2.4" fill="#e6e6e6"/><rect x="4.4" y="0.6" width="2.2" height="5.6" fill="#bdbdbd"/></svg>
<svg style="left:648.8px;top:164.8px" width="3.2" height="2.2" viewBox="0 0 3.2 2.2" ><path d="M0.5 0.55L1.6 1.54L2.7 0.55" stroke="#bbb" stroke-width="0.8" fill="none"/></svg>
<div style="left:675.2px;top:161.6px;width:51.6px;height:8px;background:#1d1d1d;border-radius:1.8px;"></div>
<svg style="left:676.6px;top:162.4px" width="7" height="7" viewBox="0 0 7 7" ><circle cx="4" cy="2.8" r="1.9" fill="none" stroke="#e0e0e0" stroke-width="0.8"/><path d="M2.6 4.2L0.8 6.2" stroke="#e0e0e0" stroke-width="0.9"/></svg>
<div style="left:636.1px;top:171.5px;width:13.3px;height:299px;background:#282828;border-radius:0 0 0 2.5px;"></div>
<div style="left:637.6px;top:176.4px;width:11.8px;height:11.4px;background:#303030;border-radius:1.8px 0 0 1.8px;"></div>
<svg style="left:639.8px;top:178.2px" width="7.6" height="7.6" viewBox="0 0 8 8" opacity="0.78"><path d="M2 1V3.4M2 4.4V7.2M5.2 1L4.2 3.4H6.2ZM5.2 3.6V7.2" stroke="#e0e0e0" stroke-width="1" fill="none"/></svg>
<div style="left:637.6px;top:192.9px;width:11.8px;height:11.4px;background:#3c3c3c;border-radius:1.8px 0 0 1.8px;"></div>
<svg style="left:639.8px;top:194.7px" width="7.6" height="7.6" viewBox="0 0 8 8" ><rect x="0.8" y="2.4" width="6.4" height="4.4" rx="0.6" fill="none" stroke="#e6e6e6" stroke-width="0.9"/><rect x="2.4" y="1.2" width="2.4" height="1.2" fill="#e6e6e6"/><path d="M6.4 3.4H7.6V5.8H6.4" fill="#e6e6e6"/></svg>
<div style="left:637.6px;top:205.6px;width:11.8px;height:11.4px;background:#303030;border-radius:1.8px 0 0 1.8px;"></div>
<svg style="left:639.8px;top:207.4px" width="7.6" height="7.6" viewBox="0 0 8 8" opacity="0.78"><rect x="1" y="1" width="6" height="2.6" fill="#e6e6e6"/><path d="M1.8 4.4H6.2V7H1.8Z" fill="none" stroke="#e6e6e6" stroke-width="0.7"/><path d="M3 5.7H5" stroke="#e6e6e6" stroke-width="0.6"/></svg>
<div style="left:637.6px;top:218.3px;width:11.8px;height:11.4px;background:#303030;border-radius:1.8px 0 0 1.8px;"></div>
<svg style="left:639.8px;top:220.1px" width="7.6" height="7.6" viewBox="0 0 8 8" opacity="0.78"><rect x="0.8" y="2.4" width="4.6" height="4.6" fill="#9a9a9a"/><rect x="2.4" y="1" width="4.6" height="4.6" fill="#d8d8d8"/><circle cx="4.8" cy="3.2" r="1.2" fill="#777"/></svg>
<div style="left:637.6px;top:231px;width:11.8px;height:11.4px;background:#303030;border-radius:1.8px 0 0 1.8px;"></div>
<svg style="left:639.8px;top:232.8px" width="7.6" height="7.6" viewBox="0 0 8 8" opacity="0.78"><path d="M1.2 7L2.6 2L4 7Z" fill="#e0e0e0"/><circle cx="5.6" cy="5.6" r="1.6" fill="#e0e0e0"/><circle cx="5" cy="2" r="1" fill="#e0e0e0"/></svg>
<div style="left:637.6px;top:243.7px;width:11.8px;height:11.4px;background:#303030;border-radius:1.8px 0 0 1.8px;"></div>
<svg style="left:639.8px;top:245.5px" width="7.6" height="7.6" viewBox="0 0 8 8" opacity="0.78"><circle cx="4" cy="4" r="3" fill="#d9414f"/><path d="M1.2 4.6C2.4 2.6 4.6 2.2 6.6 3M2 6C3.4 4.4 5.2 4.2 6.8 4.8" stroke="#6a1e28" stroke-width="0.8" fill="none"/></svg>
<div style="left:637.6px;top:259.9px;width:11.8px;height:11.4px;background:#303030;border-radius:1.8px 0 0 1.8px;"></div>
<svg style="left:639.8px;top:261.7px" width="7.6" height="7.6" viewBox="0 0 8 8" opacity="0.78"><rect x="1.6" y="1.6" width="4.8" height="4.8" fill="#e8923a"/><path d="M0.6 2V0.6H2M6 0.6H7.4V2M7.4 6V7.4H6M2 7.4H0.6V6" stroke="#b5712c" stroke-width="0.6" fill="none"/></svg>
<div style="left:637.6px;top:272.6px;width:11.8px;height:11.4px;background:#303030;border-radius:1.8px 0 0 1.8px;"></div>
<svg style="left:639.8px;top:274.4px" width="7.6" height="7.6" viewBox="0 0 8 8" opacity="0.78"><path d="M1.4 7L4.6 3.6" stroke="#5b8fe0" stroke-width="1.5" stroke-linecap="round"/><path d="M4 2.4A2 2 0 0 1 6.8 1.4L5.6 2.6L6 3.4L7 3A2 2 0 0 1 4.4 4.4Z" fill="#5b8fe0"/></svg>
<div style="left:637.6px;top:285.3px;width:11.8px;height:11.4px;background:#303030;border-radius:1.8px 0 0 1.8px;"></div>
<svg style="left:639.8px;top:287.1px" width="7.6" height="7.6" viewBox="0 0 8 8" opacity="0.78"><path d="M1.2 1.2L6.6 4L2.4 7Z" fill="none" stroke="#5b8fe0" stroke-width="0.7"/><circle cx="1.3" cy="1.3" r="0.9" fill="#e0e0e0"/><circle cx="6.6" cy="4" r="0.9" fill="#5b8fe0"/><circle cx="2.4" cy="6.8" r="0.9" fill="#5b8fe0"/></svg>
<div style="left:637.6px;top:298px;width:11.8px;height:11.4px;background:#303030;border-radius:1.8px 0 0 1.8px;"></div>
<svg style="left:639.8px;top:299.8px" width="7.6" height="7.6" viewBox="0 0 8 8" opacity="0.78"><circle cx="4" cy="4" r="2.9" fill="none" stroke="#5b8fe0" stroke-width="0.8"/><circle cx="4" cy="4" r="1.1" fill="#5b8fe0"/><circle cx="6.4" cy="1.8" r="0.9" fill="#5b8fe0"/></svg>
<div style="left:637.6px;top:310.7px;width:11.8px;height:11.4px;background:#303030;border-radius:1.8px 0 0 1.8px;"></div>
<svg style="left:639.8px;top:312.5px" width="7.6" height="7.6" viewBox="0 0 8 8" opacity="0.78"><circle cx="3.4" cy="4.6" r="2.5" fill="#5b8fe0"/><path d="M4.2 1.4A2.6 2.6 0 0 1 6.8 4.6" stroke="#5b8fe0" stroke-width="0.9" fill="none"/><path d="M2 5L4.6 3.6" stroke="#2b4a7a" stroke-width="0.8"/></svg>
<div style="left:637.6px;top:323.4px;width:11.8px;height:11.4px;background:#303030;border-radius:1.8px 0 0 1.8px;"></div>
<svg style="left:639.8px;top:325.2px" width="7.6" height="7.6" viewBox="0 0 8 8" opacity="0.78"><path d="M1.2 1.4L6.8 1.4L4 6.8Z" fill="none" stroke="#1fbf8f" stroke-width="0.9" stroke-linejoin="round"/><circle cx="1.3" cy="1.4" r="0.8" fill="#1fbf8f"/><circle cx="6.7" cy="1.4" r="0.8" fill="#1fbf8f"/><circle cx="4" cy="6.7" r="0.8" fill="#1fbf8f"/></svg>
<div style="left:637.6px;top:336.1px;width:11.8px;height:11.4px;background:#303030;border-radius:1.8px 0 0 1.8px;"></div>
<svg style="left:639.8px;top:337.9px" width="7.6" height="7.6" viewBox="0 0 8 8" opacity="0.78"><circle cx="4" cy="4" r="3" fill="#e0505c"/><path d="M4 4L6.2 1.9A3 3 0 0 1 7 4Z" fill="#3a2326"/><path d="M4 1V4H7" stroke="#3a2326" stroke-width="0.5" fill="none"/></svg>
<div style="left:637.6px;top:353.9px;width:11.8px;height:11.4px;background:#303030;border-radius:1.8px 0 0 1.8px;"></div>
<svg style="left:639.8px;top:355.7px" width="7.6" height="7.6" viewBox="0 0 8 8" opacity="0.78"><rect x="0.8" y="0.8" width="6.4" height="6.4" fill="#e0505c"/><path d="M0.8 2.9H7.2M0.8 5.1H7.2M2.9 0.8V7.2M5.1 0.8V7.2" stroke="#5a2228" stroke-width="0.7"/></svg>
<div style="left:649.8px;top:171.5px;width:118.2px;height:19.4px;background:#3c3c3c;"></div>
<span class="t" style="top:170.3px;color:#c8c8c8;font-size:5.3px;right:74.6px;">Device</span>
<div style="left:697.9px;top:171.5px;width:66px;height:7.2px;background:#2b2b2b;border-radius:0 0 1.6px 1.6px;"></div>
<span class="t" style="top:170.3px;color:#d4d4d4;font-size:5.3px;left:701px;">CPU</span>
<svg style="left:759px;top:174.4px" width="3.2" height="2.2" viewBox="0 0 3.2 2.2" ><path d="M0.5 0.55L1.6 1.54L2.7 0.55" stroke="#bbb" stroke-width="0.8" fill="none"/></svg>
<div style="left:697.9px;top:182.6px;width:5.4px;height:5.4px;background:#616161;border-radius:0.9px;"></div>
<span class="t" style="top:180.4px;color:#c8c8c8;font-size:5.3px;left:705.1px;">Open Shading Langua...</span>
<div style="left:649.8px;top:193.2px;width:118.2px;height:80.4px;background:#3c3c3c;"></div>
<div style="left:649.8px;top:193.2px;width:118.2px;height:11.4px;background:#444444;"></div>
<svg style="left:652.6px;top:197.6px" width="3.4" height="3" viewBox="0 0 3.4 3" ><path d="M0.2 0.4L1.7 2.6L3.2 0.4Z" fill="#c8c8c8"/></svg>
<span class="t" style="top:194px;color:#c8c8c8;font-size:5.3px;left:659px;">Sampling</span>
<svg style="left:748.4px;top:195.7px" width="7" height="6.4" viewBox="0 0 7 6.4" ><path d="M0.8 0.4V6M2.6 1H6.4M2.6 3.2H6.4M2.6 5.4H6.4" stroke="#d0d0d0" stroke-width="0.8" stroke-dasharray="1.2 0.6"/></svg>
<svg style="left:758.4px;top:197.3px" width="6" height="3.2" viewBox="0 0 6 3.2" ><path d="M0 0.5H6M0 1.6H6M0 2.7H6" stroke="#525252" stroke-width="0.4" stroke-dasharray="0.5 0.5"/></svg>
<span class="t" style="top:207.2px;color:#c8c8c8;font-size:5.3px;right:74.6px;">Integrator</span>
<div style="left:697.9px;top:208.3px;width:66px;height:7.6px;background:#2b2b2b;border-radius:1.6px;"></div>
<span class="t" style="top:207.2px;color:#d4d4d4;font-size:5.3px;left:701px;">Path Tracing</span>
<svg style="left:759px;top:211.3px" width="3.2" height="2.2" viewBox="0 0 3.2 2.2" ><path d="M0.5 0.55L1.6 1.54L2.7 0.55" stroke="#bbb" stroke-width="0.8" fill="none"/></svg>
<span class="t" style="top:219px;color:#c8c8c8;font-size:5.3px;right:74.6px;">Render</span>
<div style="left:697.9px;top:219.9px;width:66px;height:8px;background:#545454;border-radius:1.6px 1.6px 0 0;"></div>
<span class="t" style="top:219px;color:#e6e6e6;font-size:5.3px;left:680.9px;width:100px;text-align:center;">128</span>
<span class="t" style="top:227.8px;color:#c8c8c8;font-size:5.3px;right:74.6px;">Viewport</span>
<div style="left:697.9px;top:228.7px;width:66px;height:8px;background:#545454;border-radius:0 0 1.6px 1.6px;"></div>
<span class="t" style="top:227.8px;color:#e6e6e6;font-size:5.3px;left:680.9px;width:100px;text-align:center;">32</span>
<svg style="left:659.1px;top:245.1px" width="3" height="3.2" viewBox="0 0 3 3.2" ><path d="M0.4 0.2L2.6 1.6L0.4 3Z" fill="#c8c8c8"/></svg>
<div style="left:665.3px;top:244.1px;width:5.2px;height:5.2px;background:#616161;border-radius:0.9px;"></div>
<span class="t" style="top:241.8px;color:#c8c8c8;font-size:5.3px;left:672.3px;">Adaptive Sampling</span>
<svg style="left:659.1px;top:256.4px" width="3" height="3.2" viewBox="0 0 3 3.2" ><path d="M0.4 0.2L2.6 1.6L0.4 3Z" fill="#c8c8c8"/></svg>
<span class="t" style="top:253.1px;color:#c8c8c8;font-size:5.3px;left:665.3px;">Denoising</span>
<svg style="left:659.1px;top:267.2px" width="3" height="3.2" viewBox="0 0 3 3.2" ><path d="M0.4 0.2L2.6 1.6L0.4 3Z" fill="#c8c8c8"/></svg>
<span class="t" style="top:263.9px;color:#c8c8c8;font-size:5.3px;left:665.3px;">Advanced</span>
<div style="left:649.8px;top:274.4px;width:118.2px;height:10.4px;background:#444444;"></div>
<svg style="left:652.8px;top:278px" width="3" height="3.2" viewBox="0 0 3 3.2" ><path d="M0.4 0.2L2.6 1.6L0.4 3Z" fill="#c8c8c8"/></svg>
<span class="t" style="top:274.7px;color:#c8c8c8;font-size:5.3px;left:659px;">Light Paths</span>
<svg style="left:748.4px;top:276.4px" width="7" height="6.4" viewBox="0 0 7 6.4" ><path d="M0.8 0.4V6M2.6 1H6.4M2.6 3.2H6.4M2.6 5.4H6.4" stroke="#d0d0d0" stroke-width="0.8" stroke-dasharray="1.2 0.6"/></svg>
<svg style="left:758.4px;top:278px" width="6" height="3.2" viewBox="0 0 6 3.2" ><path d="M0 0.5H6M0 1.6H6M0 2.7H6" stroke="#525252" stroke-width="0.4" stroke-dasharray="0.5 0.5"/></svg>
<div style="left:649.8px;top:285.4px;width:118.2px;height:10.4px;background:#444444;"></div>
<svg style="left:652.8px;top:289px" width="3" height="3.2" viewBox="0 0 3 3.2" ><path d="M0.4 0.2L2.6 1.6L0.4 3Z" fill="#c8c8c8"/></svg>
<span class="t" style="top:285.7px;color:#c8c8c8;font-size:5.3px;left:659px;">Volumes</span>
<svg style="left:758.4px;top:289px" width="6" height="3.2" viewBox="0 0 6 3.2" ><path d="M0 0.5H6M0 1.6H6M0 2.7H6" stroke="#525252" stroke-width="0.4" stroke-dasharray="0.5 0.5"/></svg>
<div style="left:649.8px;top:296.4px;width:118.2px;height:10.4px;background:#444444;"></div>
<svg style="left:652.8px;top:300px" width="3" height="3.2" viewBox="0 0 3 3.2" ><path d="M0.4 0.2L2.6 1.6L0.4 3Z" fill="#c8c8c8"/></svg>
<span class="t" style="top:296.7px;color:#c8c8c8;font-size:5.3px;left:659px;">Hair</span>
<svg style="left:758.4px;top:300px" width="6" height="3.2" viewBox="0 0 6 3.2" ><path d="M0 0.5H6M0 1.6H6M0 2.7H6" stroke="#525252" stroke-width="0.4" stroke-dasharray="0.5 0.5"/></svg>
<div style="left:649.8px;top:307.4px;width:118.2px;height:10.4px;background:#444444;"></div>
<svg style="left:652.8px;top:311px" width="3" height="3.2" viewBox="0 0 3 3.2" ><path d="M0.4 0.2L2.6 1.6L0.4 3Z" fill="#c8c8c8"/></svg>
<div style="left:659px;top:310px;width:5.2px;height:5.2px;background:#616161;border-radius:0.9px;"></div>
<span class="t" style="top:307.7px;color:#c8c8c8;font-size:5.3px;left:666px;">Simplify</span>
<svg style="left:758.4px;top:311px" width="6" height="3.2" viewBox="0 0 6 3.2" ><path d="M0 0.5H6M0 1.6H6M0 2.7H6" stroke="#525252" stroke-width="0.4" stroke-dasharray="0.5 0.5"/></svg>
<div style="left:649.8px;top:318.4px;width:118.2px;height:10.4px;background:#444444;"></div>
<svg style="left:652.8px;top:322px" width="3" height="3.2" viewBox="0 0 3 3.2" ><path d="M0.4 0.2L2.6 1.6L0.4 3Z" fill="#c8c8c8"/></svg>
<div style="left:659px;top:321px;width:5.2px;height:5.2px;background:#616161;border-radius:0.9px;"></div>
<span class="t" style="top:318.7px;color:#c8c8c8;font-size:5.3px;left:666px;">Motion Blur</span>
<svg style="left:758.4px;top:322px" width="6" height="3.2" viewBox="0 0 6 3.2" ><path d="M0 0.5H6M0 1.6H6M0 2.7H6" stroke="#525252" stroke-width="0.4" stroke-dasharray="0.5 0.5"/></svg>
<div style="left:649.8px;top:329.4px;width:118.2px;height:10.4px;background:#444444;"></div>
<svg style="left:652.8px;top:333px" width="3" height="3.2" viewBox="0 0 3 3.2" ><path d="M0.4 0.2L2.6 1.6L0.4 3Z" fill="#c8c8c8"/></svg>
<span class="t" style="top:329.7px;color:#c8c8c8;font-size:5.3px;left:659px;">Film</span>
<svg style="left:758.4px;top:333px" width="6" height="3.2" viewBox="0 0 6 3.2" ><path d="M0 0.5H6M0 1.6H6M0 2.7H6" stroke="#525252" stroke-width="0.4" stroke-dasharray="0.5 0.5"/></svg>
<div style="left:649.8px;top:340.4px;width:118.2px;height:10.4px;background:#444444;"></div>
<svg style="left:652.8px;top:344px" width="3" height="3.2" viewBox="0 0 3 3.2" ><path d="M0.4 0.2L2.6 1.6L0.4 3Z" fill="#c8c8c8"/></svg>
<span class="t" style="top:340.7px;color:#c8c8c8;font-size:5.3px;left:659px;">Performance</span>
<svg style="left:758.4px;top:344px" width="6" height="3.2" viewBox="0 0 6 3.2" ><path d="M0 0.5H6M0 1.6H6M0 2.7H6" stroke="#525252" stroke-width="0.4" stroke-dasharray="0.5 0.5"/></svg>
<div style="left:649.8px;top:351.4px;width:118.2px;height:119px;background:#3c3c3c;"></div>
<div style="left:649.8px;top:351.4px;width:118.2px;height:10.4px;background:#444444;"></div>
<svg style="left:652.6px;top:355.3px" width="3.4" height="3" viewBox="0 0 3.4 3" ><path d="M0.2 0.4L1.7 2.6L3.2 0.4Z" fill="#c8c8c8"/></svg>
<span class="t" style="top:351.7px;color:#c8c8c8;font-size:5.3px;left:659px;">Bake</span>
<svg style="left:758.4px;top:355px" width="6" height="3.2" viewBox="0 0 6 3.2" ><path d="M0 0.5H6M0 1.6H6M0 2.7H6" stroke="#525252" stroke-width="0.4" stroke-dasharray="0.5 0.5"/></svg>
<div style="left:653px;top:366.2px;width:111px;height:7.8px;background:#545454;border-radius:1.6px;"></div>
<span class="t" style="top:365.2px;color:#e6e6e6;font-size:5.3px;left:662.8px;width:100px;text-align:center;">Bake</span>
<svg style="left:655px;top:366.8px" width="7" height="7" viewBox="0 0 7 7" ><path d="M1.4 1.6H5.4L4.8 6H2Z" fill="none" stroke="#e6e6e6" stroke-width="0.8"/><path d="M5.2 2.4C6.8 2.2 6.8 4.4 5 4.4" stroke="#e6e6e6" stroke-width="0.7" fill="none"/></svg>
<div style="left:697.9px;top:378.8px;width:5.4px;height:5.4px;background:#616161;border-radius:0.9px;"></div>
<span class="t" style="top:376.6px;color:#c8c8c8;font-size:5.3px;left:705.1px;">Bake from Multires</span>
<span class="t" style="top:388.2px;color:#c8c8c8;font-size:5.3px;right:74.6px;">Bake Type</span>
<div style="left:697.9px;top:389.3px;width:66px;height:7.6px;background:#2b2b2b;border-radius:1.6px;"></div>
<span class="t" style="top:388.2px;color:#d4d4d4;font-size:5.3px;left:701px;">Normal</span>
<svg style="left:759px;top:392.3px" width="3.2" height="2.2" viewBox="0 0 3.2 2.2" ><path d="M0.5 0.55L1.6 1.54L2.7 0.55" stroke="#bbb" stroke-width="0.8" fill="none"/></svg>
<div style="left:649.8px;top:400.6px;width:118.2px;height:55.6px;background:#3f3f3f;"></div>
<div style="left:649.8px;top:412.4px;width:118.2px;height:43.4px;background:#353535;"></div>
<svg style="left:658.9px;top:405.5px" width="3.4" height="3" viewBox="0 0 3.4 3" ><path d="M0.2 0.4L1.7 2.6L3.2 0.4Z" fill="#c8c8c8"/></svg>
<span class="t" style="top:401.9px;color:#c8c8c8;font-size:5.3px;left:665.3px;">Influence</span>
<span class="t" style="top:415.4px;color:#c8c8c8;font-size:5.3px;right:74.6px;">Space</span>
<div style="left:697.9px;top:416.6px;width:66px;height:7.4px;background:#2b2b2b;border-radius:1.6px;"></div>
<span class="t" style="top:415.4px;color:#d4d4d4;font-size:5.3px;left:701px;">Tangent</span>
<svg style="left:759px;top:419.5px" width="3.2" height="2.2" viewBox="0 0 3.2 2.2" ><path d="M0.5 0.55L1.6 1.54L2.7 0.55" stroke="#bbb" stroke-width="0.8" fill="none"/></svg>
<span class="t" style="top:425.1px;color:#c8c8c8;font-size:5.3px;right:74.6px;">Swizzle R</span>
<span class="t" style="top:434.1px;color:#c8c8c8;font-size:5.3px;right:74.6px;">G</span>
<span class="t" style="top:443.1px;color:#c8c8c8;font-size:5.3px;right:74.6px;">B</span>
<div style="left:697.9px;top:425.9px;width:66px;height:8.4px;background:#2b2b2b;border-radius:1.6px 1.6px 0 0;"></div>
<span class="t" style="top:425.2px;color:#d4d4d4;font-size:5.3px;left:701px;">+X</span>
<svg style="left:759px;top:429.3px" width="3.2" height="2.2" viewBox="0 0 3.2 2.2" ><path d="M0.5 0.55L1.6 1.54L2.7 0.55" stroke="#bbb" stroke-width="0.8" fill="none"/></svg>
<div style="left:697.9px;top:434.9px;width:66px;height:8.4px;background:#2b2b2b;"></div>
<span class="t" style="top:434.2px;color:#d4d4d4;font-size:5.3px;left:701px;">+Y</span>
<svg style="left:759px;top:438.3px" width="3.2" height="2.2" viewBox="0 0 3.2 2.2" ><path d="M0.5 0.55L1.6 1.54L2.7 0.55" stroke="#bbb" stroke-width="0.8" fill="none"/></svg>
<div style="left:697.9px;top:443.9px;width:66px;height:8.4px;background:#2b2b2b;border-radius:0 0 1.6px 1.6px;"></div>
<span class="t" style="top:443.2px;color:#d4d4d4;font-size:5.3px;left:701px;">+Z</span>
<svg style="left:759px;top:447.3px" width="3.2" height="2.2" viewBox="0 0 3.2 2.2" ><path d="M0.5 0.55L1.6 1.54L2.7 0.55" stroke="#bbb" stroke-width="0.8" fill="none"/></svg>
<div style="left:697.9px;top:434.4px;width:66px;height:0.5px;background:#353535;"></div>
<div style="left:697.9px;top:443.4px;width:66px;height:0.5px;background:#353535;"></div>
<div style="left:649.8px;top:456px;width:118.2px;height:14.4px;background:#3f3f3f;border-radius:0 0 2.5px 0;"></div>
<svg style="left:658.9px;top:461.3px" width="3.4" height="3" viewBox="0 0 3.4 3" ><path d="M0.2 0.4L1.7 2.6L3.2 0.4Z" fill="#c8c8c8"/></svg>
<div style="left:665.3px;top:460px;width:5.2px;height:5.2px;background:#4772b3;border-radius:0.9px;"></div>
<svg style="left:665.3px;top:460px" width="5.2" height="5.2" viewBox="0 0 5.2 5.2" ><path d="M1.1 2.7L2.2 3.8L4.1 1.5" stroke="#fff" stroke-width="0.8" fill="none"/></svg>
<span class="t" style="top:457.7px;color:#c8c8c8;font-size:5.3px;left:672.3px;">Selected to Active</span>
<svg style="left:5.2px;top:471.6px" width="6" height="8" viewBox="0 0 6 8" ><rect x="0.6" y="0.6" width="4.6" height="6.6" rx="1.6" fill="none" stroke="#c8c8c8" stroke-width="0.7"/><path d="M0.6 3.2V2.2A1.6 1.6 0 0 1 2.9 0.6V3.2Z" fill="#e0e0e0"/></svg>
<span class="t" style="top:470.1px;color:#a8a8a8;font-size:5.3px;left:15.8px;">Select</span>
<svg style="left:34px;top:471.4px" width="10" height="8" viewBox="0 0 10 8" ><rect x="1.2" y="1" width="4.6" height="6.4" rx="1.6" fill="none" stroke="#c8c8c8" stroke-width="0.7"/><path d="M1.2 3.4V2.6A1.6 1.6 0 0 1 3.5 1V3.4Z" fill="#e0e0e0"/><path d="M6.6 3.2V0.8H8.4M7 4.4L8.8 2.4" stroke="#c8c8c8" stroke-width="0.6" fill="none"/></svg>
<span class="t" style="top:470.1px;color:#a8a8a8;font-size:5.3px;left:46.6px;">Box Select</span>
<svg style="left:128.4px;top:471.6px" width="6" height="8" viewBox="0 0 6 8" ><rect x="0.6" y="0.6" width="4.6" height="6.6" rx="1.6" fill="none" stroke="#c8c8c8" stroke-width="0.7"/><rect x="2.3" y="0.9" width="1.2" height="2.4" fill="#e0e0e0"/></svg>
<span class="t" style="top:470.1px;color:#a8a8a8;font-size:5.3px;left:138.8px;">Dolly View</span>
<svg style="left:250px;top:471.4px" width="10" height="8" viewBox="0 0 10 8" ><rect x="1.2" y="1" width="4.6" height="6.4" rx="1.6" fill="none" stroke="#c8c8c8" stroke-width="0.7"/><path d="M5.8 3.4V2.6A1.6 1.6 0 0 0 3.5 1V3.4Z" fill="#e0e0e0"/><path d="M6.6 3.2V0.8H8.4M7 4.4L8.8 2.4" stroke="#c8c8c8" stroke-width="0.6" fill="none"/></svg>
<span class="t" style="top:470.1px;color:#a8a8a8;font-size:5.3px;left:262px;">Lasso Select</span>
<span class="t" style="top:470px;color:#a8a8a8;font-size:5.3px;right:7px;">2.91.0</span>
</div></body></html>
